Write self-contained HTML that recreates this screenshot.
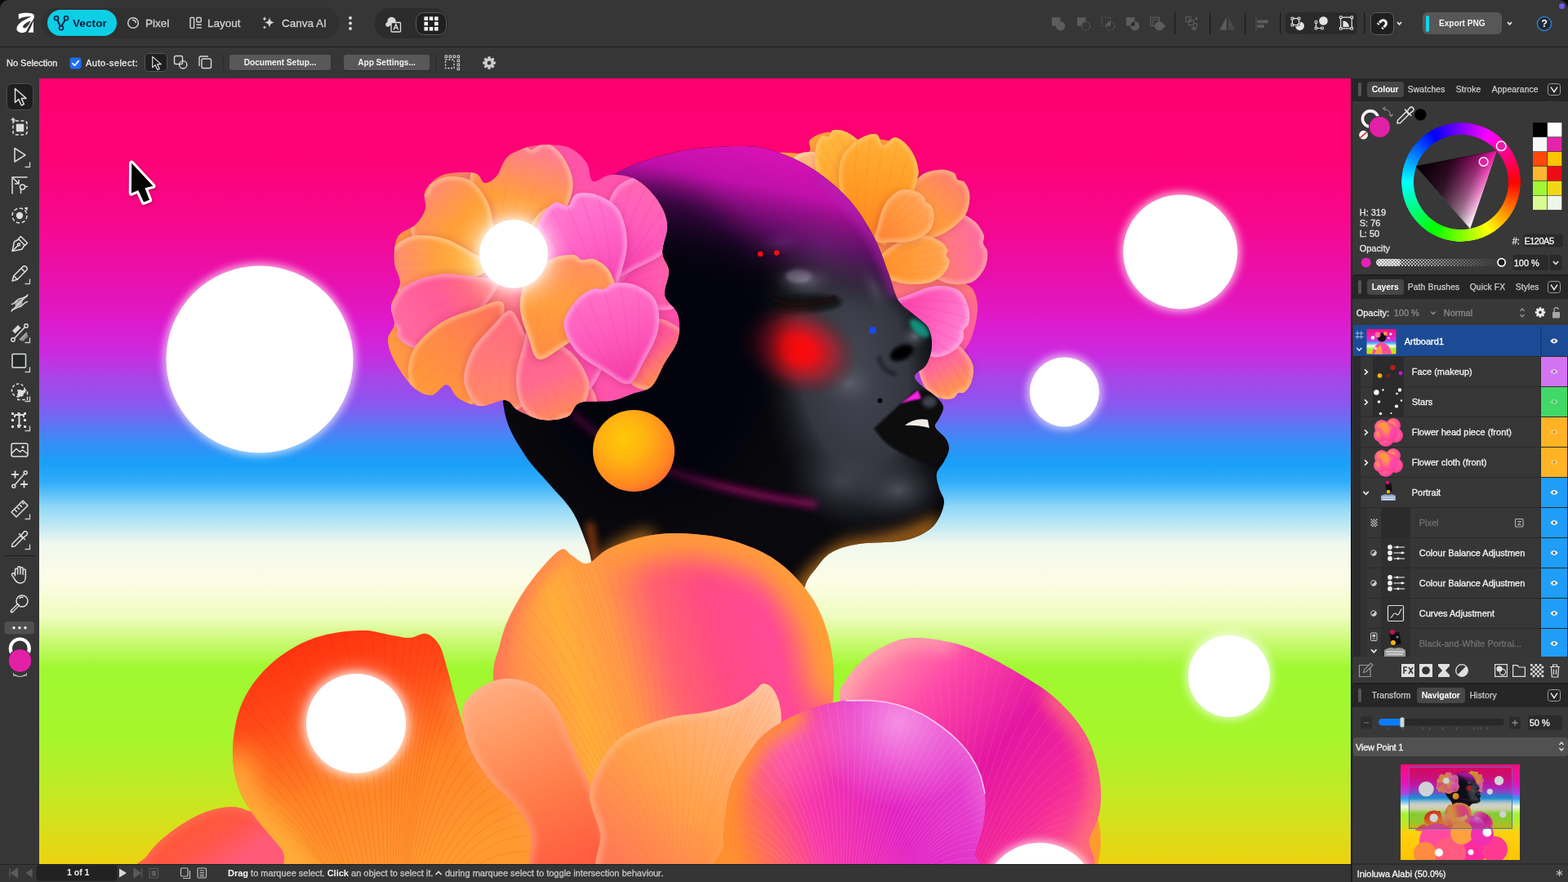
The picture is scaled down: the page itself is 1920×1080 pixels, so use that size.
<!DOCTYPE html><html lang="en"><head><meta charset="utf-8"><title>Affinity</title><style>
*{box-sizing:border-box;margin:0;padding:0}
html,body{width:1920px;height:1080px;overflow:hidden;background:#353535}
body{font-family:"Liberation Sans",sans-serif;color:#e8e8e8;font-size:11px;position:relative;-webkit-font-smoothing:antialiased}
#app{position:absolute;left:0;top:0;width:1920px;height:1080px;will-change:transform;overflow:hidden}
.abs{position:absolute}
.t{position:absolute;white-space:nowrap;line-height:1}
svg{overflow:visible}
#topbar{position:absolute;left:0;top:0;width:1920px;height:57px;background:#363636}
#topline{position:absolute;left:0;top:57px;width:1920px;height:1px;background:#1c1c1c}
#ctx{position:absolute;left:0;top:58px;width:1920px;height:38px;background:#363636}
#left{position:absolute;left:0;top:96px;width:48px;height:962px;background:#363636}
#status{position:absolute;left:0;top:1058px;width:1656px;height:22px;background:#353535;border-top:1px solid #222}
#right{position:absolute;left:1654px;top:96px;width:266px;height:984px;background:#383838;border-left:2.3px solid #1c1c1c}
#rin{position:absolute;left:0.7px;top:0;width:263px;height:984px}
.tabbar{position:absolute;left:-1px;width:265px;height:28px;background:#262626}
.tab{position:absolute;top:4px;height:19px;line-height:19px;font-size:10.3px;letter-spacing:.15px;color:#cdcdcd;white-space:nowrap;-webkit-text-stroke:0.25px #cdcdcd}
.tab.on{background:#474747;border-radius:4px;color:#fff;font-weight:bold;padding:0 6px;font-size:10.4px;letter-spacing:-.1px;-webkit-text-stroke:0}
.grip{position:absolute;left:7px;top:5px;width:4px;height:17px;border-radius:2px;background:#555}
.dd{position:absolute;left:239px;top:6px;width:16px;height:15px;border:1px solid #9a9a9a;border-radius:3.5px}
.btn{position:absolute;height:19px;line-height:19px;background:#585858;border-radius:3px;color:#f2f2f2;font-size:10.1px;font-weight:bold;text-align:center;box-shadow:0 1px 0 #2a2a2a}
.row{position:absolute;left:0;width:263px;height:37px}
.row .nm{position:absolute;top:0;line-height:37px;font-size:11px;color:#f0f0f0;white-space:nowrap;-webkit-text-stroke:0.3px}
.row .tag{position:absolute;left:230.5px;top:0;width:31.5px;height:36px}
.row .bg{position:absolute;top:0;height:36px;background:#363636}
</style></head><body><div id="app">
<svg width="1606" height="962" viewBox="48 96 1606 962" style="position:absolute;left:48px;top:96px;display:block;overflow:hidden">
<defs>
<linearGradient id="bg" x1="0" y1="0" x2="0" y2="1"><stop offset="0.0" stop-color="#ff0070"/><stop offset="0.09251559251559252" stop-color="#fe0274"/><stop offset="0.18503118503118504" stop-color="#f6088e"/><stop offset="0.27754677754677753" stop-color="#e414b8"/><stop offset="0.316008316008316" stop-color="#dc1cd0"/><stop offset="0.3492723492723493" stop-color="#cc2ae0"/><stop offset="0.38357588357588357" stop-color="#a646e8"/><stop offset="0.4158004158004158" stop-color="#8a58f0"/><stop offset="0.46153846153846156" stop-color="#3a8cf6"/><stop offset="0.4896049896049896" stop-color="#18a0f8"/><stop offset="0.5135135135135135" stop-color="#30acf8"/><stop offset="0.5457380457380457" stop-color="#90d8f8"/><stop offset="0.5925155925155925" stop-color="#f0f8ee"/><stop offset="0.6382536382536382" stop-color="#fdfde6"/><stop offset="0.685031185031185" stop-color="#f0fcc0"/><stop offset="0.7182952182952183" stop-color="#c8fa70"/><stop offset="0.7505197505197505" stop-color="#a0f830"/><stop offset="0.8357588357588358" stop-color="#a6f62c"/><stop offset="0.8721413721413721" stop-color="#b2f02a"/><stop offset="0.9085239085239085" stop-color="#c2ea24"/><stop offset="0.9501039501039501" stop-color="#d6e01c"/><stop offset="1.0" stop-color="#ecd210"/></linearGradient>
<radialGradient id="glow" cx="0.5" cy="0.5" r="0.5"><stop offset="0" stop-color="#fff"/><stop offset="0.86" stop-color="#fff"/><stop offset="0.9" stop-color="#fff" stop-opacity="0.8"/><stop offset="0.95" stop-color="#fff" stop-opacity="0.3"/><stop offset="1" stop-color="#fff" stop-opacity="0"/></radialGradient>
<radialGradient id="ear" cx="0.38" cy="0.35" r="0.75"><stop offset="0" stop-color="#ffc808"/><stop offset="0.35" stop-color="#ffb410"/><stop offset="0.75" stop-color="#ff8a20"/><stop offset="1" stop-color="#ff6030"/></radialGradient>
<radialGradient id="pk" cx="0.45" cy="0.35" r="0.7"><stop offset="0" stop-color="#ff86dc"/><stop offset="0.55" stop-color="#ff5cbc"/><stop offset="1" stop-color="#ff4c9a"/></radialGradient>
<radialGradient id="pk2" cx="0.4" cy="0.35" r="0.75"><stop offset="0" stop-color="#ff78cc"/><stop offset="0.6" stop-color="#ff4fa4"/><stop offset="1" stop-color="#ff6a78"/></radialGradient>
<radialGradient id="pko" cx="0.35" cy="0.3" r="0.85"><stop offset="0" stop-color="#ff66b8"/><stop offset="0.55" stop-color="#ff5a98"/><stop offset="1" stop-color="#ff9a38"/></radialGradient>
<radialGradient id="og" cx="0.45" cy="0.4" r="0.7"><stop offset="0" stop-color="#ffc048"/><stop offset="0.5" stop-color="#ffa236"/><stop offset="1" stop-color="#ff7a5c"/></radialGradient>
<radialGradient id="og2" cx="0.5" cy="0.45" r="0.7"><stop offset="0" stop-color="#ffb040"/><stop offset="0.6" stop-color="#ff9838"/><stop offset="1" stop-color="#ff6e78"/></radialGradient>
<radialGradient id="pch" cx="0.4" cy="0.4" r="0.75"><stop offset="0" stop-color="#ffb268"/><stop offset="0.5" stop-color="#ff8a6a"/><stop offset="1" stop-color="#ff5c96"/></radialGradient>
<linearGradient id="opk" x1="0" y1="0" x2="1" y2="0.3"><stop offset="0" stop-color="#ffa838"/><stop offset="0.5" stop-color="#ff8a60"/><stop offset="1" stop-color="#ff66a8"/></linearGradient>
<linearGradient id="pko2" x1="0" y1="0" x2="0.4" y2="1"><stop offset="0" stop-color="#ff5aa6"/><stop offset="0.55" stop-color="#ff6a8a"/><stop offset="1" stop-color="#ff9a34"/></linearGradient>
<linearGradient id="lfbase" x1="480" y1="0" x2="830" y2="0" gradientUnits="userSpaceOnUse"><stop offset="0" stop-color="#ff9a40"/><stop offset="0.35" stop-color="#ff7a70"/><stop offset="0.6" stop-color="#ff55a8"/><stop offset="1" stop-color="#ff52b0"/></linearGradient>
<linearGradient id="rfbase" x1="0" y1="170" x2="0" y2="440" gradientUnits="userSpaceOnUse"><stop offset="0" stop-color="#ffa43a"/><stop offset="0.5" stop-color="#ff9444"/><stop offset="0.75" stop-color="#ff6a90"/><stop offset="1" stop-color="#ff5aa8"/></linearGradient>
<linearGradient id="pA" x1="604" y1="900" x2="1022" y2="790" gradientUnits="userSpaceOnUse"><stop offset="0" stop-color="#ff7458"/><stop offset="0.08" stop-color="#ff8a50"/><stop offset="0.26" stop-color="#ffae3a"/><stop offset="0.4" stop-color="#ff9a48"/><stop offset="0.54" stop-color="#ff6270"/><stop offset="0.68" stop-color="#ff4a86"/><stop offset="0.84" stop-color="#ff4a98"/><stop offset="0.95" stop-color="#ff6a70"/><stop offset="1" stop-color="#ff8a40"/></linearGradient>
<linearGradient id="pB" x1="420" y1="772" x2="520" y2="1060" gradientUnits="userSpaceOnUse"><stop offset="0" stop-color="#ff3410"/><stop offset="0.25" stop-color="#ff4a18"/><stop offset="0.6" stop-color="#ff8426"/><stop offset="1" stop-color="#ff9a30"/></linearGradient>
<linearGradient id="pC" x1="230" y1="985" x2="280" y2="1060" gradientUnits="userSpaceOnUse"><stop offset="0" stop-color="#ff5a30"/><stop offset="0.6" stop-color="#ff5648"/><stop offset="1" stop-color="#ff5a78"/></linearGradient>
<linearGradient id="pD" x1="600" y1="830" x2="700" y2="1060" gradientUnits="userSpaceOnUse"><stop offset="0" stop-color="#ffae84"/><stop offset="0.3" stop-color="#ff9862"/><stop offset="0.65" stop-color="#ff7a48"/><stop offset="1" stop-color="#ff5c40"/></linearGradient>
<linearGradient id="pE" x1="930" y1="840" x2="740" y2="1040" gradientUnits="userSpaceOnUse"><stop offset="0" stop-color="#ffc09a"/><stop offset="0.3" stop-color="#ffb070"/><stop offset="0.6" stop-color="#ffa24a"/><stop offset="1" stop-color="#ff7a54"/></linearGradient>
<linearGradient id="pF" x1="888" y1="1000" x2="1206" y2="900" gradientUnits="userSpaceOnUse"><stop offset="0" stop-color="#ff8a30"/><stop offset="0.12" stop-color="#ff6a60"/><stop offset="0.3" stop-color="#f838a8"/><stop offset="0.6" stop-color="#e222c2"/><stop offset="0.85" stop-color="#e43ccc"/><stop offset="1" stop-color="#f070dc"/></linearGradient>
<radialGradient id="pFhi" cx="1100" cy="885" r="105" gradientUnits="userSpaceOnUse"><stop offset="0" stop-color="#f9a0e8" stop-opacity="0.85"/><stop offset="1" stop-color="#f9a0e8" stop-opacity="0"/></radialGradient>
<radialGradient id="pFpk" cx="960" cy="900" r="90" gradientUnits="userSpaceOnUse"><stop offset="0" stop-color="#ff6aa8" stop-opacity="0.9"/><stop offset="1" stop-color="#ff6aa8" stop-opacity="0"/></radialGradient>
<linearGradient id="pG" x1="1060" y1="800" x2="1330" y2="1040" gradientUnits="userSpaceOnUse"><stop offset="0" stop-color="#ff96a4"/><stop offset="0.25" stop-color="#ff4aa8"/><stop offset="0.55" stop-color="#e416a2"/><stop offset="0.8" stop-color="#f42a98"/><stop offset="1" stop-color="#ff5a8a"/></linearGradient>
<linearGradient id="headtop" x1="940" y1="176" x2="905" y2="350" gradientUnits="userSpaceOnUse"><stop offset="0" stop-color="#dc12b6"/><stop offset="0.3" stop-color="#c010aa"/><stop offset="0.62" stop-color="#640c6c" stop-opacity="0.8"/><stop offset="1" stop-color="#0a0a10" stop-opacity="0"/></linearGradient>
<radialGradient id="blush" cx="0.5" cy="0.5" r="0.5"><stop offset="0" stop-color="#ff0a0a"/><stop offset="0.28" stop-color="#f80c12" stop-opacity="0.95"/><stop offset="0.6" stop-color="#d81424" stop-opacity="0.55"/><stop offset="1" stop-color="#601018" stop-opacity="0"/></radialGradient>
<radialGradient id="hl" cx="0.5" cy="0.5" r="0.5"><stop offset="0" stop-color="#585b66" stop-opacity="0.9"/><stop offset="1" stop-color="#30323c" stop-opacity="0"/></radialGradient>
<radialGradient id="facel" cx="0.5" cy="0.5" r="0.5"><stop offset="0" stop-color="#454853" stop-opacity="1"/><stop offset="0.55" stop-color="#3a3d47" stop-opacity="0.88"/><stop offset="1" stop-color="#14151a" stop-opacity="0"/></radialGradient>
<radialGradient id="hl2" cx="0.5" cy="0.5" r="0.5"><stop offset="0" stop-color="#8a8c98" stop-opacity="0.9"/><stop offset="1" stop-color="#40424c" stop-opacity="0"/></radialGradient>
<radialGradient id="neckglow" cx="0.5" cy="0.5" r="0.5"><stop offset="0" stop-color="#ff9a20" stop-opacity="0.95"/><stop offset="0.5" stop-color="#c05a10" stop-opacity="0.6"/><stop offset="1" stop-color="#301000" stop-opacity="0"/></radialGradient>
<filter id="b2" filterUnits="userSpaceOnUse" x="0" y="40" width="1720" height="1100"><feGaussianBlur stdDeviation="2"/></filter>
<filter id="b5" filterUnits="userSpaceOnUse" x="0" y="40" width="1720" height="1100"><feGaussianBlur stdDeviation="5"/></filter>
<filter id="b10" filterUnits="userSpaceOnUse" x="0" y="40" width="1720" height="1100"><feGaussianBlur stdDeviation="10"/></filter>
<filter id="b16" filterUnits="userSpaceOnUse" x="0" y="40" width="1720" height="1100"><feGaussianBlur stdDeviation="16"/></filter>
<filter id="b1" filterUnits="userSpaceOnUse" x="0" y="40" width="1720" height="1100"><feGaussianBlur stdDeviation="0.8"/></filter>
<clipPath id="headclip"><path d="M910.0 179.0C928.5 179.3 936.5 181.2 951.0 186.0C965.5 190.8 982.2 198.2 997.0 208.0C1011.8 217.8 1027.8 231.3 1040.0 245.0C1052.2 258.7 1062.0 275.0 1070.0 290.0C1078.0 305.0 1083.0 322.0 1088.0 335.0C1093.0 348.0 1094.7 359.5 1100.0 368.0C1105.3 376.5 1113.8 380.3 1120.0 386.0C1126.2 391.7 1133.5 395.5 1137.0 402.0C1140.5 408.5 1141.5 417.5 1141.0 425.0C1140.5 432.5 1137.5 441.2 1134.0 447.0C1130.5 452.8 1121.0 455.8 1120.0 460.0C1119.0 464.2 1123.8 467.8 1128.0 472.0C1132.2 476.2 1140.5 480.7 1145.0 485.0C1149.5 489.3 1154.2 493.5 1155.0 498.0C1155.8 502.5 1151.7 507.8 1150.0 512.0C1148.3 516.2 1143.7 518.8 1145.0 523.0C1146.3 527.2 1155.2 532.5 1158.0 537.0C1160.8 541.5 1162.3 545.3 1162.0 550.0C1161.7 554.7 1158.5 560.0 1156.0 565.0C1153.5 570.0 1148.0 574.5 1147.0 580.0C1146.0 585.5 1148.5 592.3 1150.0 598.0C1151.5 603.7 1156.0 608.0 1156.0 614.0C1156.0 620.0 1153.3 628.0 1150.0 634.0C1146.7 640.0 1143.3 645.3 1136.0 650.0C1128.7 654.7 1120.0 659.3 1106.0 662.0C1092.0 664.7 1066.5 663.7 1052.0 666.0C1037.5 668.3 1027.7 671.2 1019.0 676.0C1010.3 680.8 1005.7 687.7 1000.0 695.0C994.3 702.3 988.3 707.5 985.0 720.0C981.7 732.5 1022.5 761.7 980.0 770.0C937.5 778.3 772.5 782.8 730.0 770.0C687.5 757.2 727.3 711.3 725.0 693.0C722.7 674.7 720.2 671.3 716.0 660.0C711.8 648.7 707.3 636.3 700.0 625.0C692.7 613.7 681.7 603.5 672.0 592.0C662.3 580.5 651.0 570.5 642.0 556.0C633.0 541.5 622.0 526.0 618.0 505.0C614.0 484.0 611.8 459.2 618.0 430.0C624.2 400.8 641.3 358.0 655.0 330.0C668.7 302.0 685.8 279.8 700.0 262.0C714.2 244.2 727.0 233.2 740.0 223.0C753.0 212.8 761.3 207.5 778.0 201.0C794.7 194.5 818.0 187.7 840.0 184.0C862.0 180.3 891.5 178.7 910.0 179.0Z"/></clipPath>
</defs>
<g id="artg">
<rect x="48" y="96" width="1606" height="962" fill="url(#bg)"/>
<circle cx="318" cy="440" r="118.5" fill="#fff" opacity=".6" filter="url(#b5)"/><circle cx="318" cy="440" r="114.5" fill="#fff"/>
<circle cx="1445.3" cy="308.4" r="74" fill="#fff" opacity=".6" filter="url(#b5)"/><circle cx="1445.3" cy="308.4" r="70" fill="#fff"/>
<circle cx="1303.4" cy="480" r="46.5" fill="#fff" opacity=".6" filter="url(#b5)"/><circle cx="1303.4" cy="480" r="42.5" fill="#fff"/>
<circle cx="1505" cy="828" r="54" fill="#fff" opacity=".6" filter="url(#b5)"/><circle cx="1505" cy="828" r="50" fill="#fff"/>
<path d="M945.0 192.0C943.2 181.5 981.2 190.5 989.0 187.0C996.8 183.5 987.8 175.2 992.0 171.0C996.2 166.8 1006.0 162.2 1014.0 162.0C1022.0 161.8 1034.2 166.3 1040.0 170.0C1045.8 173.7 1043.8 183.8 1049.0 184.0C1054.2 184.2 1062.0 171.8 1071.0 171.0C1080.0 170.2 1094.0 172.7 1103.0 179.0C1112.0 185.3 1122.7 200.3 1125.0 209.0C1127.3 217.7 1114.5 226.3 1117.0 231.0C1119.5 235.7 1131.3 235.3 1140.0 237.0C1148.7 238.7 1163.3 237.7 1169.0 241.0C1174.7 244.3 1169.8 251.3 1174.0 257.0C1178.2 262.7 1189.7 267.2 1194.0 275.0C1198.3 282.8 1201.0 295.0 1200.0 304.0C1199.0 313.0 1192.3 322.7 1188.0 329.0C1183.7 335.3 1173.5 337.8 1174.0 342.0C1174.5 346.2 1187.2 347.8 1191.0 354.0C1194.8 360.2 1197.5 368.5 1197.0 379.0C1196.5 389.5 1192.7 407.0 1188.0 417.0C1183.3 427.0 1176.5 434.8 1169.0 439.0C1161.5 443.2 1154.5 445.2 1143.0 442.0C1131.5 438.8 1115.5 438.7 1100.0 420.0C1084.5 401.3 1066.7 358.3 1050.0 330.0C1033.3 301.7 1017.5 273.0 1000.0 250.0C982.5 227.0 946.8 202.5 945.0 192.0Z" fill="url(#rfbase)"/>
<linearGradient id="gf1" gradientUnits="userSpaceOnUse" x1="1075" y1="262" x2="971" y2="202"><stop offset="0" stop-color="#ff9050"/><stop offset=".55" stop-color="#ffa858"/><stop offset="1" stop-color="#ffc088"/></linearGradient><clipPath id="kf1"><path d="M1075.0 262.0C1072.8 265.8 1059.8 263.1 1049.7 262.6C1039.6 262.1 1025.8 262.0 1014.4 258.9C1003.1 255.8 989.5 250.1 981.5 244.0C973.4 238.0 968.9 228.9 966.1 222.7C963.2 216.4 963.5 209.9 964.4 206.4C965.2 203.0 969.8 204.3 971.1 202.0C972.4 199.7 969.5 195.5 972.2 192.9C974.8 190.3 980.3 186.8 987.1 186.3C993.8 185.8 1003.5 185.8 1012.7 190.0C1021.8 194.1 1033.7 202.8 1042.0 211.1C1050.4 219.4 1057.4 231.3 1062.9 239.8C1068.4 248.3 1077.2 258.2 1075.0 262.0Z"/></clipPath><path d="M1075.0 262.0C1072.8 265.8 1059.8 263.1 1049.7 262.6C1039.6 262.1 1025.8 262.0 1014.4 258.9C1003.1 255.8 989.5 250.1 981.5 244.0C973.4 238.0 968.9 228.9 966.1 222.7C963.2 216.4 963.5 209.9 964.4 206.4C965.2 203.0 969.8 204.3 971.1 202.0C972.4 199.7 969.5 195.5 972.2 192.9C974.8 190.3 980.3 186.8 987.1 186.3C993.8 185.8 1003.5 185.8 1012.7 190.0C1021.8 194.1 1033.7 202.8 1042.0 211.1C1050.4 219.4 1057.4 231.3 1062.9 239.8C1068.4 248.3 1077.2 258.2 1075.0 262.0Z" fill="#a01850" opacity=".28" filter="url(#b5)" transform="translate(2.6 1.5)"/><path d="M1075.0 262.0C1072.8 265.8 1059.8 263.1 1049.7 262.6C1039.6 262.1 1025.8 262.0 1014.4 258.9C1003.1 255.8 989.5 250.1 981.5 244.0C973.4 238.0 968.9 228.9 966.1 222.7C963.2 216.4 963.5 209.9 964.4 206.4C965.2 203.0 969.8 204.3 971.1 202.0C972.4 199.7 969.5 195.5 972.2 192.9C974.8 190.3 980.3 186.8 987.1 186.3C993.8 185.8 1003.5 185.8 1012.7 190.0C1021.8 194.1 1033.7 202.8 1042.0 211.1C1050.4 219.4 1057.4 231.3 1062.9 239.8C1068.4 248.3 1077.2 258.2 1075.0 262.0Z" fill="url(#gf1)"/><g clip-path="url(#kf1)"><path d="M1075.0 262.0C1072.8 265.8 1059.8 263.1 1049.7 262.6C1039.6 262.1 1025.8 262.0 1014.4 258.9C1003.1 255.8 989.5 250.1 981.5 244.0C973.4 238.0 968.9 228.9 966.1 222.7C963.2 216.4 963.5 209.9 964.4 206.4C965.2 203.0 969.8 204.3 971.1 202.0C972.4 199.7 969.5 195.5 972.2 192.9C974.8 190.3 980.3 186.8 987.1 186.3C993.8 185.8 1003.5 185.8 1012.7 190.0C1021.8 194.1 1033.7 202.8 1042.0 211.1C1050.4 219.4 1057.4 231.3 1062.9 239.8C1068.4 248.3 1077.2 258.2 1075.0 262.0Z" fill="none" stroke="#ffd8b0" stroke-width="9" opacity="0.55" filter="url(#b2)"/><path d="M1062 261Q1003 243 962 222M1063 258Q1008 235 968 213M1065 256Q1013 226 973 203M1066 254Q1018 217 979 194M1067 251Q1023 209 984 184" fill="none" stroke="#ff9050" stroke-width="1.5" opacity=".22"/></g>
<linearGradient id="gf2" gradientUnits="userSpaceOnUse" x1="1085" y1="300" x2="1015" y2="168"><stop offset="0" stop-color="#ff8a28"/><stop offset=".55" stop-color="#ffa42c"/><stop offset="1" stop-color="#ffb63c"/></linearGradient><clipPath id="kf2"><path d="M1085.0 300.0C1080.7 302.3 1069.3 290.5 1059.5 283.0C1049.8 275.4 1036.1 265.7 1026.5 254.7C1016.9 243.6 1006.6 228.4 1001.9 216.8C997.2 205.1 997.7 193.0 998.3 184.7C998.9 176.5 1002.8 170.2 1005.5 167.3C1008.2 164.4 1012.1 168.9 1014.6 167.6C1017.1 166.2 1016.5 160.0 1020.6 159.2C1024.7 158.5 1032.1 158.8 1039.1 163.0C1046.1 167.2 1055.6 174.0 1062.5 184.6C1069.3 195.1 1076.3 212.0 1080.1 226.1C1083.9 240.3 1084.3 257.0 1085.1 269.3C1086.0 281.7 1089.3 297.7 1085.0 300.0Z"/></clipPath><path d="M1085.0 300.0C1080.7 302.3 1069.3 290.5 1059.5 283.0C1049.8 275.4 1036.1 265.7 1026.5 254.7C1016.9 243.6 1006.6 228.4 1001.9 216.8C997.2 205.1 997.7 193.0 998.3 184.7C998.9 176.5 1002.8 170.2 1005.5 167.3C1008.2 164.4 1012.1 168.9 1014.6 167.6C1017.1 166.2 1016.5 160.0 1020.6 159.2C1024.7 158.5 1032.1 158.8 1039.1 163.0C1046.1 167.2 1055.6 174.0 1062.5 184.6C1069.3 195.1 1076.3 212.0 1080.1 226.1C1083.9 240.3 1084.3 257.0 1085.1 269.3C1086.0 281.7 1089.3 297.7 1085.0 300.0Z" fill="#a01850" opacity=".28" filter="url(#b5)" transform="translate(1.4 2.6)"/><path d="M1085.0 300.0C1080.7 302.3 1069.3 290.5 1059.5 283.0C1049.8 275.4 1036.1 265.7 1026.5 254.7C1016.9 243.6 1006.6 228.4 1001.9 216.8C997.2 205.1 997.7 193.0 998.3 184.7C998.9 176.5 1002.8 170.2 1005.5 167.3C1008.2 164.4 1012.1 168.9 1014.6 167.6C1017.1 166.2 1016.5 160.0 1020.6 159.2C1024.7 158.5 1032.1 158.8 1039.1 163.0C1046.1 167.2 1055.6 174.0 1062.5 184.6C1069.3 195.1 1076.3 212.0 1080.1 226.1C1083.9 240.3 1084.3 257.0 1085.1 269.3C1086.0 281.7 1089.3 297.7 1085.0 300.0Z" fill="url(#gf2)"/><g clip-path="url(#kf2)"><path d="M1085.0 300.0C1080.7 302.3 1069.3 290.5 1059.5 283.0C1049.8 275.4 1036.1 265.7 1026.5 254.7C1016.9 243.6 1006.6 228.4 1001.9 216.8C997.2 205.1 997.7 193.0 998.3 184.7C998.9 176.5 1002.8 170.2 1005.5 167.3C1008.2 164.4 1012.1 168.9 1014.6 167.6C1017.1 166.2 1016.5 160.0 1020.6 159.2C1024.7 158.5 1032.1 158.8 1039.1 163.0C1046.1 167.2 1055.6 174.0 1062.5 184.6C1069.3 195.1 1076.3 212.0 1080.1 226.1C1083.9 240.3 1084.3 257.0 1085.1 269.3C1086.0 281.7 1089.3 297.7 1085.0 300.0Z" fill="none" stroke="#ffcc70" stroke-width="9" opacity="0.55" filter="url(#b2)"/><path d="M1073 290Q1024 231 995 181M1075 288Q1033 226 1005 176M1078 287Q1043 221 1016 170M1081 285Q1052 215 1026 165M1083 284Q1062 210 1037 159" fill="none" stroke="#ff8a28" stroke-width="1.5" opacity=".22"/></g>
<linearGradient id="gf3" gradientUnits="userSpaceOnUse" x1="1130" y1="400" x2="1173" y2="481"><stop offset="0" stop-color="#ff4a9a"/><stop offset=".55" stop-color="#ff6a98"/><stop offset="1" stop-color="#ff9a44"/></linearGradient><clipPath id="kf3"><path d="M1130.0 400.0C1134.0 397.9 1142.4 404.4 1149.8 408.2C1157.3 412.1 1167.8 416.9 1174.6 423.2C1181.5 429.4 1188.4 438.4 1190.9 445.8C1193.4 453.1 1191.3 461.5 1189.6 467.3C1188.0 473.0 1183.8 477.8 1181.1 480.2C1178.3 482.5 1175.6 480.0 1173.2 481.2C1170.8 482.5 1170.5 486.7 1166.8 487.7C1163.2 488.8 1156.8 489.6 1151.3 487.6C1145.8 485.7 1138.4 482.3 1133.9 476.1C1129.4 469.8 1125.6 459.1 1124.3 449.9C1122.9 440.8 1124.8 429.3 1125.7 421.0C1126.7 412.7 1126.0 402.1 1130.0 400.0Z"/></clipPath><path d="M1130.0 400.0C1134.0 397.9 1142.4 404.4 1149.8 408.2C1157.3 412.1 1167.8 416.9 1174.6 423.2C1181.5 429.4 1188.4 438.4 1190.9 445.8C1193.4 453.1 1191.3 461.5 1189.6 467.3C1188.0 473.0 1183.8 477.8 1181.1 480.2C1178.3 482.5 1175.6 480.0 1173.2 481.2C1170.8 482.5 1170.5 486.7 1166.8 487.7C1163.2 488.8 1156.8 489.6 1151.3 487.6C1145.8 485.7 1138.4 482.3 1133.9 476.1C1129.4 469.8 1125.6 459.1 1124.3 449.9C1122.9 440.8 1124.8 429.3 1125.7 421.0C1126.7 412.7 1126.0 402.1 1130.0 400.0Z" fill="#a01850" opacity=".28" filter="url(#b5)" transform="translate(-1.4 -2.6)"/><path d="M1130.0 400.0C1134.0 397.9 1142.4 404.4 1149.8 408.2C1157.3 412.1 1167.8 416.9 1174.6 423.2C1181.5 429.4 1188.4 438.4 1190.9 445.8C1193.4 453.1 1191.3 461.5 1189.6 467.3C1188.0 473.0 1183.8 477.8 1181.1 480.2C1178.3 482.5 1175.6 480.0 1173.2 481.2C1170.8 482.5 1170.5 486.7 1166.8 487.7C1163.2 488.8 1156.8 489.6 1151.3 487.6C1145.8 485.7 1138.4 482.3 1133.9 476.1C1129.4 469.8 1125.6 459.1 1124.3 449.9C1122.9 440.8 1124.8 429.3 1125.7 421.0C1126.7 412.7 1126.0 402.1 1130.0 400.0Z" fill="url(#gf3)"/><g clip-path="url(#kf3)"><path d="M1130.0 400.0C1134.0 397.9 1142.4 404.4 1149.8 408.2C1157.3 412.1 1167.8 416.9 1174.6 423.2C1181.5 429.4 1188.4 438.4 1190.9 445.8C1193.4 453.1 1191.3 461.5 1189.6 467.3C1188.0 473.0 1183.8 477.8 1181.1 480.2C1178.3 482.5 1175.6 480.0 1173.2 481.2C1170.8 482.5 1170.5 486.7 1166.8 487.7C1163.2 488.8 1156.8 489.6 1151.3 487.6C1145.8 485.7 1138.4 482.3 1133.9 476.1C1129.4 469.8 1125.6 459.1 1124.3 449.9C1122.9 440.8 1124.8 429.3 1125.7 421.0C1126.7 412.7 1126.0 402.1 1130.0 400.0Z" fill="none" stroke="#ffc0a0" stroke-width="9" opacity="0.55" filter="url(#b2)"/><path d="M1139 406Q1174 439 1192 469M1137 407Q1165 444 1182 474M1134 408Q1156 449 1172 480M1132 409Q1147 454 1162 485M1129 411Q1138 458 1153 490" fill="none" stroke="#ff4a9a" stroke-width="1.5" opacity=".22"/></g>
<linearGradient id="gf4" gradientUnits="userSpaceOnUse" x1="1092" y1="372" x2="1180" y2="404"><stop offset="0" stop-color="#f83aa8"/><stop offset=".55" stop-color="#ff5cbc"/><stop offset="1" stop-color="#ff80d0"/></linearGradient><clipPath id="kf4"><path d="M1092.0 372.0C1094.1 366.2 1105.4 364.1 1114.2 360.4C1123.0 356.8 1135.1 351.1 1145.0 350.2C1154.8 349.3 1166.4 350.8 1173.2 355.1C1180.0 359.3 1183.5 368.9 1185.7 375.7C1187.9 382.5 1187.3 390.9 1186.4 395.6C1185.5 400.4 1181.6 400.7 1180.3 404.1C1179.1 407.6 1181.4 411.7 1179.0 416.2C1176.5 420.6 1171.5 427.5 1165.6 431.0C1159.6 434.5 1151.1 438.5 1143.3 437.2C1135.5 435.8 1125.5 429.8 1118.5 422.8C1111.6 415.8 1106.0 403.6 1101.6 395.2C1097.2 386.7 1089.9 377.8 1092.0 372.0Z"/></clipPath><path d="M1092.0 372.0C1094.1 366.2 1105.4 364.1 1114.2 360.4C1123.0 356.8 1135.1 351.1 1145.0 350.2C1154.8 349.3 1166.4 350.8 1173.2 355.1C1180.0 359.3 1183.5 368.9 1185.7 375.7C1187.9 382.5 1187.3 390.9 1186.4 395.6C1185.5 400.4 1181.6 400.7 1180.3 404.1C1179.1 407.6 1181.4 411.7 1179.0 416.2C1176.5 420.6 1171.5 427.5 1165.6 431.0C1159.6 434.5 1151.1 438.5 1143.3 437.2C1135.5 435.8 1125.5 429.8 1118.5 422.8C1111.6 415.8 1106.0 403.6 1101.6 395.2C1097.2 386.7 1089.9 377.8 1092.0 372.0Z" fill="#a01850" opacity=".28" filter="url(#b5)" transform="translate(-2.8 -1.0)"/><path d="M1092.0 372.0C1094.1 366.2 1105.4 364.1 1114.2 360.4C1123.0 356.8 1135.1 351.1 1145.0 350.2C1154.8 349.3 1166.4 350.8 1173.2 355.1C1180.0 359.3 1183.5 368.9 1185.7 375.7C1187.9 382.5 1187.3 390.9 1186.4 395.6C1185.5 400.4 1181.6 400.7 1180.3 404.1C1179.1 407.6 1181.4 411.7 1179.0 416.2C1176.5 420.6 1171.5 427.5 1165.6 431.0C1159.6 434.5 1151.1 438.5 1143.3 437.2C1135.5 435.8 1125.5 429.8 1118.5 422.8C1111.6 415.8 1106.0 403.6 1101.6 395.2C1097.2 386.7 1089.9 377.8 1092.0 372.0Z" fill="url(#gf4)"/><g clip-path="url(#kf4)"><path d="M1092.0 372.0C1094.1 366.2 1105.4 364.1 1114.2 360.4C1123.0 356.8 1135.1 351.1 1145.0 350.2C1154.8 349.3 1166.4 350.8 1173.2 355.1C1180.0 359.3 1183.5 368.9 1185.7 375.7C1187.9 382.5 1187.3 390.9 1186.4 395.6C1185.5 400.4 1181.6 400.7 1180.3 404.1C1179.1 407.6 1181.4 411.7 1179.0 416.2C1176.5 420.6 1171.5 427.5 1165.6 431.0C1159.6 434.5 1151.1 438.5 1143.3 437.2C1135.5 435.8 1125.5 429.8 1118.5 422.8C1111.6 415.8 1106.0 403.6 1101.6 395.2C1097.2 386.7 1089.9 377.8 1092.0 372.0Z" fill="none" stroke="#ffc0ec" stroke-width="9" opacity="0.55" filter="url(#b2)"/><path d="M1103 368Q1154 365 1189 375M1102 372Q1150 378 1184 389M1101 375Q1145 391 1179 404M1100 379Q1140 404 1173 418M1098 382Q1136 417 1168 432" fill="none" stroke="#f83aa8" stroke-width="1.5" opacity=".22"/></g>
<linearGradient id="gf5" gradientUnits="userSpaceOnUse" x1="1110" y1="318" x2="1204" y2="298"><stop offset="0" stop-color="#ff7a50"/><stop offset=".55" stop-color="#ff7a80"/><stop offset="1" stop-color="#ff6aa4"/></linearGradient><clipPath id="kf5"><path d="M1110.0 318.0C1108.7 312.0 1117.4 304.1 1123.1 296.3C1128.8 288.5 1136.2 277.2 1144.2 271.2C1152.3 265.2 1163.2 260.3 1171.3 260.3C1179.5 260.3 1187.7 266.6 1193.3 271.1C1198.8 275.6 1202.9 283.1 1204.6 287.6C1206.4 292.1 1203.1 294.5 1203.9 298.0C1204.7 301.6 1208.9 303.8 1209.2 308.9C1209.4 314.0 1208.8 322.5 1205.5 328.6C1202.2 334.8 1197.0 342.7 1189.5 345.8C1182.0 348.8 1170.1 349.0 1160.3 346.8C1150.5 344.6 1139.1 337.3 1130.7 332.5C1122.4 327.7 1111.3 324.0 1110.0 318.0Z"/></clipPath><path d="M1110.0 318.0C1108.7 312.0 1117.4 304.1 1123.1 296.3C1128.8 288.5 1136.2 277.2 1144.2 271.2C1152.3 265.2 1163.2 260.3 1171.3 260.3C1179.5 260.3 1187.7 266.6 1193.3 271.1C1198.8 275.6 1202.9 283.1 1204.6 287.6C1206.4 292.1 1203.1 294.5 1203.9 298.0C1204.7 301.6 1208.9 303.8 1209.2 308.9C1209.4 314.0 1208.8 322.5 1205.5 328.6C1202.2 334.8 1197.0 342.7 1189.5 345.8C1182.0 348.8 1170.1 349.0 1160.3 346.8C1150.5 344.6 1139.1 337.3 1130.7 332.5C1122.4 327.7 1111.3 324.0 1110.0 318.0Z" fill="#a01850" opacity=".28" filter="url(#b5)" transform="translate(-2.9 0.6)"/><path d="M1110.0 318.0C1108.7 312.0 1117.4 304.1 1123.1 296.3C1128.8 288.5 1136.2 277.2 1144.2 271.2C1152.3 265.2 1163.2 260.3 1171.3 260.3C1179.5 260.3 1187.7 266.6 1193.3 271.1C1198.8 275.6 1202.9 283.1 1204.6 287.6C1206.4 292.1 1203.1 294.5 1203.9 298.0C1204.7 301.6 1208.9 303.8 1209.2 308.9C1209.4 314.0 1208.8 322.5 1205.5 328.6C1202.2 334.8 1197.0 342.7 1189.5 345.8C1182.0 348.8 1170.1 349.0 1160.3 346.8C1150.5 344.6 1139.1 337.3 1130.7 332.5C1122.4 327.7 1111.3 324.0 1110.0 318.0Z" fill="url(#gf5)"/><g clip-path="url(#kf5)"><path d="M1110.0 318.0C1108.7 312.0 1117.4 304.1 1123.1 296.3C1128.8 288.5 1136.2 277.2 1144.2 271.2C1152.3 265.2 1163.2 260.3 1171.3 260.3C1179.5 260.3 1187.7 266.6 1193.3 271.1C1198.8 275.6 1202.9 283.1 1204.6 287.6C1206.4 292.1 1203.1 294.5 1203.9 298.0C1204.7 301.6 1208.9 303.8 1209.2 308.9C1209.4 314.0 1208.8 322.5 1205.5 328.6C1202.2 334.8 1197.0 342.7 1189.5 345.8C1182.0 348.8 1170.1 349.0 1160.3 346.8C1150.5 344.6 1139.1 337.3 1130.7 332.5C1122.4 327.7 1111.3 324.0 1110.0 318.0Z" fill="none" stroke="#ffc0b0" stroke-width="9" opacity="0.55" filter="url(#b2)"/><path d="M1118 309Q1161 279 1196 269M1119 312Q1163 292 1199 284M1119 316Q1166 306 1202 298M1120 320Q1169 320 1205 313M1121 323Q1172 333 1208 328" fill="none" stroke="#ff7a50" stroke-width="1.5" opacity=".22"/></g>
<linearGradient id="gf6" gradientUnits="userSpaceOnUse" x1="1100" y1="300" x2="1172" y2="220"><stop offset="0" stop-color="#ff8830"/><stop offset=".55" stop-color="#ff9a40"/><stop offset="1" stop-color="#ff8070"/></linearGradient><clipPath id="kf6"><path d="M1100.0 300.0C1096.2 296.6 1100.1 284.9 1101.6 275.2C1103.0 265.6 1104.3 252.3 1108.6 242.3C1112.9 232.4 1120.1 221.2 1127.1 215.4C1134.2 209.7 1144.1 208.5 1151.0 207.8C1157.8 207.2 1164.6 209.7 1168.2 211.7C1171.7 213.7 1170.0 217.7 1172.3 219.7C1174.5 221.8 1179.2 220.4 1181.7 223.9C1184.2 227.4 1187.5 233.9 1187.4 240.6C1187.3 247.3 1186.4 256.7 1181.3 264.2C1176.1 271.6 1165.9 280.1 1156.4 285.4C1147.0 290.7 1133.9 293.4 1124.5 295.9C1115.0 298.3 1103.8 303.4 1100.0 300.0Z"/></clipPath><path d="M1100.0 300.0C1096.2 296.6 1100.1 284.9 1101.6 275.2C1103.0 265.6 1104.3 252.3 1108.6 242.3C1112.9 232.4 1120.1 221.2 1127.1 215.4C1134.2 209.7 1144.1 208.5 1151.0 207.8C1157.8 207.2 1164.6 209.7 1168.2 211.7C1171.7 213.7 1170.0 217.7 1172.3 219.7C1174.5 221.8 1179.2 220.4 1181.7 223.9C1184.2 227.4 1187.5 233.9 1187.4 240.6C1187.3 247.3 1186.4 256.7 1181.3 264.2C1176.1 271.6 1165.9 280.1 1156.4 285.4C1147.0 290.7 1133.9 293.4 1124.5 295.9C1115.0 298.3 1103.8 303.4 1100.0 300.0Z" fill="#a01850" opacity=".28" filter="url(#b5)" transform="translate(-2.0 2.2)"/><path d="M1100.0 300.0C1096.2 296.6 1100.1 284.9 1101.6 275.2C1103.0 265.6 1104.3 252.3 1108.6 242.3C1112.9 232.4 1120.1 221.2 1127.1 215.4C1134.2 209.7 1144.1 208.5 1151.0 207.8C1157.8 207.2 1164.6 209.7 1168.2 211.7C1171.7 213.7 1170.0 217.7 1172.3 219.7C1174.5 221.8 1179.2 220.4 1181.7 223.9C1184.2 227.4 1187.5 233.9 1187.4 240.6C1187.3 247.3 1186.4 256.7 1181.3 264.2C1176.1 271.6 1165.9 280.1 1156.4 285.4C1147.0 290.7 1133.9 293.4 1124.5 295.9C1115.0 298.3 1103.8 303.4 1100.0 300.0Z" fill="url(#gf6)"/><g clip-path="url(#kf6)"><path d="M1100.0 300.0C1096.2 296.6 1100.1 284.9 1101.6 275.2C1103.0 265.6 1104.3 252.3 1108.6 242.3C1112.9 232.4 1120.1 221.2 1127.1 215.4C1134.2 209.7 1144.1 208.5 1151.0 207.8C1157.8 207.2 1164.6 209.7 1168.2 211.7C1171.7 213.7 1170.0 217.7 1172.3 219.7C1174.5 221.8 1179.2 220.4 1181.7 223.9C1184.2 227.4 1187.5 233.9 1187.4 240.6C1187.3 247.3 1186.4 256.7 1181.3 264.2C1176.1 271.6 1165.9 280.1 1156.4 285.4C1147.0 290.7 1133.9 293.4 1124.5 295.9C1115.0 298.3 1103.8 303.4 1100.0 300.0Z" fill="none" stroke="#ffc890" stroke-width="9" opacity="0.55" filter="url(#b2)"/><path d="M1103 288Q1126 236 1152 204M1105 290Q1135 244 1161 213M1107 292Q1143 252 1171 221M1110 294Q1152 260 1180 230M1112 296Q1161 267 1190 238" fill="none" stroke="#ff8830" stroke-width="1.5" opacity=".22"/></g>
<linearGradient id="gf7" gradientUnits="userSpaceOnUse" x1="1060" y1="300" x2="1083" y2="170"><stop offset="0" stop-color="#ff8020"/><stop offset=".55" stop-color="#ff9c26"/><stop offset="1" stop-color="#ffb038"/></linearGradient><clipPath id="kf7"><path d="M1060.0 300.0C1053.4 298.8 1049.4 284.1 1044.2 273.1C1039.0 262.1 1031.0 247.3 1028.6 234.2C1026.3 221.0 1026.4 204.7 1030.1 194.2C1033.8 183.7 1043.9 176.1 1051.0 171.1C1058.1 166.1 1067.6 163.1 1072.7 164.2C1077.8 165.3 1077.6 177.1 1081.5 177.8C1085.5 178.5 1090.8 167.6 1096.3 168.3C1101.8 169.1 1109.7 175.2 1114.4 182.3C1119.1 189.3 1124.7 199.7 1124.3 210.8C1123.9 221.9 1118.7 237.3 1112.0 248.9C1105.3 260.4 1092.7 271.6 1084.1 280.1C1075.4 288.6 1066.6 301.2 1060.0 300.0Z"/></clipPath><path d="M1060.0 300.0C1053.4 298.8 1049.4 284.1 1044.2 273.1C1039.0 262.1 1031.0 247.3 1028.6 234.2C1026.3 221.0 1026.4 204.7 1030.1 194.2C1033.8 183.7 1043.9 176.1 1051.0 171.1C1058.1 166.1 1067.6 163.1 1072.7 164.2C1077.8 165.3 1077.6 177.1 1081.5 177.8C1085.5 178.5 1090.8 167.6 1096.3 168.3C1101.8 169.1 1109.7 175.2 1114.4 182.3C1119.1 189.3 1124.7 199.7 1124.3 210.8C1123.9 221.9 1118.7 237.3 1112.0 248.9C1105.3 260.4 1092.7 271.6 1084.1 280.1C1075.4 288.6 1066.6 301.2 1060.0 300.0Z" fill="#a01850" opacity=".28" filter="url(#b5)" transform="translate(-0.5 3.0)"/><path d="M1060.0 300.0C1053.4 298.8 1049.4 284.1 1044.2 273.1C1039.0 262.1 1031.0 247.3 1028.6 234.2C1026.3 221.0 1026.4 204.7 1030.1 194.2C1033.8 183.7 1043.9 176.1 1051.0 171.1C1058.1 166.1 1067.6 163.1 1072.7 164.2C1077.8 165.3 1077.6 177.1 1081.5 177.8C1085.5 178.5 1090.8 167.6 1096.3 168.3C1101.8 169.1 1109.7 175.2 1114.4 182.3C1119.1 189.3 1124.7 199.7 1124.3 210.8C1123.9 221.9 1118.7 237.3 1112.0 248.9C1105.3 260.4 1092.7 271.6 1084.1 280.1C1075.4 288.6 1066.6 301.2 1060.0 300.0Z" fill="url(#gf7)"/><g clip-path="url(#kf7)"><path d="M1060.0 300.0C1053.4 298.8 1049.4 284.1 1044.2 273.1C1039.0 262.1 1031.0 247.3 1028.6 234.2C1026.3 221.0 1026.4 204.7 1030.1 194.2C1033.8 183.7 1043.9 176.1 1051.0 171.1C1058.1 166.1 1067.6 163.1 1072.7 164.2C1077.8 165.3 1077.6 177.1 1081.5 177.8C1085.5 178.5 1090.8 167.6 1096.3 168.3C1101.8 169.1 1109.7 175.2 1114.4 182.3C1119.1 189.3 1124.7 199.7 1124.3 210.8C1123.9 221.9 1118.7 237.3 1112.0 248.9C1105.3 260.4 1092.7 271.6 1084.1 280.1C1075.4 288.6 1066.6 301.2 1060.0 300.0Z" fill="none" stroke="#ffcc70" stroke-width="9" opacity="0.55" filter="url(#b2)"/><path d="M1054 286Q1044 217 1050 167M1058 286Q1059 219 1066 170M1062 287Q1074 222 1082 173M1066 288Q1089 225 1099 175M1070 288Q1104 227 1115 178" fill="none" stroke="#ff8020" stroke-width="1.5" opacity=".22"/></g>
<linearGradient id="gf8" gradientUnits="userSpaceOnUse" x1="1060" y1="330" x2="1158" y2="313"><stop offset="0" stop-color="#ff8a28"/><stop offset=".55" stop-color="#ff9a38"/><stop offset="1" stop-color="#ffa450"/></linearGradient><clipPath id="kf8"><path d="M1060.0 330.0C1059.3 326.0 1068.9 320.3 1075.6 314.7C1082.2 309.2 1091.0 301.2 1099.8 296.8C1108.7 292.4 1120.4 288.6 1128.8 288.3C1137.2 288.0 1145.0 291.9 1150.3 294.8C1155.5 297.6 1158.9 302.5 1160.3 305.5C1161.6 308.5 1158.1 310.2 1158.5 312.6C1158.9 315.0 1163.0 316.4 1162.8 319.8C1162.6 323.3 1161.0 329.1 1157.1 333.4C1153.1 337.7 1147.0 343.3 1138.9 345.7C1130.9 348.0 1118.6 348.7 1108.8 347.6C1098.9 346.4 1088.0 341.9 1079.9 339.0C1071.7 336.1 1060.7 334.0 1060.0 330.0Z"/></clipPath><path d="M1060.0 330.0C1059.3 326.0 1068.9 320.3 1075.6 314.7C1082.2 309.2 1091.0 301.2 1099.8 296.8C1108.7 292.4 1120.4 288.6 1128.8 288.3C1137.2 288.0 1145.0 291.9 1150.3 294.8C1155.5 297.6 1158.9 302.5 1160.3 305.5C1161.6 308.5 1158.1 310.2 1158.5 312.6C1158.9 315.0 1163.0 316.4 1162.8 319.8C1162.6 323.3 1161.0 329.1 1157.1 333.4C1153.1 337.7 1147.0 343.3 1138.9 345.7C1130.9 348.0 1118.6 348.7 1108.8 347.6C1098.9 346.4 1088.0 341.9 1079.9 339.0C1071.7 336.1 1060.7 334.0 1060.0 330.0Z" fill="#a01850" opacity=".28" filter="url(#b5)" transform="translate(-3.0 0.5)"/><path d="M1060.0 330.0C1059.3 326.0 1068.9 320.3 1075.6 314.7C1082.2 309.2 1091.0 301.2 1099.8 296.8C1108.7 292.4 1120.4 288.6 1128.8 288.3C1137.2 288.0 1145.0 291.9 1150.3 294.8C1155.5 297.6 1158.9 302.5 1160.3 305.5C1161.6 308.5 1158.1 310.2 1158.5 312.6C1158.9 315.0 1163.0 316.4 1162.8 319.8C1162.6 323.3 1161.0 329.1 1157.1 333.4C1153.1 337.7 1147.0 343.3 1138.9 345.7C1130.9 348.0 1118.6 348.7 1108.8 347.6C1098.9 346.4 1088.0 341.9 1079.9 339.0C1071.7 336.1 1060.7 334.0 1060.0 330.0Z" fill="url(#gf8)"/><g clip-path="url(#kf8)"><path d="M1060.0 330.0C1059.3 326.0 1068.9 320.3 1075.6 314.7C1082.2 309.2 1091.0 301.2 1099.8 296.8C1108.7 292.4 1120.4 288.6 1128.8 288.3C1137.2 288.0 1145.0 291.9 1150.3 294.8C1155.5 297.6 1158.9 302.5 1160.3 305.5C1161.6 308.5 1158.1 310.2 1158.5 312.6C1158.9 315.0 1163.0 316.4 1162.8 319.8C1162.6 323.3 1161.0 329.1 1157.1 333.4C1153.1 337.7 1147.0 343.3 1138.9 345.7C1130.9 348.0 1118.6 348.7 1108.8 347.6C1098.9 346.4 1088.0 341.9 1079.9 339.0C1071.7 336.1 1060.7 334.0 1060.0 330.0Z" fill="none" stroke="#ffc890" stroke-width="9" opacity="0.55" filter="url(#b2)"/><path d="M1069 323Q1116 301 1153 293M1069 326Q1117 310 1155 303M1070 328Q1119 320 1157 313M1070 331Q1121 329 1158 323M1071 333Q1122 338 1160 333" fill="none" stroke="#ff8a28" stroke-width="1.5" opacity=".22"/></g>
<linearGradient id="gf9" gradientUnits="userSpaceOnUse" x1="1072" y1="295" x2="1133" y2="247"><stop offset="0" stop-color="#ff8030"/><stop offset=".55" stop-color="#ff9840"/><stop offset="1" stop-color="#ffa458"/></linearGradient><clipPath id="kf9"><path d="M1072.0 295.0C1069.3 291.5 1073.2 283.2 1074.9 276.0C1076.7 268.7 1078.7 258.6 1082.7 251.6C1086.7 244.7 1093.0 237.5 1098.9 234.4C1104.8 231.3 1112.5 232.4 1117.8 233.3C1123.2 234.2 1128.3 237.6 1130.9 239.9C1133.5 242.1 1131.9 244.9 1133.5 247.0C1135.1 249.0 1138.8 248.9 1140.5 252.2C1142.2 255.4 1144.2 261.2 1143.7 266.4C1143.2 271.6 1141.8 278.8 1137.3 283.6C1132.8 288.4 1124.3 292.9 1116.7 295.1C1109.0 297.3 1098.6 296.8 1091.2 296.8C1083.7 296.7 1074.7 298.5 1072.0 295.0Z"/></clipPath><path d="M1072.0 295.0C1069.3 291.5 1073.2 283.2 1074.9 276.0C1076.7 268.7 1078.7 258.6 1082.7 251.6C1086.7 244.7 1093.0 237.5 1098.9 234.4C1104.8 231.3 1112.5 232.4 1117.8 233.3C1123.2 234.2 1128.3 237.6 1130.9 239.9C1133.5 242.1 1131.9 244.9 1133.5 247.0C1135.1 249.0 1138.8 248.9 1140.5 252.2C1142.2 255.4 1144.2 261.2 1143.7 266.4C1143.2 271.6 1141.8 278.8 1137.3 283.6C1132.8 288.4 1124.3 292.9 1116.7 295.1C1109.0 297.3 1098.6 296.8 1091.2 296.8C1083.7 296.7 1074.7 298.5 1072.0 295.0Z" fill="#a01850" opacity=".28" filter="url(#b5)" transform="translate(-2.4 1.8)"/><path d="M1072.0 295.0C1069.3 291.5 1073.2 283.2 1074.9 276.0C1076.7 268.7 1078.7 258.6 1082.7 251.6C1086.7 244.7 1093.0 237.5 1098.9 234.4C1104.8 231.3 1112.5 232.4 1117.8 233.3C1123.2 234.2 1128.3 237.6 1130.9 239.9C1133.5 242.1 1131.9 244.9 1133.5 247.0C1135.1 249.0 1138.8 248.9 1140.5 252.2C1142.2 255.4 1144.2 261.2 1143.7 266.4C1143.2 271.6 1141.8 278.8 1137.3 283.6C1132.8 288.4 1124.3 292.9 1116.7 295.1C1109.0 297.3 1098.6 296.8 1091.2 296.8C1083.7 296.7 1074.7 298.5 1072.0 295.0Z" fill="url(#gf9)"/><g clip-path="url(#kf9)"><path d="M1072.0 295.0C1069.3 291.5 1073.2 283.2 1074.9 276.0C1076.7 268.7 1078.7 258.6 1082.7 251.6C1086.7 244.7 1093.0 237.5 1098.9 234.4C1104.8 231.3 1112.5 232.4 1117.8 233.3C1123.2 234.2 1128.3 237.6 1130.9 239.9C1133.5 242.1 1131.9 244.9 1133.5 247.0C1135.1 249.0 1138.8 248.9 1140.5 252.2C1142.2 255.4 1144.2 261.2 1143.7 266.4C1143.2 271.6 1141.8 278.8 1137.3 283.6C1132.8 288.4 1124.3 292.9 1116.7 295.1C1109.0 297.3 1098.6 296.8 1091.2 296.8C1083.7 296.7 1074.7 298.5 1072.0 295.0Z" fill="none" stroke="#ffc890" stroke-width="9" opacity="0.55" filter="url(#b2)"/><path d="M1075 286Q1097 251 1119 231M1076 288Q1103 258 1126 239M1078 290Q1109 266 1132 248M1080 292Q1115 274 1139 256M1081 294Q1121 282 1146 265" fill="none" stroke="#ff8030" stroke-width="1.5" opacity=".22"/></g>
<path d="M910.0 179.0C928.5 179.3 936.5 181.2 951.0 186.0C965.5 190.8 982.2 198.2 997.0 208.0C1011.8 217.8 1027.8 231.3 1040.0 245.0C1052.2 258.7 1062.0 275.0 1070.0 290.0C1078.0 305.0 1083.0 322.0 1088.0 335.0C1093.0 348.0 1094.7 359.5 1100.0 368.0C1105.3 376.5 1113.8 380.3 1120.0 386.0C1126.2 391.7 1133.5 395.5 1137.0 402.0C1140.5 408.5 1141.5 417.5 1141.0 425.0C1140.5 432.5 1137.5 441.2 1134.0 447.0C1130.5 452.8 1121.0 455.8 1120.0 460.0C1119.0 464.2 1123.8 467.8 1128.0 472.0C1132.2 476.2 1140.5 480.7 1145.0 485.0C1149.5 489.3 1154.2 493.5 1155.0 498.0C1155.8 502.5 1151.7 507.8 1150.0 512.0C1148.3 516.2 1143.7 518.8 1145.0 523.0C1146.3 527.2 1155.2 532.5 1158.0 537.0C1160.8 541.5 1162.3 545.3 1162.0 550.0C1161.7 554.7 1158.5 560.0 1156.0 565.0C1153.5 570.0 1148.0 574.5 1147.0 580.0C1146.0 585.5 1148.5 592.3 1150.0 598.0C1151.5 603.7 1156.0 608.0 1156.0 614.0C1156.0 620.0 1153.3 628.0 1150.0 634.0C1146.7 640.0 1143.3 645.3 1136.0 650.0C1128.7 654.7 1120.0 659.3 1106.0 662.0C1092.0 664.7 1066.5 663.7 1052.0 666.0C1037.5 668.3 1027.7 671.2 1019.0 676.0C1010.3 680.8 1005.7 687.7 1000.0 695.0C994.3 702.3 988.3 707.5 985.0 720.0C981.7 732.5 1022.5 761.7 980.0 770.0C937.5 778.3 772.5 782.8 730.0 770.0C687.5 757.2 727.3 711.3 725.0 693.0C722.7 674.7 720.2 671.3 716.0 660.0C711.8 648.7 707.3 636.3 700.0 625.0C692.7 613.7 681.7 603.5 672.0 592.0C662.3 580.5 651.0 570.5 642.0 556.0C633.0 541.5 622.0 526.0 618.0 505.0C614.0 484.0 611.8 459.2 618.0 430.0C624.2 400.8 641.3 358.0 655.0 330.0C668.7 302.0 685.8 279.8 700.0 262.0C714.2 244.2 727.0 233.2 740.0 223.0C753.0 212.8 761.3 207.5 778.0 201.0C794.7 194.5 818.0 187.7 840.0 184.0C862.0 180.3 891.5 178.7 910.0 179.0Z" fill="#08080d"/>
<g clip-path="url(#headclip)">
<ellipse cx="1045" cy="450" rx="120" ry="230" fill="url(#facel)" transform="rotate(-8 1045 450)"/>
<ellipse cx="1010" cy="300" rx="80" ry="50" fill="url(#hl)" transform="rotate(25 1010 300)"/>
<ellipse cx="958" cy="296" rx="34" ry="16" fill="url(#hl2)" opacity=".55" transform="rotate(-10 958 296)"/>
<ellipse cx="986" cy="342" rx="40" ry="20" fill="url(#hl2)" opacity="1"/><ellipse cx="978" cy="338" rx="16" ry="8" fill="#b8bac6" opacity=".5" filter="url(#b2)"/>
<ellipse cx="1070" cy="352" rx="16" ry="40" fill="url(#hl2)" opacity=".5" transform="rotate(-25 1070 352)"/>
<ellipse cx="1120" cy="412" rx="18" ry="16" fill="url(#hl2)" opacity=".7"/>
<ellipse cx="1040" cy="470" rx="40" ry="30" fill="url(#hl2)" opacity=".4"/>
<ellipse cx="1100" cy="600" rx="60" ry="40" fill="url(#hl)" opacity=".9"/>
<ellipse cx="1030" cy="590" rx="70" ry="50" fill="url(#hl)" opacity=".6"/>
<rect x="600" y="170" width="600" height="280" fill="url(#headtop)"/>
<path d="M1000 215Q1050 255 1075 300Q1090 335 1097 362" fill="none" stroke="#b020b0" stroke-width="16" opacity=".55" filter="url(#b5)"/>
<ellipse cx="985" cy="372" rx="46" ry="11" fill="#08080c" opacity=".8" filter="url(#b2)" transform="rotate(-3 985 372)"/>
<path d="M944 366 Q985 380 1024 363" stroke="#1a0c10" stroke-width="4" fill="none" filter="url(#b1)"/>
<ellipse cx="978" cy="428" rx="76" ry="56" fill="url(#blush)" transform="rotate(18 978 428)"/>
<ellipse cx="1104" cy="432" rx="15" ry="9" fill="#020204" transform="rotate(-25 1104 432)" filter="url(#b2)"/>
<path d="M1076 436Q1080 456 1098 458" fill="none" stroke="#050508" stroke-width="5" opacity=".45" filter="url(#b2)"/>
<path d="M1070 525Q1096 500 1120 479Q1136 476 1150 482Q1160 498 1150 522Q1160 538 1161 550Q1156 566 1139 569Q1108 560 1088 545Q1078 536 1070 525Z" fill="#0b0b0f" filter="url(#b1)"/>
<path d="M1108 521Q1120 511 1136 514L1138 524Q1122 520 1108 521Z" fill="#efece8"/>
<path d="M1103 494 L1124 478 L1128 488 Q1116 490 1103 494Z" fill="#ff20e8" filter="url(#b1)"/>
<ellipse cx="1138" cy="492" rx="9" ry="7" fill="#55586a" opacity=".7" filter="url(#b2)"/>
<ellipse cx="1126" cy="402" rx="7" ry="15" fill="#10a890" opacity=".8" filter="url(#b2)" transform="rotate(-48 1126 402)"/>
<path d="M700 505 Q740 545 800 570 Q900 605 1000 618" stroke="#c80a80" stroke-width="8" fill="none" opacity=".7" filter="url(#b5)"/>
<ellipse cx="800" cy="420" rx="150" ry="190" fill="#050508" opacity=".55" filter="url(#b16)"/>
<path d="M735 700Q760 670 800 660" stroke="#ff9a20" stroke-width="26" fill="none" opacity=".7" filter="url(#b10)"/>
<path d="M722 640Q728 680 728 700" stroke="#b85010" stroke-width="10" fill="none" opacity=".7" filter="url(#b5)"/>
<path d="M975 735Q1000 690 1040 672Q1100 668 1150 640" stroke="#ff9a20" stroke-width="16" fill="none" opacity=".85" filter="url(#b10)"/>
</g>
<circle cx="931" cy="311" r="3.2" fill="#f01010"/><circle cx="951" cy="309.5" r="3.2" fill="#f01010"/>
<circle cx="1068.5" cy="404.5" r="4.5" fill="#1848f0"/>
<circle cx="1077.5" cy="490.5" r="3" fill="#000"/>
<path d="M631.0 186.0C637.3 183.2 646.3 179.0 657.0 178.0C667.7 177.0 684.8 176.5 695.0 180.0C705.2 183.5 712.8 192.0 718.0 199.0C723.2 206.0 721.0 219.5 726.0 222.0C731.0 224.5 739.2 214.3 748.0 214.0C756.8 213.7 769.5 214.8 779.0 220.0C788.5 225.2 798.7 235.8 805.0 245.0C811.3 254.2 816.0 264.3 817.0 275.0C818.0 285.7 810.7 299.5 811.0 309.0C811.3 318.5 818.5 323.2 819.0 332.0C819.5 340.8 812.2 353.2 814.0 362.0C815.8 370.8 827.3 376.0 830.0 385.0C832.7 394.0 832.8 405.8 830.0 416.0C827.2 426.2 818.3 436.5 813.0 446.0C807.7 455.5 804.3 467.0 798.0 473.0C791.7 479.0 783.3 479.0 775.0 482.0C766.7 485.0 758.8 489.2 748.0 491.0C737.2 492.8 718.8 489.8 710.0 493.0C701.2 496.2 702.5 506.5 695.0 510.0C687.5 513.5 675.0 515.2 665.0 514.0C655.0 512.8 642.7 507.0 635.0 503.0C627.3 499.0 626.7 491.0 619.0 490.0C611.3 489.0 598.5 497.3 589.0 497.0C579.5 496.7 569.0 492.3 562.0 488.0C555.0 483.7 552.7 471.7 547.0 471.0C541.3 470.3 535.0 483.7 528.0 484.0C521.0 484.3 512.5 480.0 505.0 473.0C497.5 466.0 488.0 451.5 483.0 442.0C478.0 432.5 475.0 423.5 475.0 416.0C475.0 408.5 482.3 404.0 483.0 397.0C483.7 390.0 477.8 382.3 479.0 374.0C480.2 365.7 489.3 355.8 490.0 347.0C490.7 338.2 483.5 330.5 483.0 321.0C482.5 311.5 482.7 297.7 487.0 290.0C491.3 282.3 503.3 280.7 509.0 275.0C514.7 269.3 519.0 263.0 521.0 256.0C523.0 249.0 517.3 240.0 521.0 233.0C524.7 226.0 533.0 217.5 543.0 214.0C553.0 210.5 572.7 210.3 581.0 212.0C589.3 213.7 588.5 223.3 593.0 224.0C597.5 224.7 603.7 220.8 608.0 216.0C612.3 211.2 615.2 200.0 619.0 195.0C622.8 190.0 624.7 188.8 631.0 186.0Z" fill="url(#lfbase)"/>
<clipPath id="lfclip"><path d="M631.0 186.0C637.3 183.2 646.3 179.0 657.0 178.0C667.7 177.0 684.8 176.5 695.0 180.0C705.2 183.5 712.8 192.0 718.0 199.0C723.2 206.0 721.0 219.5 726.0 222.0C731.0 224.5 739.2 214.3 748.0 214.0C756.8 213.7 769.5 214.8 779.0 220.0C788.5 225.2 798.7 235.8 805.0 245.0C811.3 254.2 816.0 264.3 817.0 275.0C818.0 285.7 810.7 299.5 811.0 309.0C811.3 318.5 818.5 323.2 819.0 332.0C819.5 340.8 812.2 353.2 814.0 362.0C815.8 370.8 827.3 376.0 830.0 385.0C832.7 394.0 832.8 405.8 830.0 416.0C827.2 426.2 818.3 436.5 813.0 446.0C807.7 455.5 804.3 467.0 798.0 473.0C791.7 479.0 783.3 479.0 775.0 482.0C766.7 485.0 758.8 489.2 748.0 491.0C737.2 492.8 718.8 489.8 710.0 493.0C701.2 496.2 702.5 506.5 695.0 510.0C687.5 513.5 675.0 515.2 665.0 514.0C655.0 512.8 642.7 507.0 635.0 503.0C627.3 499.0 626.7 491.0 619.0 490.0C611.3 489.0 598.5 497.3 589.0 497.0C579.5 496.7 569.0 492.3 562.0 488.0C555.0 483.7 552.7 471.7 547.0 471.0C541.3 470.3 535.0 483.7 528.0 484.0C521.0 484.3 512.5 480.0 505.0 473.0C497.5 466.0 488.0 451.5 483.0 442.0C478.0 432.5 475.0 423.5 475.0 416.0C475.0 408.5 482.3 404.0 483.0 397.0C483.7 390.0 477.8 382.3 479.0 374.0C480.2 365.7 489.3 355.8 490.0 347.0C490.7 338.2 483.5 330.5 483.0 321.0C482.5 311.5 482.7 297.7 487.0 290.0C491.3 282.3 503.3 280.7 509.0 275.0C514.7 269.3 519.0 263.0 521.0 256.0C523.0 249.0 517.3 240.0 521.0 233.0C524.7 226.0 533.0 217.5 543.0 214.0C553.0 210.5 572.7 210.3 581.0 212.0C589.3 213.7 588.5 223.3 593.0 224.0C597.5 224.7 603.7 220.8 608.0 216.0C612.3 211.2 615.2 200.0 619.0 195.0C622.8 190.0 624.7 188.8 631.0 186.0Z"/></clipPath>
<g clip-path="url(#lfclip)">
<linearGradient id="gf10" gradientUnits="userSpaceOnUse" x1="760" y1="385" x2="824" y2="462"><stop offset="0" stop-color="#ff3c9c"/><stop offset=".55" stop-color="#ff5a98"/><stop offset="1" stop-color="#ff9a3c"/></linearGradient><clipPath id="kf10"><path d="M760.0 385.0C764.8 380.9 776.2 385.1 786.1 386.6C795.9 388.1 809.8 389.5 819.2 394.0C828.6 398.6 838.4 406.2 842.5 413.7C846.5 421.2 844.9 431.7 843.5 439.0C842.1 446.2 837.3 453.5 834.1 457.3C830.9 461.0 827.1 459.2 824.3 461.6C821.4 464.0 821.5 469.0 817.0 471.6C812.5 474.3 804.5 477.7 797.3 477.7C790.2 477.6 780.4 476.7 774.0 471.2C767.5 465.7 761.4 454.9 758.6 444.9C755.8 434.9 756.8 420.9 757.1 411.0C757.3 401.0 755.2 389.1 760.0 385.0Z"/></clipPath><path d="M760.0 385.0C764.8 380.9 776.2 385.1 786.1 386.6C795.9 388.1 809.8 389.5 819.2 394.0C828.6 398.6 838.4 406.2 842.5 413.7C846.5 421.2 844.9 431.7 843.5 439.0C842.1 446.2 837.3 453.5 834.1 457.3C830.9 461.0 827.1 459.2 824.3 461.6C821.4 464.0 821.5 469.0 817.0 471.6C812.5 474.3 804.5 477.7 797.3 477.7C790.2 477.6 780.4 476.7 774.0 471.2C767.5 465.7 761.4 454.9 758.6 444.9C755.8 434.9 756.8 420.9 757.1 411.0C757.3 401.0 755.2 389.1 760.0 385.0Z" fill="#a01850" opacity=".28" filter="url(#b5)" transform="translate(-1.9 -2.3)"/><path d="M760.0 385.0C764.8 380.9 776.2 385.1 786.1 386.6C795.9 388.1 809.8 389.5 819.2 394.0C828.6 398.6 838.4 406.2 842.5 413.7C846.5 421.2 844.9 431.7 843.5 439.0C842.1 446.2 837.3 453.5 834.1 457.3C830.9 461.0 827.1 459.2 824.3 461.6C821.4 464.0 821.5 469.0 817.0 471.6C812.5 474.3 804.5 477.7 797.3 477.7C790.2 477.6 780.4 476.7 774.0 471.2C767.5 465.7 761.4 454.9 758.6 444.9C755.8 434.9 756.8 420.9 757.1 411.0C757.3 401.0 755.2 389.1 760.0 385.0Z" fill="url(#gf10)"/><g clip-path="url(#kf10)"><path d="M760.0 385.0C764.8 380.9 776.2 385.1 786.1 386.6C795.9 388.1 809.8 389.5 819.2 394.0C828.6 398.6 838.4 406.2 842.5 413.7C846.5 421.2 844.9 431.7 843.5 439.0C842.1 446.2 837.3 453.5 834.1 457.3C830.9 461.0 827.1 459.2 824.3 461.6C821.4 464.0 821.5 469.0 817.0 471.6C812.5 474.3 804.5 477.7 797.3 477.7C790.2 477.6 780.4 476.7 774.0 471.2C767.5 465.7 761.4 454.9 758.6 444.9C755.8 434.9 756.8 420.9 757.1 411.0C757.3 401.0 755.2 389.1 760.0 385.0Z" fill="none" stroke="#ffc0a0" stroke-width="9" opacity="0.55" filter="url(#b2)"/><path d="M772 388Q820 413 847 440M769 390Q809 422 835 450M766 393Q799 431 823 460M763 395Q788 440 811 470M760 398Q777 449 799 480" fill="none" stroke="#ff3c9c" stroke-width="1.5" opacity=".22"/></g>
<linearGradient id="gf11" gradientUnits="userSpaceOnUse" x1="755" y1="350" x2="837" y2="333"><stop offset="0" stop-color="#f840a8"/><stop offset=".55" stop-color="#ff58b0"/><stop offset="1" stop-color="#ff6aa0"/></linearGradient><clipPath id="kf11"><path d="M755.0 350.0C753.8 344.3 761.2 337.0 766.1 329.6C771.0 322.3 777.3 311.7 784.3 306.1C791.3 300.6 800.8 296.1 808.0 296.2C815.2 296.3 822.5 302.4 827.4 306.8C832.3 311.2 836.0 318.3 837.6 322.6C839.3 326.9 836.4 329.1 837.2 332.5C837.9 335.9 841.6 338.1 842.0 343.0C842.3 347.8 841.8 355.8 839.0 361.6C836.3 367.4 831.8 374.8 825.3 377.6C818.7 380.4 808.3 380.4 799.6 378.1C791.0 375.9 780.9 368.8 773.4 364.1C766.0 359.4 756.2 355.7 755.0 350.0Z"/></clipPath><path d="M755.0 350.0C753.8 344.3 761.2 337.0 766.1 329.6C771.0 322.3 777.3 311.7 784.3 306.1C791.3 300.6 800.8 296.1 808.0 296.2C815.2 296.3 822.5 302.4 827.4 306.8C832.3 311.2 836.0 318.3 837.6 322.6C839.3 326.9 836.4 329.1 837.2 332.5C837.9 335.9 841.6 338.1 842.0 343.0C842.3 347.8 841.8 355.8 839.0 361.6C836.3 367.4 831.8 374.8 825.3 377.6C818.7 380.4 808.3 380.4 799.6 378.1C791.0 375.9 780.9 368.8 773.4 364.1C766.0 359.4 756.2 355.7 755.0 350.0Z" fill="#a01850" opacity=".28" filter="url(#b5)" transform="translate(-2.9 0.6)"/><path d="M755.0 350.0C753.8 344.3 761.2 337.0 766.1 329.6C771.0 322.3 777.3 311.7 784.3 306.1C791.3 300.6 800.8 296.1 808.0 296.2C815.2 296.3 822.5 302.4 827.4 306.8C832.3 311.2 836.0 318.3 837.6 322.6C839.3 326.9 836.4 329.1 837.2 332.5C837.9 335.9 841.6 338.1 842.0 343.0C842.3 347.8 841.8 355.8 839.0 361.6C836.3 367.4 831.8 374.8 825.3 377.6C818.7 380.4 808.3 380.4 799.6 378.1C791.0 375.9 780.9 368.8 773.4 364.1C766.0 359.4 756.2 355.7 755.0 350.0Z" fill="url(#gf11)"/><g clip-path="url(#kf11)"><path d="M755.0 350.0C753.8 344.3 761.2 337.0 766.1 329.6C771.0 322.3 777.3 311.7 784.3 306.1C791.3 300.6 800.8 296.1 808.0 296.2C815.2 296.3 822.5 302.4 827.4 306.8C832.3 311.2 836.0 318.3 837.6 322.6C839.3 326.9 836.4 329.1 837.2 332.5C837.9 335.9 841.6 338.1 842.0 343.0C842.3 347.8 841.8 355.8 839.0 361.6C836.3 367.4 831.8 374.8 825.3 377.6C818.7 380.4 808.3 380.4 799.6 378.1C791.0 375.9 780.9 368.8 773.4 364.1C766.0 359.4 756.2 355.7 755.0 350.0Z" fill="none" stroke="#ffb8e0" stroke-width="9" opacity="0.55" filter="url(#b2)"/><path d="M762 341Q799 314 830 305M762 345Q802 327 833 319M763 348Q804 340 836 333M764 352Q807 352 839 347M765 355Q810 365 842 361" fill="none" stroke="#f840a8" stroke-width="1.5" opacity=".22"/></g>
<linearGradient id="gf12" gradientUnits="userSpaceOnUse" x1="750" y1="340" x2="811" y2="225"><stop offset="0" stop-color="#f23aa8"/><stop offset=".55" stop-color="#ff5cbc"/><stop offset="1" stop-color="#ff6cb0"/></linearGradient><clipPath id="kf12"><path d="M750.0 340.0C744.0 336.8 744.8 321.8 743.1 309.8C741.5 297.9 738.4 281.5 740.1 268.5C741.8 255.4 746.8 240.2 753.5 231.5C760.2 222.8 772.1 218.7 780.4 216.3C788.6 213.8 798.0 215.1 803.1 216.6C808.2 218.1 807.5 223.3 811.0 225.2C814.6 227.1 819.9 224.3 824.2 227.8C828.6 231.4 834.9 238.4 837.2 246.5C839.5 254.6 841.7 266.1 838.0 276.4C834.3 286.7 824.7 299.5 814.8 308.2C805.0 317.0 789.7 323.5 778.9 328.8C768.1 334.1 756.0 343.2 750.0 340.0Z"/></clipPath><path d="M750.0 340.0C744.0 336.8 744.8 321.8 743.1 309.8C741.5 297.9 738.4 281.5 740.1 268.5C741.8 255.4 746.8 240.2 753.5 231.5C760.2 222.8 772.1 218.7 780.4 216.3C788.6 213.8 798.0 215.1 803.1 216.6C808.2 218.1 807.5 223.3 811.0 225.2C814.6 227.1 819.9 224.3 824.2 227.8C828.6 231.4 834.9 238.4 837.2 246.5C839.5 254.6 841.7 266.1 838.0 276.4C834.3 286.7 824.7 299.5 814.8 308.2C805.0 317.0 789.7 323.5 778.9 328.8C768.1 334.1 756.0 343.2 750.0 340.0Z" fill="#a01850" opacity=".28" filter="url(#b5)" transform="translate(-1.4 2.6)"/><path d="M750.0 340.0C744.0 336.8 744.8 321.8 743.1 309.8C741.5 297.9 738.4 281.5 740.1 268.5C741.8 255.4 746.8 240.2 753.5 231.5C760.2 222.8 772.1 218.7 780.4 216.3C788.6 213.8 798.0 215.1 803.1 216.6C808.2 218.1 807.5 223.3 811.0 225.2C814.6 227.1 819.9 224.3 824.2 227.8C828.6 231.4 834.9 238.4 837.2 246.5C839.5 254.6 841.7 266.1 838.0 276.4C834.3 286.7 824.7 299.5 814.8 308.2C805.0 317.0 789.7 323.5 778.9 328.8C768.1 334.1 756.0 343.2 750.0 340.0Z" fill="url(#gf12)"/><g clip-path="url(#kf12)"><path d="M750.0 340.0C744.0 336.8 744.8 321.8 743.1 309.8C741.5 297.9 738.4 281.5 740.1 268.5C741.8 255.4 746.8 240.2 753.5 231.5C760.2 222.8 772.1 218.7 780.4 216.3C788.6 213.8 798.0 215.1 803.1 216.6C808.2 218.1 807.5 223.3 811.0 225.2C814.6 227.1 819.9 224.3 824.2 227.8C828.6 231.4 834.9 238.4 837.2 246.5C839.5 254.6 841.7 266.1 838.0 276.4C834.3 286.7 824.7 299.5 814.8 308.2C805.0 317.0 789.7 323.5 778.9 328.8C768.1 334.1 756.0 343.2 750.0 340.0Z" fill="none" stroke="#ffb0e4" stroke-width="9" opacity="0.55" filter="url(#b2)"/><path d="M749 325Q760 257 781 212M752 327Q773 264 795 220M756 329Q787 271 810 228M760 330Q800 278 824 235M763 332Q813 285 839 243" fill="none" stroke="#f23aa8" stroke-width="1.5" opacity=".22"/></g>
<linearGradient id="gf13" gradientUnits="userSpaceOnUse" x1="700" y1="440" x2="678" y2="521"><stop offset="0" stop-color="#ff4a90"/><stop offset=".55" stop-color="#ff6a88"/><stop offset="1" stop-color="#ff8a60"/></linearGradient><clipPath id="kf13"><path d="M700.0 440.0C706.4 441.7 710.2 451.9 715.2 459.7C720.2 467.6 727.9 478.4 730.2 487.2C732.5 496.1 732.5 506.7 728.9 513.0C725.3 519.3 715.7 522.8 708.9 525.0C702.1 527.2 693.1 527.0 688.0 526.4C682.9 525.7 682.0 522.1 678.3 521.1C674.5 520.1 670.5 522.4 665.4 520.3C660.4 518.2 652.5 514.0 648.1 508.7C643.6 503.4 638.1 495.9 638.5 488.7C638.9 481.6 643.8 472.3 650.2 465.8C656.6 459.3 668.7 453.8 677.0 449.5C685.3 445.2 693.6 438.3 700.0 440.0Z"/></clipPath><path d="M700.0 440.0C706.4 441.7 710.2 451.9 715.2 459.7C720.2 467.6 727.9 478.4 730.2 487.2C732.5 496.1 732.5 506.7 728.9 513.0C725.3 519.3 715.7 522.8 708.9 525.0C702.1 527.2 693.1 527.0 688.0 526.4C682.9 525.7 682.0 522.1 678.3 521.1C674.5 520.1 670.5 522.4 665.4 520.3C660.4 518.2 652.5 514.0 648.1 508.7C643.6 503.4 638.1 495.9 638.5 488.7C638.9 481.6 643.8 472.3 650.2 465.8C656.6 459.3 668.7 453.8 677.0 449.5C685.3 445.2 693.6 438.3 700.0 440.0Z" fill="#a01850" opacity=".28" filter="url(#b5)" transform="translate(0.8 -2.9)"/><path d="M700.0 440.0C706.4 441.7 710.2 451.9 715.2 459.7C720.2 467.6 727.9 478.4 730.2 487.2C732.5 496.1 732.5 506.7 728.9 513.0C725.3 519.3 715.7 522.8 708.9 525.0C702.1 527.2 693.1 527.0 688.0 526.4C682.9 525.7 682.0 522.1 678.3 521.1C674.5 520.1 670.5 522.4 665.4 520.3C660.4 518.2 652.5 514.0 648.1 508.7C643.6 503.4 638.1 495.9 638.5 488.7C638.9 481.6 643.8 472.3 650.2 465.8C656.6 459.3 668.7 453.8 677.0 449.5C685.3 445.2 693.6 438.3 700.0 440.0Z" fill="url(#gf13)"/><g clip-path="url(#kf13)"><path d="M700.0 440.0C706.4 441.7 710.2 451.9 715.2 459.7C720.2 467.6 727.9 478.4 730.2 487.2C732.5 496.1 732.5 506.7 728.9 513.0C725.3 519.3 715.7 522.8 708.9 525.0C702.1 527.2 693.1 527.0 688.0 526.4C682.9 525.7 682.0 522.1 678.3 521.1C674.5 520.1 670.5 522.4 665.4 520.3C660.4 518.2 652.5 514.0 648.1 508.7C643.6 503.4 638.1 495.9 638.5 488.7C638.9 481.6 643.8 472.3 650.2 465.8C656.6 459.3 668.7 453.8 677.0 449.5C685.3 445.2 693.6 438.3 700.0 440.0Z" fill="none" stroke="#ffc0b0" stroke-width="9" opacity="0.55" filter="url(#b2)"/><path d="M706 450Q716 496 710 528M702 449Q701 493 694 524M698 448Q687 489 679 520M694 447Q673 485 663 515M690 446Q658 481 647 511" fill="none" stroke="#ff4a90" stroke-width="1.5" opacity=".22"/></g>
<linearGradient id="gf14" gradientUnits="userSpaceOnUse" x1="745" y1="380" x2="653" y2="472"><stop offset="0" stop-color="#f03aa4"/><stop offset=".55" stop-color="#ff54b0"/><stop offset="1" stop-color="#ff70b8"/></linearGradient><clipPath id="kf14"><path d="M745.0 380.0C750.2 385.2 745.5 399.8 744.0 412.1C742.5 424.4 741.4 441.6 736.2 453.9C731.0 466.2 721.9 479.5 712.8 485.7C703.8 492.0 690.7 491.8 681.7 491.4C672.7 490.9 663.6 486.4 658.8 483.2C654.0 479.9 656.1 475.0 653.1 471.9C650.0 468.9 643.9 469.8 640.4 464.8C636.9 459.8 632.4 450.6 632.2 441.9C632.0 433.1 632.8 421.0 639.3 412.2C645.8 403.3 658.8 394.0 671.1 388.8C683.4 383.6 700.6 382.5 712.9 381.0C725.2 379.5 739.8 374.8 745.0 380.0Z"/></clipPath><path d="M745.0 380.0C750.2 385.2 745.5 399.8 744.0 412.1C742.5 424.4 741.4 441.6 736.2 453.9C731.0 466.2 721.9 479.5 712.8 485.7C703.8 492.0 690.7 491.8 681.7 491.4C672.7 490.9 663.6 486.4 658.8 483.2C654.0 479.9 656.1 475.0 653.1 471.9C650.0 468.9 643.9 469.8 640.4 464.8C636.9 459.8 632.4 450.6 632.2 441.9C632.0 433.1 632.8 421.0 639.3 412.2C645.8 403.3 658.8 394.0 671.1 388.8C683.4 383.6 700.6 382.5 712.9 381.0C725.2 379.5 739.8 374.8 745.0 380.0Z" fill="#a01850" opacity=".28" filter="url(#b5)" transform="translate(2.1 -2.1)"/><path d="M745.0 380.0C750.2 385.2 745.5 399.8 744.0 412.1C742.5 424.4 741.4 441.6 736.2 453.9C731.0 466.2 721.9 479.5 712.8 485.7C703.8 492.0 690.7 491.8 681.7 491.4C672.7 490.9 663.6 486.4 658.8 483.2C654.0 479.9 656.1 475.0 653.1 471.9C650.0 468.9 643.9 469.8 640.4 464.8C636.9 459.8 632.4 450.6 632.2 441.9C632.0 433.1 632.8 421.0 639.3 412.2C645.8 403.3 658.8 394.0 671.1 388.8C683.4 383.6 700.6 382.5 712.9 381.0C725.2 379.5 739.8 374.8 745.0 380.0Z" fill="url(#gf14)"/><g clip-path="url(#kf14)"><path d="M745.0 380.0C750.2 385.2 745.5 399.8 744.0 412.1C742.5 424.4 741.4 441.6 736.2 453.9C731.0 466.2 721.9 479.5 712.8 485.7C703.8 492.0 690.7 491.8 681.7 491.4C672.7 490.9 663.6 486.4 658.8 483.2C654.0 479.9 656.1 475.0 653.1 471.9C650.0 468.9 643.9 469.8 640.4 464.8C636.9 459.8 632.4 450.6 632.2 441.9C632.0 433.1 632.8 421.0 639.3 412.2C645.8 403.3 658.8 394.0 671.1 388.8C683.4 383.6 700.6 382.5 712.9 381.0C725.2 379.5 739.8 374.8 745.0 380.0Z" fill="none" stroke="#ffb0e0" stroke-width="9" opacity="0.55" filter="url(#b2)"/><path d="M742 396Q713 458 680 496M739 392Q702 447 668 483M736 389Q690 435 655 470M733 386Q678 423 642 457M729 383Q667 412 629 445" fill="none" stroke="#f03aa4" stroke-width="1.5" opacity=".22"/></g>
<linearGradient id="gf15" gradientUnits="userSpaceOnUse" x1="610" y1="330" x2="651" y2="175"><stop offset="0" stop-color="#ff8a30"/><stop offset=".55" stop-color="#ffa03c"/><stop offset="1" stop-color="#ff7a98"/></linearGradient><clipPath id="kf15"><path d="M610.0 330.0C601.5 327.7 597.7 309.3 592.0 295.3C586.2 281.4 577.2 262.4 575.3 246.2C573.5 229.9 575.0 210.2 580.8 197.9C586.6 185.7 600.3 177.8 609.9 172.6C619.6 167.5 632.2 165.3 638.7 167.1C645.3 168.8 644.3 181.8 649.3 183.2C654.4 184.5 661.9 173.3 668.9 175.2C675.8 177.0 685.7 185.2 691.1 194.4C696.5 203.5 702.9 216.8 701.3 230.2C699.8 243.6 691.7 261.6 682.0 274.7C672.2 287.9 654.9 299.8 643.0 309.0C631.0 318.2 618.5 332.3 610.0 330.0Z"/></clipPath><path d="M610.0 330.0C601.5 327.7 597.7 309.3 592.0 295.3C586.2 281.4 577.2 262.4 575.3 246.2C573.5 229.9 575.0 210.2 580.8 197.9C586.6 185.7 600.3 177.8 609.9 172.6C619.6 167.5 632.2 165.3 638.7 167.1C645.3 168.8 644.3 181.8 649.3 183.2C654.4 184.5 661.9 173.3 668.9 175.2C675.8 177.0 685.7 185.2 691.1 194.4C696.5 203.5 702.9 216.8 701.3 230.2C699.8 243.6 691.7 261.6 682.0 274.7C672.2 287.9 654.9 299.8 643.0 309.0C631.0 318.2 618.5 332.3 610.0 330.0Z" fill="#a01850" opacity=".28" filter="url(#b5)" transform="translate(-0.8 2.9)"/><path d="M610.0 330.0C601.5 327.7 597.7 309.3 592.0 295.3C586.2 281.4 577.2 262.4 575.3 246.2C573.5 229.9 575.0 210.2 580.8 197.9C586.6 185.7 600.3 177.8 609.9 172.6C619.6 167.5 632.2 165.3 638.7 167.1C645.3 168.8 644.3 181.8 649.3 183.2C654.4 184.5 661.9 173.3 668.9 175.2C675.8 177.0 685.7 185.2 691.1 194.4C696.5 203.5 702.9 216.8 701.3 230.2C699.8 243.6 691.7 261.6 682.0 274.7C672.2 287.9 654.9 299.8 643.0 309.0C631.0 318.2 618.5 332.3 610.0 330.0Z" fill="url(#gf15)"/><g clip-path="url(#kf15)"><path d="M610.0 330.0C601.5 327.7 597.7 309.3 592.0 295.3C586.2 281.4 577.2 262.4 575.3 246.2C573.5 229.9 575.0 210.2 580.8 197.9C586.6 185.7 600.3 177.8 609.9 172.6C619.6 167.5 632.2 165.3 638.7 167.1C645.3 168.8 644.3 181.8 649.3 183.2C654.4 184.5 661.9 173.3 668.9 175.2C675.8 177.0 685.7 185.2 691.1 194.4C696.5 203.5 702.9 216.8 701.3 230.2C699.8 243.6 691.7 261.6 682.0 274.7C672.2 287.9 654.9 299.8 643.0 309.0C631.0 318.2 618.5 332.3 610.0 330.0Z" fill="none" stroke="#ffd0b0" stroke-width="9" opacity="0.55" filter="url(#b2)"/><path d="M604 312Q597 227 609 167M609 313Q616 232 630 173M614 315Q635 237 651 179M619 316Q654 242 671 184M625 317Q673 248 692 190" fill="none" stroke="#ff8a30" stroke-width="1.5" opacity=".22"/></g>
<linearGradient id="gf16" gradientUnits="userSpaceOnUse" x1="605" y1="320" x2="522" y2="237"><stop offset="0" stop-color="#ffae38"/><stop offset=".55" stop-color="#ffa038"/><stop offset="1" stop-color="#ff8a70"/></linearGradient><clipPath id="kf16"><path d="M605.0 320.0C600.0 325.0 586.5 321.0 575.0 319.9C563.6 318.9 547.5 318.2 536.2 313.7C524.9 309.1 512.7 301.0 507.1 292.7C501.5 284.4 502.0 272.2 502.7 263.8C503.3 255.4 507.8 246.7 510.9 242.2C514.1 237.7 518.6 239.5 521.6 236.6C524.5 233.6 523.8 227.9 528.6 224.6C533.3 221.2 542.0 216.7 550.2 216.3C558.4 215.9 569.6 216.3 577.7 222.1C585.8 227.9 594.1 239.9 598.7 251.2C603.2 262.5 603.9 278.6 604.9 290.0C606.0 301.5 610.0 315.0 605.0 320.0Z"/></clipPath><path d="M605.0 320.0C600.0 325.0 586.5 321.0 575.0 319.9C563.6 318.9 547.5 318.2 536.2 313.7C524.9 309.1 512.7 301.0 507.1 292.7C501.5 284.4 502.0 272.2 502.7 263.8C503.3 255.4 507.8 246.7 510.9 242.2C514.1 237.7 518.6 239.5 521.6 236.6C524.5 233.6 523.8 227.9 528.6 224.6C533.3 221.2 542.0 216.7 550.2 216.3C558.4 215.9 569.6 216.3 577.7 222.1C585.8 227.9 594.1 239.9 598.7 251.2C603.2 262.5 603.9 278.6 604.9 290.0C606.0 301.5 610.0 315.0 605.0 320.0Z" fill="#a01850" opacity=".28" filter="url(#b5)" transform="translate(2.1 2.1)"/><path d="M605.0 320.0C600.0 325.0 586.5 321.0 575.0 319.9C563.6 318.9 547.5 318.2 536.2 313.7C524.9 309.1 512.7 301.0 507.1 292.7C501.5 284.4 502.0 272.2 502.7 263.8C503.3 255.4 507.8 246.7 510.9 242.2C514.1 237.7 518.6 239.5 521.6 236.6C524.5 233.6 523.8 227.9 528.6 224.6C533.3 221.2 542.0 216.7 550.2 216.3C558.4 215.9 569.6 216.3 577.7 222.1C585.8 227.9 594.1 239.9 598.7 251.2C603.2 262.5 603.9 278.6 604.9 290.0C606.0 301.5 610.0 315.0 605.0 320.0Z" fill="url(#gf16)"/><g clip-path="url(#kf16)"><path d="M605.0 320.0C600.0 325.0 586.5 321.0 575.0 319.9C563.6 318.9 547.5 318.2 536.2 313.7C524.9 309.1 512.7 301.0 507.1 292.7C501.5 284.4 502.0 272.2 502.7 263.8C503.3 255.4 507.8 246.7 510.9 242.2C514.1 237.7 518.6 239.5 521.6 236.6C524.5 233.6 523.8 227.9 528.6 224.6C533.3 221.2 542.0 216.7 550.2 216.3C558.4 215.9 569.6 216.3 577.7 222.1C585.8 227.9 594.1 239.9 598.7 251.2C603.2 262.5 603.9 278.6 604.9 290.0C606.0 301.5 610.0 315.0 605.0 320.0Z" fill="none" stroke="#ffd0a0" stroke-width="9" opacity="0.55" filter="url(#b2)"/><path d="M591 318Q533 292 499 263M594 315Q544 281 511 250M597 312Q555 270 523 238M600 309Q566 259 535 226M603 306Q577 248 548 214" fill="none" stroke="#ffae38" stroke-width="1.5" opacity=".22"/></g>
<linearGradient id="gf17" gradientUnits="userSpaceOnUse" x1="600" y1="325" x2="478" y2="329"><stop offset="0" stop-color="#ffc040"/><stop offset=".55" stop-color="#ffa040"/><stop offset="1" stop-color="#ff8878"/></linearGradient><clipPath id="kf17"><path d="M600.0 325.0C600.2 330.6 587.6 336.3 578.6 342.5C569.7 348.6 557.8 357.7 546.4 361.9C534.9 366.1 520.1 368.9 509.9 367.7C499.7 366.5 490.9 359.7 485.1 354.9C479.2 350.0 475.9 342.8 474.7 338.5C473.6 334.2 478.2 332.5 478.1 329.3C478.0 326.0 473.2 323.3 474.0 318.8C474.9 314.2 477.7 306.7 483.2 301.7C488.7 296.7 497.1 290.3 507.2 288.7C517.3 287.1 532.2 288.6 543.9 292.0C555.6 295.4 568.1 303.6 577.5 309.1C586.8 314.6 599.8 319.4 600.0 325.0Z"/></clipPath><path d="M600.0 325.0C600.2 330.6 587.6 336.3 578.6 342.5C569.7 348.6 557.8 357.7 546.4 361.9C534.9 366.1 520.1 368.9 509.9 367.7C499.7 366.5 490.9 359.7 485.1 354.9C479.2 350.0 475.9 342.8 474.7 338.5C473.6 334.2 478.2 332.5 478.1 329.3C478.0 326.0 473.2 323.3 474.0 318.8C474.9 314.2 477.7 306.7 483.2 301.7C488.7 296.7 497.1 290.3 507.2 288.7C517.3 287.1 532.2 288.6 543.9 292.0C555.6 295.4 568.1 303.6 577.5 309.1C586.8 314.6 599.8 319.4 600.0 325.0Z" fill="#a01850" opacity=".28" filter="url(#b5)" transform="translate(3.0 -0.1)"/><path d="M600.0 325.0C600.2 330.6 587.6 336.3 578.6 342.5C569.7 348.6 557.8 357.7 546.4 361.9C534.9 366.1 520.1 368.9 509.9 367.7C499.7 366.5 490.9 359.7 485.1 354.9C479.2 350.0 475.9 342.8 474.7 338.5C473.6 334.2 478.2 332.5 478.1 329.3C478.0 326.0 473.2 323.3 474.0 318.8C474.9 314.2 477.7 306.7 483.2 301.7C488.7 296.7 497.1 290.3 507.2 288.7C517.3 287.1 532.2 288.6 543.9 292.0C555.6 295.4 568.1 303.6 577.5 309.1C586.8 314.6 599.8 319.4 600.0 325.0Z" fill="url(#gf17)"/><g clip-path="url(#kf17)"><path d="M600.0 325.0C600.2 330.6 587.6 336.3 578.6 342.5C569.7 348.6 557.8 357.7 546.4 361.9C534.9 366.1 520.1 368.9 509.9 367.7C499.7 366.5 490.9 359.7 485.1 354.9C479.2 350.0 475.9 342.8 474.7 338.5C473.6 334.2 478.2 332.5 478.1 329.3C478.0 326.0 473.2 323.3 474.0 318.8C474.9 314.2 477.7 306.7 483.2 301.7C488.7 296.7 497.1 290.3 507.2 288.7C517.3 287.1 532.2 288.6 543.9 292.0C555.6 295.4 568.1 303.6 577.5 309.1C586.8 314.6 599.8 319.4 600.0 325.0Z" fill="none" stroke="#ffd8a8" stroke-width="9" opacity="0.55" filter="url(#b2)"/><path d="M588 332Q528 353 481 357M588 329Q527 340 481 343M588 325Q527 328 481 329M588 322Q526 315 480 316M588 319Q526 302 480 302" fill="none" stroke="#ffc040" stroke-width="1.5" opacity=".22"/></g>
<linearGradient id="gf18" gradientUnits="userSpaceOnUse" x1="610" y1="345" x2="487" y2="402"><stop offset="0" stop-color="#ff7a70"/><stop offset=".55" stop-color="#ff5a98"/><stop offset="1" stop-color="#ff6aa0"/></linearGradient><clipPath id="kf18"><path d="M610.0 345.0C612.6 350.6 602.1 361.9 595.6 372.1C589.1 382.2 580.8 396.6 570.9 405.9C560.9 415.2 547.0 424.4 536.0 427.7C525.0 431.0 513.1 427.9 505.0 425.5C496.9 423.1 490.3 417.2 487.3 413.3C484.3 409.5 488.3 405.8 486.7 402.5C485.2 399.2 479.2 398.6 478.1 393.5C477.0 388.5 476.6 379.7 480.1 372.2C483.6 364.7 489.4 354.6 499.1 348.5C508.8 342.5 524.7 337.5 538.2 335.8C551.7 334.2 568.0 337.1 580.0 338.6C592.0 340.1 607.4 339.4 610.0 345.0Z"/></clipPath><path d="M610.0 345.0C612.6 350.6 602.1 361.9 595.6 372.1C589.1 382.2 580.8 396.6 570.9 405.9C560.9 415.2 547.0 424.4 536.0 427.7C525.0 431.0 513.1 427.9 505.0 425.5C496.9 423.1 490.3 417.2 487.3 413.3C484.3 409.5 488.3 405.8 486.7 402.5C485.2 399.2 479.2 398.6 478.1 393.5C477.0 388.5 476.6 379.7 480.1 372.2C483.6 364.7 489.4 354.6 499.1 348.5C508.8 342.5 524.7 337.5 538.2 335.8C551.7 334.2 568.0 337.1 580.0 338.6C592.0 340.1 607.4 339.4 610.0 345.0Z" fill="#a01850" opacity=".28" filter="url(#b5)" transform="translate(2.7 -1.3)"/><path d="M610.0 345.0C612.6 350.6 602.1 361.9 595.6 372.1C589.1 382.2 580.8 396.6 570.9 405.9C560.9 415.2 547.0 424.4 536.0 427.7C525.0 431.0 513.1 427.9 505.0 425.5C496.9 423.1 490.3 417.2 487.3 413.3C484.3 409.5 488.3 405.8 486.7 402.5C485.2 399.2 479.2 398.6 478.1 393.5C477.0 388.5 476.6 379.7 480.1 372.2C483.6 364.7 489.4 354.6 499.1 348.5C508.8 342.5 524.7 337.5 538.2 335.8C551.7 334.2 568.0 337.1 580.0 338.6C592.0 340.1 607.4 339.4 610.0 345.0Z" fill="url(#gf18)"/><g clip-path="url(#kf18)"><path d="M610.0 345.0C612.6 350.6 602.1 361.9 595.6 372.1C589.1 382.2 580.8 396.6 570.9 405.9C560.9 415.2 547.0 424.4 536.0 427.7C525.0 431.0 513.1 427.9 505.0 425.5C496.9 423.1 490.3 417.2 487.3 413.3C484.3 409.5 488.3 405.8 486.7 402.5C485.2 399.2 479.2 398.6 478.1 393.5C477.0 388.5 476.6 379.7 480.1 372.2C483.6 364.7 489.4 354.6 499.1 348.5C508.8 342.5 524.7 337.5 538.2 335.8C551.7 334.2 568.0 337.1 580.0 338.6C592.0 340.1 607.4 339.4 610.0 345.0Z" fill="none" stroke="#ffb0c8" stroke-width="9" opacity="0.55" filter="url(#b2)"/><path d="M601 358Q548 405 502 429M599 354Q542 392 496 415M598 351Q536 379 489 401M596 347Q530 367 483 388M594 344Q524 354 476 374" fill="none" stroke="#ff7a70" stroke-width="1.5" opacity=".22"/></g>
<linearGradient id="gf19" gradientUnits="userSpaceOnUse" x1="615" y1="370" x2="523" y2="488"><stop offset="0" stop-color="#ff7060"/><stop offset=".55" stop-color="#ff8a48"/><stop offset="1" stop-color="#ff9a38"/></linearGradient><clipPath id="kf19"><path d="M615.0 370.0C620.5 374.3 616.1 390.9 615.0 404.3C613.9 417.7 613.2 436.2 608.2 450.4C603.3 464.6 594.3 480.7 585.1 489.4C575.9 498.1 562.3 500.8 553.0 502.4C543.6 504.0 534.0 501.2 529.0 498.8C523.9 496.5 525.9 490.8 522.7 488.2C519.4 485.6 513.1 488.0 509.3 483.5C505.5 478.9 500.5 470.3 500.0 461.0C499.6 451.8 500.0 438.8 506.4 427.9C512.8 417.1 526.1 404.3 538.6 396.0C551.2 387.7 569.0 382.6 581.7 378.3C594.5 373.9 609.5 365.7 615.0 370.0Z"/></clipPath><path d="M615.0 370.0C620.5 374.3 616.1 390.9 615.0 404.3C613.9 417.7 613.2 436.2 608.2 450.4C603.3 464.6 594.3 480.7 585.1 489.4C575.9 498.1 562.3 500.8 553.0 502.4C543.6 504.0 534.0 501.2 529.0 498.8C523.9 496.5 525.9 490.8 522.7 488.2C519.4 485.6 513.1 488.0 509.3 483.5C505.5 478.9 500.5 470.3 500.0 461.0C499.6 451.8 500.0 438.8 506.4 427.9C512.8 417.1 526.1 404.3 538.6 396.0C551.2 387.7 569.0 382.6 581.7 378.3C594.5 373.9 609.5 365.7 615.0 370.0Z" fill="#a01850" opacity=".28" filter="url(#b5)" transform="translate(1.8 -2.4)"/><path d="M615.0 370.0C620.5 374.3 616.1 390.9 615.0 404.3C613.9 417.7 613.2 436.2 608.2 450.4C603.3 464.6 594.3 480.7 585.1 489.4C575.9 498.1 562.3 500.8 553.0 502.4C543.6 504.0 534.0 501.2 529.0 498.8C523.9 496.5 525.9 490.8 522.7 488.2C519.4 485.6 513.1 488.0 509.3 483.5C505.5 478.9 500.5 470.3 500.0 461.0C499.6 451.8 500.0 438.8 506.4 427.9C512.8 417.1 526.1 404.3 538.6 396.0C551.2 387.7 569.0 382.6 581.7 378.3C594.5 373.9 609.5 365.7 615.0 370.0Z" fill="url(#gf19)"/><g clip-path="url(#kf19)"><path d="M615.0 370.0C620.5 374.3 616.1 390.9 615.0 404.3C613.9 417.7 613.2 436.2 608.2 450.4C603.3 464.6 594.3 480.7 585.1 489.4C575.9 498.1 562.3 500.8 553.0 502.4C543.6 504.0 534.0 501.2 529.0 498.8C523.9 496.5 525.9 490.8 522.7 488.2C519.4 485.6 513.1 488.0 509.3 483.5C505.5 478.9 500.5 470.3 500.0 461.0C499.6 451.8 500.0 438.8 506.4 427.9C512.8 417.1 526.1 404.3 538.6 396.0C551.2 387.7 569.0 382.6 581.7 378.3C594.5 373.9 609.5 365.7 615.0 370.0Z" fill="none" stroke="#ffc890" stroke-width="9" opacity="0.55" filter="url(#b2)"/><path d="M613 387Q585 460 552 507M609 384Q572 451 538 496M606 382Q560 441 524 486M602 379Q547 431 511 475M599 377Q535 421 497 465" fill="none" stroke="#ff7060" stroke-width="1.5" opacity=".22"/></g>
<linearGradient id="gf20" gradientUnits="userSpaceOnUse" x1="625" y1="380" x2="608" y2="501"><stop offset="0" stop-color="#ff6a80"/><stop offset=".55" stop-color="#ff7a78"/><stop offset="1" stop-color="#ff8a60"/></linearGradient><clipPath id="kf20"><path d="M625.0 380.0C631.2 380.9 635.4 394.4 640.7 404.4C645.9 414.4 653.9 427.8 656.5 439.9C659.2 451.9 659.7 467.0 656.6 476.8C653.4 486.7 644.3 494.0 637.8 498.8C631.4 503.7 622.7 505.5 617.7 505.9C612.8 506.2 611.7 501.3 608.0 500.8C604.3 500.3 600.6 504.5 595.6 502.8C590.6 501.0 582.8 496.9 578.2 490.5C573.6 484.1 568.0 474.7 568.0 464.4C568.0 454.1 572.3 439.7 578.2 428.9C584.1 418.0 595.4 407.3 603.2 399.1C611.0 391.0 618.8 379.1 625.0 380.0Z"/></clipPath><path d="M625.0 380.0C631.2 380.9 635.4 394.4 640.7 404.4C645.9 414.4 653.9 427.8 656.5 439.9C659.2 451.9 659.7 467.0 656.6 476.8C653.4 486.7 644.3 494.0 637.8 498.8C631.4 503.7 622.7 505.5 617.7 505.9C612.8 506.2 611.7 501.3 608.0 500.8C604.3 500.3 600.6 504.5 595.6 502.8C590.6 501.0 582.8 496.9 578.2 490.5C573.6 484.1 568.0 474.7 568.0 464.4C568.0 454.1 572.3 439.7 578.2 428.9C584.1 418.0 595.4 407.3 603.2 399.1C611.0 391.0 618.8 379.1 625.0 380.0Z" fill="#a01850" opacity=".28" filter="url(#b5)" transform="translate(0.4 -3.0)"/><path d="M625.0 380.0C631.2 380.9 635.4 394.4 640.7 404.4C645.9 414.4 653.9 427.8 656.5 439.9C659.2 451.9 659.7 467.0 656.6 476.8C653.4 486.7 644.3 494.0 637.8 498.8C631.4 503.7 622.7 505.5 617.7 505.9C612.8 506.2 611.7 501.3 608.0 500.8C604.3 500.3 600.6 504.5 595.6 502.8C590.6 501.0 582.8 496.9 578.2 490.5C573.6 484.1 568.0 474.7 568.0 464.4C568.0 454.1 572.3 439.7 578.2 428.9C584.1 418.0 595.4 407.3 603.2 399.1C611.0 391.0 618.8 379.1 625.0 380.0Z" fill="url(#gf20)"/><g clip-path="url(#kf20)"><path d="M625.0 380.0C631.2 380.9 635.4 394.4 640.7 404.4C645.9 414.4 653.9 427.8 656.5 439.9C659.2 451.9 659.7 467.0 656.6 476.8C653.4 486.7 644.3 494.0 637.8 498.8C631.4 503.7 622.7 505.5 617.7 505.9C612.8 506.2 611.7 501.3 608.0 500.8C604.3 500.3 600.6 504.5 595.6 502.8C590.6 501.0 582.8 496.9 578.2 490.5C573.6 484.1 568.0 474.7 568.0 464.4C568.0 454.1 572.3 439.7 578.2 428.9C584.1 418.0 595.4 407.3 603.2 399.1C611.0 391.0 618.8 379.1 625.0 380.0Z" fill="none" stroke="#ffc0b0" stroke-width="9" opacity="0.55" filter="url(#b2)"/><path d="M631 393Q643 456 639 503M627 393Q629 454 624 501M623 392Q615 452 608 498M619 392Q601 451 593 496M616 391Q587 449 578 494" fill="none" stroke="#ff6a80" stroke-width="1.5" opacity=".22"/></g>
<linearGradient id="gf21" gradientUnits="userSpaceOnUse" x1="650" y1="400" x2="690" y2="511"><stop offset="0" stop-color="#ff5a90"/><stop offset=".55" stop-color="#ff6a90"/><stop offset="1" stop-color="#ff8a58"/></linearGradient><clipPath id="kf21"><path d="M650.0 400.0C655.8 397.9 665.6 407.5 674.6 413.6C683.7 419.8 696.7 427.6 704.5 436.7C712.3 445.8 719.5 458.4 721.3 468.2C723.1 478.0 718.6 488.5 715.2 495.6C711.8 502.7 705.2 508.2 701.0 510.8C696.9 513.3 693.8 509.6 690.4 510.9C686.9 512.1 685.6 517.4 680.5 518.2C675.4 519.0 666.8 519.0 659.9 515.7C653.0 512.3 643.9 506.9 639.2 498.1C634.5 489.3 631.7 475.1 631.9 463.1C632.0 451.1 636.9 436.8 639.9 426.3C642.9 415.8 644.2 402.1 650.0 400.0Z"/></clipPath><path d="M650.0 400.0C655.8 397.9 665.6 407.5 674.6 413.6C683.7 419.8 696.7 427.6 704.5 436.7C712.3 445.8 719.5 458.4 721.3 468.2C723.1 478.0 718.6 488.5 715.2 495.6C711.8 502.7 705.2 508.2 701.0 510.8C696.9 513.3 693.8 509.6 690.4 510.9C686.9 512.1 685.6 517.4 680.5 518.2C675.4 519.0 666.8 519.0 659.9 515.7C653.0 512.3 643.9 506.9 639.2 498.1C634.5 489.3 631.7 475.1 631.9 463.1C632.0 451.1 636.9 436.8 639.9 426.3C642.9 415.8 644.2 402.1 650.0 400.0Z" fill="#a01850" opacity=".28" filter="url(#b5)" transform="translate(-1.0 -2.8)"/><path d="M650.0 400.0C655.8 397.9 665.6 407.5 674.6 413.6C683.7 419.8 696.7 427.6 704.5 436.7C712.3 445.8 719.5 458.4 721.3 468.2C723.1 478.0 718.6 488.5 715.2 495.6C711.8 502.7 705.2 508.2 701.0 510.8C696.9 513.3 693.8 509.6 690.4 510.9C686.9 512.1 685.6 517.4 680.5 518.2C675.4 519.0 666.8 519.0 659.9 515.7C653.0 512.3 643.9 506.9 639.2 498.1C634.5 489.3 631.7 475.1 631.9 463.1C632.0 451.1 636.9 436.8 639.9 426.3C642.9 415.8 644.2 402.1 650.0 400.0Z" fill="url(#gf21)"/><g clip-path="url(#kf21)"><path d="M650.0 400.0C655.8 397.9 665.6 407.5 674.6 413.6C683.7 419.8 696.7 427.6 704.5 436.7C712.3 445.8 719.5 458.4 721.3 468.2C723.1 478.0 718.6 488.5 715.2 495.6C711.8 502.7 705.2 508.2 701.0 510.8C696.9 513.3 693.8 509.6 690.4 510.9C686.9 512.1 685.6 517.4 680.5 518.2C675.4 519.0 666.8 519.0 659.9 515.7C653.0 512.3 643.9 506.9 639.2 498.1C634.5 489.3 631.7 475.1 631.9 463.1C632.0 451.1 636.9 436.8 639.9 426.3C642.9 415.8 644.2 402.1 650.0 400.0Z" fill="none" stroke="#ffc0b0" stroke-width="9" opacity="0.55" filter="url(#b2)"/><path d="M661 409Q700 457 718 498M658 410Q687 462 704 503M654 411Q674 467 690 509M650 412Q661 471 675 514M647 414Q648 476 661 519" fill="none" stroke="#ff5a90" stroke-width="1.5" opacity=".22"/></g>
<linearGradient id="gf22" gradientUnits="userSpaceOnUse" x1="640" y1="330" x2="710" y2="271"><stop offset="0" stop-color="#ff9a38"/><stop offset=".55" stop-color="#ffa444"/><stop offset="1" stop-color="#ff9a70"/></linearGradient><clipPath id="kf22"><path d="M640.0 330.0C636.4 325.7 640.4 315.4 641.9 306.5C643.5 297.6 645.0 285.1 649.2 276.6C653.5 268.1 660.6 259.1 667.5 255.4C674.3 251.6 683.8 252.9 690.3 254.0C696.9 255.1 703.4 259.3 706.7 262.1C710.1 264.9 708.4 268.3 710.5 270.9C712.6 273.4 717.1 273.3 719.4 277.2C721.8 281.2 724.7 288.3 724.5 294.8C724.3 301.2 723.3 310.0 718.3 315.9C713.2 321.8 703.3 327.5 694.2 330.2C685.0 332.9 672.5 332.2 663.4 332.2C654.4 332.1 643.6 334.3 640.0 330.0Z"/></clipPath><path d="M640.0 330.0C636.4 325.7 640.4 315.4 641.9 306.5C643.5 297.6 645.0 285.1 649.2 276.6C653.5 268.1 660.6 259.1 667.5 255.4C674.3 251.6 683.8 252.9 690.3 254.0C696.9 255.1 703.4 259.3 706.7 262.1C710.1 264.9 708.4 268.3 710.5 270.9C712.6 273.4 717.1 273.3 719.4 277.2C721.8 281.2 724.7 288.3 724.5 294.8C724.3 301.2 723.3 310.0 718.3 315.9C713.2 321.8 703.3 327.5 694.2 330.2C685.0 332.9 672.5 332.2 663.4 332.2C654.4 332.1 643.6 334.3 640.0 330.0Z" fill="#a01850" opacity=".28" filter="url(#b5)" transform="translate(-2.3 1.9)"/><path d="M640.0 330.0C636.4 325.7 640.4 315.4 641.9 306.5C643.5 297.6 645.0 285.1 649.2 276.6C653.5 268.1 660.6 259.1 667.5 255.4C674.3 251.6 683.8 252.9 690.3 254.0C696.9 255.1 703.4 259.3 706.7 262.1C710.1 264.9 708.4 268.3 710.5 270.9C712.6 273.4 717.1 273.3 719.4 277.2C721.8 281.2 724.7 288.3 724.5 294.8C724.3 301.2 723.3 310.0 718.3 315.9C713.2 321.8 703.3 327.5 694.2 330.2C685.0 332.9 672.5 332.2 663.4 332.2C654.4 332.1 643.6 334.3 640.0 330.0Z" fill="url(#gf22)"/><g clip-path="url(#kf22)"><path d="M640.0 330.0C636.4 325.7 640.4 315.4 641.9 306.5C643.5 297.6 645.0 285.1 649.2 276.6C653.5 268.1 660.6 259.1 667.5 255.4C674.3 251.6 683.8 252.9 690.3 254.0C696.9 255.1 703.4 259.3 706.7 262.1C710.1 264.9 708.4 268.3 710.5 270.9C712.6 273.4 717.1 273.3 719.4 277.2C721.8 281.2 724.7 288.3 724.5 294.8C724.3 301.2 723.3 310.0 718.3 315.9C713.2 321.8 703.3 327.5 694.2 330.2C685.0 332.9 672.5 332.2 663.4 332.2C654.4 332.1 643.6 334.3 640.0 330.0Z" fill="none" stroke="#ffd8b0" stroke-width="9" opacity="0.55" filter="url(#b2)"/><path d="M643 319Q666 275 691 251M645 321Q674 285 700 262M647 324Q682 295 709 272M649 327Q690 304 718 283M651 329Q698 314 727 293" fill="none" stroke="#ff9a38" stroke-width="1.5" opacity=".22"/></g>
<linearGradient id="gf23" gradientUnits="userSpaceOnUse" x1="745" y1="375" x2="693" y2="247"><stop offset="0" stop-color="#f43cac"/><stop offset=".55" stop-color="#ff60c4"/><stop offset="1" stop-color="#ff78d0"/></linearGradient><clipPath id="kf23"><path d="M745.0 375.0C737.7 378.0 725.2 367.4 713.7 360.9C702.1 354.4 685.6 346.2 675.7 336.0C665.8 325.9 656.5 311.5 654.2 300.1C651.9 288.6 657.6 275.9 661.8 267.2C666.1 258.5 674.1 250.6 679.7 248.1C685.3 245.6 691.0 253.9 695.4 252.2C699.7 250.4 699.7 239.8 705.8 237.5C711.9 235.3 723.2 235.5 731.9 238.9C740.7 242.3 752.3 248.0 758.3 258.0C764.3 268.0 767.9 284.6 767.8 298.8C767.7 313.0 761.5 330.4 757.7 343.1C753.9 355.8 752.3 372.0 745.0 375.0Z"/></clipPath><path d="M745.0 375.0C737.7 378.0 725.2 367.4 713.7 360.9C702.1 354.4 685.6 346.2 675.7 336.0C665.8 325.9 656.5 311.5 654.2 300.1C651.9 288.6 657.6 275.9 661.8 267.2C666.1 258.5 674.1 250.6 679.7 248.1C685.3 245.6 691.0 253.9 695.4 252.2C699.7 250.4 699.7 239.8 705.8 237.5C711.9 235.3 723.2 235.5 731.9 238.9C740.7 242.3 752.3 248.0 758.3 258.0C764.3 268.0 767.9 284.6 767.8 298.8C767.7 313.0 761.5 330.4 757.7 343.1C753.9 355.8 752.3 372.0 745.0 375.0Z" fill="#a01850" opacity=".28" filter="url(#b5)" transform="translate(1.1 2.8)"/><path d="M745.0 375.0C737.7 378.0 725.2 367.4 713.7 360.9C702.1 354.4 685.6 346.2 675.7 336.0C665.8 325.9 656.5 311.5 654.2 300.1C651.9 288.6 657.6 275.9 661.8 267.2C666.1 258.5 674.1 250.6 679.7 248.1C685.3 245.6 691.0 253.9 695.4 252.2C699.7 250.4 699.7 239.8 705.8 237.5C711.9 235.3 723.2 235.5 731.9 238.9C740.7 242.3 752.3 248.0 758.3 258.0C764.3 268.0 767.9 284.6 767.8 298.8C767.7 313.0 761.5 330.4 757.7 343.1C753.9 355.8 752.3 372.0 745.0 375.0Z" fill="url(#gf23)"/><g clip-path="url(#kf23)"><path d="M745.0 375.0C737.7 378.0 725.2 367.4 713.7 360.9C702.1 354.4 685.6 346.2 675.7 336.0C665.8 325.9 656.5 311.5 654.2 300.1C651.9 288.6 657.6 275.9 661.8 267.2C666.1 258.5 674.1 250.6 679.7 248.1C685.3 245.6 691.0 253.9 695.4 252.2C699.7 250.4 699.7 239.8 705.8 237.5C711.9 235.3 723.2 235.5 731.9 238.9C740.7 242.3 752.3 248.0 758.3 258.0C764.3 268.0 767.9 284.6 767.8 298.8C767.7 313.0 761.5 330.4 757.7 343.1C753.9 355.8 752.3 372.0 745.0 375.0Z" fill="none" stroke="#ffc0ee" stroke-width="9" opacity="0.55" filter="url(#b2)"/><path d="M731 366Q681 312 658 264M735 364Q697 305 676 257M740 362Q714 298 694 250M744 360Q731 292 712 242M749 359Q747 285 730 235" fill="none" stroke="#f43cac" stroke-width="1.5" opacity=".22"/></g>
<linearGradient id="gf24" gradientUnits="userSpaceOnUse" x1="660" y1="440" x2="687" y2="313"><stop offset="0" stop-color="#ff8a40"/><stop offset=".55" stop-color="#ffa040"/><stop offset="1" stop-color="#ff9060"/></linearGradient><clipPath id="kf24"><path d="M660.0 440.0C652.5 438.4 650.9 424.1 647.1 413.3C643.2 402.5 636.9 387.9 636.8 375.3C636.7 362.6 640.0 347.2 646.4 337.4C652.9 327.7 666.0 321.2 675.3 317.0C684.5 312.7 695.6 311.8 701.8 312.0C708.0 312.2 708.1 317.3 712.5 318.2C716.9 319.2 722.6 315.3 728.3 317.6C733.9 319.9 742.5 325.1 746.5 332.1C750.5 339.2 754.9 349.4 752.2 359.9C749.6 370.4 740.5 384.7 730.4 395.2C720.3 405.6 703.6 415.4 691.8 422.8C680.1 430.3 667.5 441.6 660.0 440.0Z"/></clipPath><path d="M660.0 440.0C652.5 438.4 650.9 424.1 647.1 413.3C643.2 402.5 636.9 387.9 636.8 375.3C636.7 362.6 640.0 347.2 646.4 337.4C652.9 327.7 666.0 321.2 675.3 317.0C684.5 312.7 695.6 311.8 701.8 312.0C708.0 312.2 708.1 317.3 712.5 318.2C716.9 319.2 722.6 315.3 728.3 317.6C733.9 319.9 742.5 325.1 746.5 332.1C750.5 339.2 754.9 349.4 752.2 359.9C749.6 370.4 740.5 384.7 730.4 395.2C720.3 405.6 703.6 415.4 691.8 422.8C680.1 430.3 667.5 441.6 660.0 440.0Z" fill="#a01850" opacity=".28" filter="url(#b5)" transform="translate(-0.6 2.9)"/><path d="M660.0 440.0C652.5 438.4 650.9 424.1 647.1 413.3C643.2 402.5 636.9 387.9 636.8 375.3C636.7 362.6 640.0 347.2 646.4 337.4C652.9 327.7 666.0 321.2 675.3 317.0C684.5 312.7 695.6 311.8 701.8 312.0C708.0 312.2 708.1 317.3 712.5 318.2C716.9 319.2 722.6 315.3 728.3 317.6C733.9 319.9 742.5 325.1 746.5 332.1C750.5 339.2 754.9 349.4 752.2 359.9C749.6 370.4 740.5 384.7 730.4 395.2C720.3 405.6 703.6 415.4 691.8 422.8C680.1 430.3 667.5 441.6 660.0 440.0Z" fill="url(#gf24)"/><g clip-path="url(#kf24)"><path d="M660.0 440.0C652.5 438.4 650.9 424.1 647.1 413.3C643.2 402.5 636.9 387.9 636.8 375.3C636.7 362.6 640.0 347.2 646.4 337.4C652.9 327.7 666.0 321.2 675.3 317.0C684.5 312.7 695.6 311.8 701.8 312.0C708.0 312.2 708.1 317.3 712.5 318.2C716.9 319.2 722.6 315.3 728.3 317.6C733.9 319.9 742.5 325.1 746.5 332.1C750.5 339.2 754.9 349.4 752.2 359.9C749.6 370.4 740.5 384.7 730.4 395.2C720.3 405.6 703.6 415.4 691.8 422.8C680.1 430.3 667.5 441.6 660.0 440.0Z" fill="none" stroke="#ffd8b0" stroke-width="9" opacity="0.55" filter="url(#b2)"/><path d="M656 426Q658 360 675 313M661 427Q675 363 693 317M665 428Q691 367 711 321M670 429Q708 371 730 325M674 430Q725 374 748 328" fill="none" stroke="#ff8a40" stroke-width="1.5" opacity=".22"/></g>
<linearGradient id="gf25" gradientUnits="userSpaceOnUse" x1="770" y1="470" x2="739" y2="354"><stop offset="0" stop-color="#f43aa6"/><stop offset=".55" stop-color="#ff5cbc"/><stop offset="1" stop-color="#ff70c8"/></linearGradient><clipPath id="kf25"><path d="M770.0 470.0C762.1 472.1 751.2 462.0 740.6 455.5C730.0 449.0 714.6 440.7 706.3 431.2C697.9 421.6 690.9 408.4 690.5 398.1C690.0 387.9 697.9 377.1 703.7 369.7C709.5 362.4 719.2 356.7 725.0 354.1C730.9 351.5 734.3 355.3 738.9 354.1C743.6 352.8 746.4 347.3 753.2 346.6C759.9 345.8 771.1 345.9 779.4 349.4C787.7 353.0 798.6 358.8 803.0 368.0C807.4 377.2 808.2 392.0 805.8 404.5C803.3 417.0 794.2 431.8 788.2 442.8C782.2 453.7 777.9 467.9 770.0 470.0Z"/></clipPath><path d="M770.0 470.0C762.1 472.1 751.2 462.0 740.6 455.5C730.0 449.0 714.6 440.7 706.3 431.2C697.9 421.6 690.9 408.4 690.5 398.1C690.0 387.9 697.9 377.1 703.7 369.7C709.5 362.4 719.2 356.7 725.0 354.1C730.9 351.5 734.3 355.3 738.9 354.1C743.6 352.8 746.4 347.3 753.2 346.6C759.9 345.8 771.1 345.9 779.4 349.4C787.7 353.0 798.6 358.8 803.0 368.0C807.4 377.2 808.2 392.0 805.8 404.5C803.3 417.0 794.2 431.8 788.2 442.8C782.2 453.7 777.9 467.9 770.0 470.0Z" fill="#a01850" opacity=".28" filter="url(#b5)" transform="translate(0.8 2.9)"/><path d="M770.0 470.0C762.1 472.1 751.2 462.0 740.6 455.5C730.0 449.0 714.6 440.7 706.3 431.2C697.9 421.6 690.9 408.4 690.5 398.1C690.0 387.9 697.9 377.1 703.7 369.7C709.5 362.4 719.2 356.7 725.0 354.1C730.9 351.5 734.3 355.3 738.9 354.1C743.6 352.8 746.4 347.3 753.2 346.6C759.9 345.8 771.1 345.9 779.4 349.4C787.7 353.0 798.6 358.8 803.0 368.0C807.4 377.2 808.2 392.0 805.8 404.5C803.3 417.0 794.2 431.8 788.2 442.8C782.2 453.7 777.9 467.9 770.0 470.0Z" fill="url(#gf25)"/><g clip-path="url(#kf25)"><path d="M770.0 470.0C762.1 472.1 751.2 462.0 740.6 455.5C730.0 449.0 714.6 440.7 706.3 431.2C697.9 421.6 690.9 408.4 690.5 398.1C690.0 387.9 697.9 377.1 703.7 369.7C709.5 362.4 719.2 356.7 725.0 354.1C730.9 351.5 734.3 355.3 738.9 354.1C743.6 352.8 746.4 347.3 753.2 346.6C759.9 345.8 771.1 345.9 779.4 349.4C787.7 353.0 798.6 358.8 803.0 368.0C807.4 377.2 808.2 392.0 805.8 404.5C803.3 417.0 794.2 431.8 788.2 442.8C782.2 453.7 777.9 467.9 770.0 470.0Z" fill="none" stroke="#ffb8ea" stroke-width="9" opacity="0.55" filter="url(#b2)"/><path d="M757 461Q716 410 701 367M762 460Q734 405 720 362M767 458Q751 400 740 356M772 457Q769 396 759 351M777 456Q787 391 779 346" fill="none" stroke="#f43aa6" stroke-width="1.5" opacity=".22"/></g>
</g>
<circle cx="629" cy="311" r="58" fill="#fff" opacity=".35" filter="url(#b10)"/>
<circle cx="629" cy="311" r="46" fill="#fff" opacity=".6" filter="url(#b5)"/><circle cx="629" cy="311" r="42" fill="#fff"/>
<circle cx="776" cy="552" r="50" fill="url(#ear)"/>
<path d="M1322 1040 Q1340 1020 1344 1000 Q1354 1040 1338 1075 L1318 1075Z" fill="#ff9a30"/>
<clipPath id="cp1"><path d="M1028.0 870.0C1028.8 830.0 1030.2 845.3 1035.0 835.0C1039.8 824.7 1048.7 815.5 1057.0 808.0C1065.3 800.5 1075.0 794.5 1085.0 790.0C1095.0 785.5 1104.2 781.7 1117.0 781.0C1129.8 780.3 1148.2 783.0 1162.0 786.0C1175.8 789.0 1185.3 792.3 1200.0 799.0C1214.7 805.7 1234.7 816.7 1250.0 826.0C1265.3 835.3 1279.0 843.2 1292.0 855.0C1305.0 866.8 1319.2 882.2 1328.0 897.0C1336.8 911.8 1341.8 928.5 1345.0 944.0C1348.2 959.5 1348.8 976.3 1347.0 990.0C1345.2 1003.7 1339.8 1011.8 1334.0 1026.0C1328.2 1040.2 1362.7 1066.8 1312.0 1075.0C1261.3 1083.2 1077.3 1109.2 1030.0 1075.0C982.7 1040.8 1027.2 910.0 1028.0 870.0Z"/></clipPath><path d="M1028.0 870.0C1028.8 830.0 1030.2 845.3 1035.0 835.0C1039.8 824.7 1048.7 815.5 1057.0 808.0C1065.3 800.5 1075.0 794.5 1085.0 790.0C1095.0 785.5 1104.2 781.7 1117.0 781.0C1129.8 780.3 1148.2 783.0 1162.0 786.0C1175.8 789.0 1185.3 792.3 1200.0 799.0C1214.7 805.7 1234.7 816.7 1250.0 826.0C1265.3 835.3 1279.0 843.2 1292.0 855.0C1305.0 866.8 1319.2 882.2 1328.0 897.0C1336.8 911.8 1341.8 928.5 1345.0 944.0C1348.2 959.5 1348.8 976.3 1347.0 990.0C1345.2 1003.7 1339.8 1011.8 1334.0 1026.0C1328.2 1040.2 1362.7 1066.8 1312.0 1075.0C1261.3 1083.2 1077.3 1109.2 1030.0 1075.0C982.7 1040.8 1027.2 910.0 1028.0 870.0Z" fill="url(#pG)"/><g clip-path="url(#cp1)"><path d="M1150 1200Q1142 963 1028 870M1150 1200Q1142 960 1030 859M1150 1200Q1143 957 1033 847M1150 1200Q1144 954 1035 836M1150 1200Q1145 952 1042 827M1150 1200Q1147 950 1049 818M1150 1200Q1149 948 1056 809M1150 1200Q1151 946 1065 803M1150 1200Q1153 944 1074 797M1150 1200Q1156 943 1083 791M1150 1200Q1158 942 1093 788M1150 1200Q1161 941 1104 785M1150 1200Q1163 941 1114 782M1150 1200Q1167 941 1128 782M1150 1200Q1171 941 1142 784M1150 1200Q1174 942 1157 785M1150 1200Q1177 942 1170 789M1150 1200Q1181 943 1183 793M1150 1200Q1184 945 1195 797M1150 1200Q1187 946 1210 804M1150 1200Q1191 949 1226 813M1150 1200Q1195 951 1242 822M1150 1200Q1199 953 1257 831M1150 1200Q1203 955 1271 840M1150 1200Q1206 958 1285 850M1150 1200Q1209 961 1297 861M1150 1200Q1212 964 1309 875M1150 1200Q1215 967 1321 889M1150 1200Q1217 971 1330 903M1150 1200Q1219 975 1336 918M1150 1200Q1220 979 1341 934M1150 1200Q1221 982 1345 949M1150 1200Q1221 986 1346 964M1150 1200Q1222 990 1347 979M1150 1200Q1221 994 1346 993M1150 1200Q1220 996 1342 1005M1150 1200Q1219 999 1337 1017M1150 1200Q1218 1003 1333 1029M1150 1200Q1216 1007 1325 1045M1150 1200Q1214 1011 1318 1061M1150 1200Q1210 1014 1300 1075M1150 1200Q1187 1014 1208 1075M1150 1200Q1164 1014 1116 1075M1150 1200Q1142 1013 1030 1071M1150 1200Q1142 996 1029 1004M1150 1200Q1142 979 1029 937" fill="none" stroke="#ff80c8" stroke-width="1.2" opacity="0.16"/><path d="M1030.0 870.0C1030.8 864.2 1030.5 845.3 1035.0 835.0C1039.5 824.7 1048.7 815.5 1057.0 808.0C1065.3 800.5 1075.0 794.5 1085.0 790.0C1095.0 785.5 1104.2 781.5 1117.0 781.0C1129.8 780.5 1154.5 786.0 1162.0 787.0" fill="none" stroke="#ffb0b0" stroke-width="22" opacity="0.7" filter="url(#b10)" stroke-linecap="round"/><path d="M1290.0 852.0C1296.3 859.5 1318.7 881.7 1328.0 897.0C1337.3 912.3 1342.8 928.5 1346.0 944.0C1349.2 959.5 1349.0 976.3 1347.0 990.0C1345.0 1003.7 1339.8 1011.8 1334.0 1026.0C1328.2 1040.2 1315.7 1066.8 1312.0 1075.0" fill="none" stroke="#ff7078" stroke-width="30" opacity="0.8" filter="url(#b10)" stroke-linecap="round"/></g>
<clipPath id="cp2"><path d="M604.0 835.0C603.5 808.3 608.7 803.3 612.0 790.0C615.3 776.7 617.7 768.0 624.0 755.0C630.3 742.0 639.8 725.5 650.0 712.0C660.2 698.5 676.7 679.3 685.0 674.0C693.3 668.7 694.3 677.3 700.0 680.0C705.7 682.7 711.5 691.3 719.0 690.0C726.5 688.7 734.0 677.3 745.0 672.0C756.0 666.7 771.3 661.2 785.0 658.0C798.7 654.8 811.2 653.0 827.0 653.0C842.8 653.0 863.0 654.5 880.0 658.0C897.0 661.5 914.8 667.3 929.0 674.0C943.2 680.7 953.8 687.8 965.0 698.0C976.2 708.2 987.8 721.7 996.0 735.0C1004.2 748.3 1009.8 762.7 1014.0 778.0C1018.2 793.3 1020.3 810.0 1021.0 827.0C1021.7 844.0 1020.7 851.2 1018.0 880.0C1015.3 908.8 1008.0 966.7 1005.0 1000.0C1002.0 1033.3 1060.8 1066.7 1000.0 1080.0C939.2 1093.3 704.2 1101.7 640.0 1080.0C575.8 1058.3 621.0 990.8 615.0 950.0C609.0 909.2 604.5 861.7 604.0 835.0Z"/></clipPath><path d="M604.0 835.0C603.5 808.3 608.7 803.3 612.0 790.0C615.3 776.7 617.7 768.0 624.0 755.0C630.3 742.0 639.8 725.5 650.0 712.0C660.2 698.5 676.7 679.3 685.0 674.0C693.3 668.7 694.3 677.3 700.0 680.0C705.7 682.7 711.5 691.3 719.0 690.0C726.5 688.7 734.0 677.3 745.0 672.0C756.0 666.7 771.3 661.2 785.0 658.0C798.7 654.8 811.2 653.0 827.0 653.0C842.8 653.0 863.0 654.5 880.0 658.0C897.0 661.5 914.8 667.3 929.0 674.0C943.2 680.7 953.8 687.8 965.0 698.0C976.2 708.2 987.8 721.7 996.0 735.0C1004.2 748.3 1009.8 762.7 1014.0 778.0C1018.2 793.3 1020.3 810.0 1021.0 827.0C1021.7 844.0 1020.7 851.2 1018.0 880.0C1015.3 908.8 1008.0 966.7 1005.0 1000.0C1002.0 1033.3 1060.8 1066.7 1000.0 1080.0C939.2 1093.3 704.2 1101.7 640.0 1080.0C575.8 1058.3 621.0 990.8 615.0 950.0C609.0 909.2 604.5 861.7 604.0 835.0Z" fill="url(#pA)"/><g clip-path="url(#cp2)"><path d="M830 1250Q764 914 604 835M830 1250Q765 909 607 816M830 1250Q766 904 611 797M830 1250Q767 900 615 781M830 1250Q768 896 620 766M830 1250Q770 893 627 751M830 1250Q772 888 638 733M830 1250Q775 884 648 715M830 1250Q779 879 663 698M830 1250Q782 875 677 682M830 1250Q785 874 688 675M830 1250Q787 874 694 678M830 1250Q788 875 701 680M830 1250Q790 876 709 685M830 1250Q792 877 717 689M830 1250Q795 876 727 685M830 1250Q798 874 738 677M830 1250Q801 872 751 670M830 1250Q805 871 767 664M830 1250Q809 869 784 658M830 1250Q814 869 802 656M830 1250Q818 868 819 654M830 1250Q823 868 840 654M830 1250Q829 869 862 656M830 1250Q834 870 884 659M830 1250Q839 871 904 666M830 1250Q844 873 925 673M830 1250Q848 875 941 682M830 1250Q852 878 956 692M830 1250Q856 881 971 705M830 1250Q859 885 984 720M830 1250Q862 889 996 736M830 1250Q864 893 1004 754M830 1250Q866 898 1011 772M830 1250Q867 903 1016 792M830 1250Q868 908 1019 812M830 1250Q868 913 1021 833M830 1250Q868 919 1019 856M830 1250Q868 924 1018 878M830 1250Q866 936 1013 926M830 1250Q865 949 1008 976M830 1250Q864 959 1004 1018M830 1250Q864 968 1002 1051M830 1250Q858 975 978 1080M830 1250Q820 975 827 1080M830 1250Q782 975 676 1080M830 1250Q771 964 632 1038M830 1250Q768 951 622 984M830 1250Q766 938 613 932M830 1250Q765 926 609 883" fill="none" stroke="#ff5030" stroke-width="1.2" opacity="0.12"/><path d="M760.0 666.0C764.2 664.7 773.8 660.2 785.0 658.0C796.2 655.8 811.2 653.0 827.0 653.0C842.8 653.0 863.0 654.5 880.0 658.0C897.0 661.5 914.8 667.3 929.0 674.0C943.2 680.7 953.8 687.8 965.0 698.0C976.2 708.2 987.8 721.7 996.0 735.0C1004.2 748.3 1009.8 762.7 1014.0 778.0C1018.2 793.3 1019.8 818.8 1021.0 827.0" fill="none" stroke="#ffa034" stroke-width="62" opacity="0.95" filter="url(#b16)" stroke-linecap="round"/><path d="M604.0 835.0C605.3 827.5 608.7 803.3 612.0 790.0C615.3 776.7 617.7 768.0 624.0 755.0C630.3 742.0 639.8 725.5 650.0 712.0C660.2 698.5 679.2 680.3 685.0 674.0" fill="none" stroke="#ff6a60" stroke-width="18" opacity="0.7" filter="url(#b10)" stroke-linecap="round"/></g>
<clipPath id="cp3"><path d="M160.0 1085.0C123.3 1078.8 172.5 1058.5 180.0 1048.0C187.5 1037.5 194.2 1030.5 205.0 1022.0C215.8 1013.5 232.3 1002.7 245.0 997.0C257.7 991.3 271.0 988.7 281.0 988.0C291.0 987.3 296.8 990.0 305.0 993.0C313.2 996.0 320.0 999.8 330.0 1006.0C340.0 1012.2 353.3 1016.8 365.0 1030.0C376.7 1043.2 434.2 1075.8 400.0 1085.0C365.8 1094.2 196.7 1091.2 160.0 1085.0Z"/></clipPath><path d="M160.0 1085.0C123.3 1078.8 172.5 1058.5 180.0 1048.0C187.5 1037.5 194.2 1030.5 205.0 1022.0C215.8 1013.5 232.3 1002.7 245.0 997.0C257.7 991.3 271.0 988.7 281.0 988.0C291.0 987.3 296.8 990.0 305.0 993.0C313.2 996.0 320.0 999.8 330.0 1006.0C340.0 1012.2 353.3 1016.8 365.0 1030.0C376.7 1043.2 434.2 1075.8 400.0 1085.0C365.8 1094.2 196.7 1091.2 160.0 1085.0Z" fill="url(#pC)"/><g clip-path="url(#cp3)"><path d="M160.0 1085.0C123.3 1078.8 172.5 1058.5 180.0 1048.0C187.5 1037.5 194.2 1030.5 205.0 1022.0C215.8 1013.5 232.3 1002.7 245.0 997.0C257.7 991.3 271.0 988.7 281.0 988.0C291.0 987.3 296.8 990.0 305.0 993.0C313.2 996.0 320.0 999.8 330.0 1006.0C340.0 1012.2 353.3 1016.8 365.0 1030.0C376.7 1043.2 434.2 1075.8 400.0 1085.0C365.8 1094.2 196.7 1091.2 160.0 1085.0Z" fill="none" stroke="#ff7a60" stroke-width="10" opacity="0.6" filter="url(#b5)" stroke-linecap="round"/></g>
<clipPath id="cp4"><path d="M285.0 925.0C284.7 910.8 286.5 893.7 290.0 880.0C293.5 866.3 298.5 854.7 306.0 843.0C313.5 831.3 323.8 819.5 335.0 810.0C346.2 800.5 360.5 791.8 373.0 786.0C385.5 780.2 397.5 777.3 410.0 775.0C422.5 772.7 436.3 771.5 448.0 772.0C459.7 772.5 471.0 776.5 480.0 778.0C489.0 779.5 495.0 781.3 502.0 781.0C509.0 780.7 516.0 774.5 522.0 776.0C528.0 777.5 533.7 782.7 538.0 790.0C542.3 797.3 545.0 810.0 548.0 820.0C551.0 830.0 552.7 838.3 556.0 850.0C559.3 861.7 563.5 877.5 568.0 890.0C572.5 902.5 577.7 915.0 583.0 925.0C588.3 935.0 593.2 942.2 600.0 950.0C606.8 957.8 617.0 963.7 624.0 972.0C631.0 980.3 637.3 990.3 642.0 1000.0C646.7 1009.7 649.8 1015.8 652.0 1030.0C654.2 1044.2 700.3 1075.8 655.0 1085.0C609.7 1094.2 431.7 1092.5 380.0 1085.0C328.3 1077.5 356.3 1054.2 345.0 1040.0C333.7 1025.8 320.8 1012.5 312.0 1000.0C303.2 987.5 296.5 977.5 292.0 965.0C287.5 952.5 285.3 939.2 285.0 925.0Z"/></clipPath><path d="M285.0 925.0C284.7 910.8 286.5 893.7 290.0 880.0C293.5 866.3 298.5 854.7 306.0 843.0C313.5 831.3 323.8 819.5 335.0 810.0C346.2 800.5 360.5 791.8 373.0 786.0C385.5 780.2 397.5 777.3 410.0 775.0C422.5 772.7 436.3 771.5 448.0 772.0C459.7 772.5 471.0 776.5 480.0 778.0C489.0 779.5 495.0 781.3 502.0 781.0C509.0 780.7 516.0 774.5 522.0 776.0C528.0 777.5 533.7 782.7 538.0 790.0C542.3 797.3 545.0 810.0 548.0 820.0C551.0 830.0 552.7 838.3 556.0 850.0C559.3 861.7 563.5 877.5 568.0 890.0C572.5 902.5 577.7 915.0 583.0 925.0C588.3 935.0 593.2 942.2 600.0 950.0C606.8 957.8 617.0 963.7 624.0 972.0C631.0 980.3 637.3 990.3 642.0 1000.0C646.7 1009.7 649.8 1015.8 652.0 1030.0C654.2 1044.2 700.3 1075.8 655.0 1085.0C609.7 1094.2 431.7 1092.5 380.0 1085.0C328.3 1077.5 356.3 1054.2 345.0 1040.0C333.7 1025.8 320.8 1012.5 312.0 1000.0C303.2 987.5 296.5 977.5 292.0 965.0C287.5 952.5 285.3 939.2 285.0 925.0Z" fill="url(#pB)"/><g clip-path="url(#cp4)"><path d="M480 1300Q426 1005 285 925M480 1300Q426 999 287 903M480 1300Q427 994 290 882M480 1300Q429 989 297 864M480 1300Q430 985 305 846M480 1300Q434 981 318 830M480 1300Q437 977 332 814M480 1300Q441 974 349 801M480 1300Q446 971 367 790M480 1300Q451 969 385 782M480 1300Q455 968 403 777M480 1300Q459 967 421 774M480 1300Q464 967 439 773M480 1300Q468 967 456 773M480 1300Q472 968 471 776M480 1300Q475 968 484 779M480 1300Q478 969 495 780M480 1300Q481 969 505 780M480 1300Q483 968 515 778M480 1300Q485 968 524 778M480 1300Q487 970 532 784M480 1300Q489 972 539 792M480 1300Q490 975 544 807M480 1300Q491 979 548 821M480 1300Q492 982 552 836M480 1300Q493 986 556 850M480 1300Q495 991 562 869M480 1300Q496 996 568 888M480 1300Q498 1000 575 905M480 1300Q500 1004 582 922M480 1300Q502 1007 590 935M480 1300Q504 1010 598 947M480 1300Q506 1013 609 958M480 1300Q509 1016 620 968M480 1300Q512 1019 630 981M480 1300Q514 1022 638 994M480 1300Q515 1026 645 1008M480 1300Q517 1029 650 1023M480 1300Q517 1034 653 1043M480 1300Q518 1041 654 1070M480 1300Q504 1045 600 1085M480 1300Q471 1045 468 1085M480 1300Q448 1043 374 1078M480 1300Q444 1038 358 1056M480 1300Q440 1032 341 1035M480 1300Q436 1028 325 1016M480 1300Q432 1023 310 997M480 1300Q429 1019 301 980M480 1300Q427 1014 292 963M480 1300Q426 1010 288 944" fill="none" stroke="#e02000" stroke-width="1.2" opacity="0.13"/><path d="M288.0 940.0C288.7 944.2 288.0 955.0 292.0 965.0C296.0 975.0 303.2 987.5 312.0 1000.0C320.8 1012.5 333.7 1025.8 345.0 1040.0C356.3 1054.2 374.2 1077.5 380.0 1085.0" fill="none" stroke="#ffb83c" stroke-width="44" opacity="0.85" filter="url(#b16)" stroke-linecap="round"/><path d="M556.0 850.0C558.0 856.7 563.5 877.5 568.0 890.0C572.5 902.5 577.7 915.0 583.0 925.0C588.3 935.0 593.2 942.2 600.0 950.0C606.8 957.8 617.0 963.7 624.0 972.0C631.0 980.3 637.3 990.3 642.0 1000.0C646.7 1009.7 650.3 1025.0 652.0 1030.0" fill="none" stroke="#ff9a50" stroke-width="16" opacity="0.6" filter="url(#b10)" stroke-linecap="round"/></g>
<clipPath id="cp5"><path d="M566.0 872.0C566.5 861.2 572.8 855.8 578.0 850.0C583.2 844.2 590.3 840.2 597.0 837.0C603.7 833.8 610.5 831.5 618.0 831.0C625.5 830.5 634.3 831.5 642.0 834.0C649.7 836.5 657.3 840.3 664.0 846.0C670.7 851.7 676.7 859.0 682.0 868.0C687.3 877.0 691.7 889.7 696.0 900.0C700.3 910.3 703.7 920.0 708.0 930.0C712.3 940.0 717.7 950.0 722.0 960.0C726.3 970.0 730.7 979.2 734.0 990.0C737.3 1000.8 740.0 1009.2 742.0 1025.0C744.0 1040.8 760.5 1075.0 746.0 1085.0C731.5 1095.0 671.0 1095.8 655.0 1085.0C639.0 1074.2 654.2 1036.7 650.0 1020.0C645.8 1003.3 638.3 995.8 630.0 985.0C621.7 974.2 609.2 966.7 600.0 955.0C590.8 943.3 580.7 928.8 575.0 915.0C569.3 901.2 565.5 882.8 566.0 872.0Z"/></clipPath><path d="M566.0 872.0C566.5 861.2 572.8 855.8 578.0 850.0C583.2 844.2 590.3 840.2 597.0 837.0C603.7 833.8 610.5 831.5 618.0 831.0C625.5 830.5 634.3 831.5 642.0 834.0C649.7 836.5 657.3 840.3 664.0 846.0C670.7 851.7 676.7 859.0 682.0 868.0C687.3 877.0 691.7 889.7 696.0 900.0C700.3 910.3 703.7 920.0 708.0 930.0C712.3 940.0 717.7 950.0 722.0 960.0C726.3 970.0 730.7 979.2 734.0 990.0C737.3 1000.8 740.0 1009.2 742.0 1025.0C744.0 1040.8 760.5 1075.0 746.0 1085.0C731.5 1095.0 671.0 1095.8 655.0 1085.0C639.0 1074.2 654.2 1036.7 650.0 1020.0C645.8 1003.3 638.3 995.8 630.0 985.0C621.7 974.2 609.2 966.7 600.0 955.0C590.8 943.3 580.7 928.8 575.0 915.0C569.3 901.2 565.5 882.8 566.0 872.0Z" fill="url(#pD)"/><g clip-path="url(#cp5)"><path d="M566.0 872.0C566.5 861.2 572.8 855.8 578.0 850.0C583.2 844.2 590.3 840.2 597.0 837.0C603.7 833.8 610.5 831.5 618.0 831.0C625.5 830.5 634.3 831.5 642.0 834.0C649.7 836.5 657.3 840.3 664.0 846.0C670.7 851.7 676.7 859.0 682.0 868.0C687.3 877.0 691.7 889.7 696.0 900.0C700.3 910.3 703.7 920.0 708.0 930.0C712.3 940.0 717.7 950.0 722.0 960.0C726.3 970.0 730.7 979.2 734.0 990.0C737.3 1000.8 740.0 1009.2 742.0 1025.0C744.0 1040.8 760.5 1075.0 746.0 1085.0C731.5 1095.0 671.0 1095.8 655.0 1085.0C639.0 1074.2 654.2 1036.7 650.0 1020.0C645.8 1003.3 638.3 995.8 630.0 985.0C621.7 974.2 609.2 966.7 600.0 955.0C590.8 943.3 580.7 928.8 575.0 915.0C569.3 901.2 565.5 882.8 566.0 872.0Z" fill="none" stroke="#ffc0a0" stroke-width="8" opacity="0.55" filter="url(#b5)" stroke-linecap="round"/></g>
<clipPath id="cp6"><path d="M722.0 975.0C722.0 960.8 728.8 946.8 735.0 935.0C741.2 923.2 749.8 911.8 759.0 904.0C768.2 896.2 778.7 892.5 790.0 888.0C801.3 883.5 814.5 879.7 827.0 877.0C839.5 874.3 852.8 874.5 865.0 872.0C877.2 869.5 890.5 866.0 900.0 862.0C909.5 858.0 916.2 852.2 922.0 848.0C927.8 843.8 930.7 837.3 935.0 837.0C939.3 836.7 944.5 840.5 948.0 846.0C951.5 851.5 955.0 861.0 956.0 870.0C957.0 879.0 956.7 888.3 954.0 900.0C951.3 911.7 944.0 923.3 940.0 940.0C936.0 956.7 931.7 975.8 930.0 1000.0C928.3 1024.2 960.8 1070.8 930.0 1085.0C899.2 1099.2 777.5 1095.8 745.0 1085.0C712.5 1074.2 738.8 1038.3 735.0 1020.0C731.2 1001.7 722.0 989.2 722.0 975.0Z"/></clipPath><path d="M722.0 975.0C722.0 960.8 728.8 946.8 735.0 935.0C741.2 923.2 749.8 911.8 759.0 904.0C768.2 896.2 778.7 892.5 790.0 888.0C801.3 883.5 814.5 879.7 827.0 877.0C839.5 874.3 852.8 874.5 865.0 872.0C877.2 869.5 890.5 866.0 900.0 862.0C909.5 858.0 916.2 852.2 922.0 848.0C927.8 843.8 930.7 837.3 935.0 837.0C939.3 836.7 944.5 840.5 948.0 846.0C951.5 851.5 955.0 861.0 956.0 870.0C957.0 879.0 956.7 888.3 954.0 900.0C951.3 911.7 944.0 923.3 940.0 940.0C936.0 956.7 931.7 975.8 930.0 1000.0C928.3 1024.2 960.8 1070.8 930.0 1085.0C899.2 1099.2 777.5 1095.8 745.0 1085.0C712.5 1074.2 738.8 1038.3 735.0 1020.0C731.2 1001.7 722.0 989.2 722.0 975.0Z" fill="url(#pE)"/><g clip-path="url(#cp6)"><path d="M820 1200Q815 1007 722 975M820 1200Q816 1003 728 958M820 1200Q817 998 733 941M820 1200Q820 995 742 926M820 1200Q822 991 752 913M820 1200Q825 989 763 902M820 1200Q828 987 776 895M820 1200Q832 985 789 888M820 1200Q835 984 805 884M820 1200Q839 983 821 879M820 1200Q843 982 836 876M820 1200Q847 981 853 874M820 1200Q851 981 868 871M820 1200Q855 980 883 867M820 1200Q859 979 898 862M820 1200Q861 977 908 857M820 1200Q864 976 918 851M820 1200Q865 974 925 846M820 1200Q867 973 930 841M820 1200Q868 972 936 838M820 1200Q870 973 942 842M820 1200Q871 974 947 845M820 1200Q872 977 951 854M820 1200Q873 979 954 865M820 1200Q873 982 956 876M820 1200Q873 985 955 889M820 1200Q873 989 953 902M820 1200Q871 993 947 919M820 1200Q870 997 941 936M820 1200Q868 1003 937 960M820 1200Q867 1009 932 985M820 1200Q867 1017 930 1015M820 1200Q867 1026 930 1051M820 1200Q866 1034 925 1085M820 1200Q846 1034 847 1085M820 1200Q826 1034 768 1085M820 1200Q820 1029 742 1066M820 1200Q819 1023 738 1038M820 1200Q817 1016 733 1013M820 1200Q816 1012 728 994" fill="none" stroke="#ff7020" stroke-width="1.2" opacity="0.14"/><path d="M722.0 975.0C722.0 960.8 728.8 946.8 735.0 935.0C741.2 923.2 749.8 911.8 759.0 904.0C768.2 896.2 778.7 892.5 790.0 888.0C801.3 883.5 814.5 879.7 827.0 877.0C839.5 874.3 852.8 874.5 865.0 872.0C877.2 869.5 890.5 866.0 900.0 862.0C909.5 858.0 916.2 852.2 922.0 848.0C927.8 843.8 930.7 837.3 935.0 837.0C939.3 836.7 944.5 840.5 948.0 846.0C951.5 851.5 955.0 861.0 956.0 870.0C957.0 879.0 956.7 888.3 954.0 900.0C951.3 911.7 944.0 923.3 940.0 940.0C936.0 956.7 931.7 975.8 930.0 1000.0C928.3 1024.2 960.8 1070.8 930.0 1085.0C899.2 1099.2 777.5 1095.8 745.0 1085.0C712.5 1074.2 738.8 1038.3 735.0 1020.0C731.2 1001.7 722.0 989.2 722.0 975.0Z" fill="none" stroke="#ffd0a8" stroke-width="8" opacity="0.6" filter="url(#b5)" stroke-linecap="round"/></g>
<clipPath id="cp7"><path d="M888.0 1000.0C889.8 987.0 891.0 971.7 897.0 957.0C903.0 942.3 916.0 922.8 924.0 912.0C932.0 901.2 936.8 898.0 945.0 892.0C953.2 886.0 963.0 880.7 973.0 876.0C983.0 871.3 994.5 867.0 1005.0 864.0C1015.5 861.0 1025.2 859.0 1036.0 858.0C1046.8 857.0 1059.5 857.2 1070.0 858.0C1080.5 858.8 1089.3 860.3 1099.0 863.0C1108.7 865.7 1119.0 869.5 1128.0 874.0C1137.0 878.5 1145.7 884.7 1153.0 890.0C1160.3 895.3 1166.2 900.2 1172.0 906.0C1177.8 911.8 1183.3 918.0 1188.0 925.0C1192.7 932.0 1197.0 940.2 1200.0 948.0C1203.0 955.8 1205.0 964.2 1206.0 972.0C1207.0 979.8 1206.7 987.3 1206.0 995.0C1205.3 1002.7 1204.0 1009.7 1202.0 1018.0C1200.0 1026.3 1196.7 1033.8 1194.0 1045.0C1191.3 1056.2 1236.2 1078.3 1186.0 1085.0C1135.8 1091.7 943.0 1093.3 893.0 1085.0C843.0 1076.7 886.8 1049.2 886.0 1035.0C885.2 1020.8 886.2 1013.0 888.0 1000.0Z"/></clipPath><path d="M888.0 1000.0C889.8 987.0 891.0 971.7 897.0 957.0C903.0 942.3 916.0 922.8 924.0 912.0C932.0 901.2 936.8 898.0 945.0 892.0C953.2 886.0 963.0 880.7 973.0 876.0C983.0 871.3 994.5 867.0 1005.0 864.0C1015.5 861.0 1025.2 859.0 1036.0 858.0C1046.8 857.0 1059.5 857.2 1070.0 858.0C1080.5 858.8 1089.3 860.3 1099.0 863.0C1108.7 865.7 1119.0 869.5 1128.0 874.0C1137.0 878.5 1145.7 884.7 1153.0 890.0C1160.3 895.3 1166.2 900.2 1172.0 906.0C1177.8 911.8 1183.3 918.0 1188.0 925.0C1192.7 932.0 1197.0 940.2 1200.0 948.0C1203.0 955.8 1205.0 964.2 1206.0 972.0C1207.0 979.8 1206.7 987.3 1206.0 995.0C1205.3 1002.7 1204.0 1009.7 1202.0 1018.0C1200.0 1026.3 1196.7 1033.8 1194.0 1045.0C1191.3 1056.2 1236.2 1078.3 1186.0 1085.0C1135.8 1091.7 943.0 1093.3 893.0 1085.0C843.0 1076.7 886.8 1049.2 886.0 1035.0C885.2 1020.8 886.2 1013.0 888.0 1000.0Z" fill="url(#pF)"/><g clip-path="url(#cp7)"><rect x="880" y="850" width="340" height="240" fill="url(#pFpk)"/><rect x="880" y="850" width="340" height="240" fill="url(#pFhi)"/><path d="M1020 1250Q1012 1035 888 1000M1020 1250Q1012 1032 891 985M1020 1250Q1013 1028 894 970M1020 1250Q1014 1024 898 955M1020 1250Q1016 1020 908 939M1020 1250Q1019 1016 917 923M1020 1250Q1021 1013 926 910M1020 1250Q1023 1011 933 903M1020 1250Q1025 1009 941 896M1020 1250Q1027 1008 949 890M1020 1250Q1029 1006 959 884M1020 1250Q1032 1005 969 878M1020 1250Q1034 1004 979 874M1020 1250Q1037 1003 991 869M1020 1250Q1040 1002 1002 865M1020 1250Q1043 1001 1013 862M1020 1250Q1045 1000 1024 860M1020 1250Q1048 1000 1034 858M1020 1250Q1051 1000 1046 858M1020 1250Q1054 1000 1058 858M1020 1250Q1057 1000 1070 858M1020 1250Q1060 1000 1080 860M1020 1250Q1062 1001 1090 862M1020 1250Q1065 1001 1100 864M1020 1250Q1067 1002 1111 867M1020 1250Q1070 1003 1121 871M1020 1250Q1072 1004 1130 876M1020 1250Q1074 1006 1139 881M1020 1250Q1077 1007 1148 887M1020 1250Q1079 1008 1156 892M1020 1250Q1080 1010 1162 898M1020 1250Q1082 1011 1169 904M1020 1250Q1083 1013 1175 910M1020 1250Q1085 1014 1181 916M1020 1250Q1086 1016 1186 923M1020 1250Q1087 1018 1191 931M1020 1250Q1088 1020 1195 939M1020 1250Q1089 1022 1199 947M1020 1250Q1090 1024 1202 955M1020 1250Q1091 1026 1204 964M1020 1250Q1091 1028 1206 972M1020 1250Q1091 1030 1206 980M1020 1250Q1091 1032 1206 988M1020 1250Q1091 1034 1206 996M1020 1250Q1091 1036 1204 1004M1020 1250Q1090 1038 1203 1012M1020 1250Q1090 1040 1201 1021M1020 1250Q1089 1043 1198 1030M1020 1250Q1088 1045 1196 1040M1020 1250Q1088 1048 1193 1051M1020 1250Q1087 1052 1190 1065M1020 1250Q1086 1055 1187 1079M1020 1250Q1071 1057 1127 1085M1020 1250Q1046 1057 1025 1085M1020 1250Q1020 1057 922 1085M1020 1250Q1012 1053 891 1072M1020 1250Q1012 1049 889 1055M1020 1250Q1011 1045 886 1038M1020 1250Q1011 1041 887 1024M1020 1250Q1011 1038 887 1012" fill="none" stroke="#ffb0f0" stroke-width="1.2" opacity="0.16"/><path d="M893.0 1085.0C891.8 1076.7 886.8 1049.2 886.0 1035.0C885.2 1020.8 886.2 1013.0 888.0 1000.0C889.8 987.0 891.0 971.7 897.0 957.0C903.0 942.3 916.0 922.8 924.0 912.0C932.0 901.2 936.8 898.0 945.0 892.0C953.2 886.0 968.3 878.7 973.0 876.0" fill="none" stroke="#ff9030" stroke-width="30" opacity="0.95" filter="url(#b10)" stroke-linecap="round"/></g>
<path d="M1036.0 858.0C1041.7 858.0 1059.5 857.2 1070.0 858.0C1080.5 858.8 1089.3 860.3 1099.0 863.0C1108.7 865.7 1119.0 869.5 1128.0 874.0C1137.0 878.5 1145.7 884.7 1153.0 890.0C1160.3 895.3 1166.2 900.2 1172.0 906.0C1177.8 911.8 1183.3 918.0 1188.0 925.0C1192.7 932.0 1197.0 940.2 1200.0 948.0C1203.0 955.8 1205.0 968.0 1206.0 972.0" fill="none" stroke="#ffd8f6" stroke-width="1.6" opacity=".85"/>
<circle cx="436" cy="886" r="70" fill="#fff" opacity=".28" filter="url(#b10)"/>
<circle cx="436" cy="886" r="65" fill="#fff" opacity=".6" filter="url(#b5)"/><circle cx="436" cy="886" r="61" fill="#fff"/>
<circle cx="1273" cy="1102" r="74" fill="#fff" opacity=".6" filter="url(#b5)"/><circle cx="1273" cy="1102" r="70" fill="#fff"/>
</g>
<path d="M161.2 199.8L160.9 236.6L169.3 233L176 247.6L183 244.8L177.4 230.2L187.4 227.8Z" fill="#000" opacity=".35" transform="translate(1 2)" filter="url(#b2)" stroke="#000" stroke-width="4"/>
<path d="M161.2 199.8L160.9 236.6L169.3 233L176 247.6L183 244.8L177.4 230.2L187.4 227.8Z" fill="#fff" stroke="#fff" stroke-width="6.2" stroke-linejoin="round"/><path d="M161.2 199.8L160.9 236.6L169.3 233L176 247.6L183 244.8L177.4 230.2L187.4 227.8Z" fill="#050505"/>
</svg>
<div id="topbar"><div class="abs" style="left:51px;top:9px;width:364px;height:38px;border-radius:19px;background:#303030"></div><svg class="abs" style="left:12px;top:8px" width="40" height="40" viewBox="0 0 40 40"><path fill-rule="evenodd" d="M10.6 9.3C15 7.8 22 7.3 27 8.6C30.6 9.8 30.8 13.6 28 17C24 22 23.5 24.5 20.5 30C18 32.8 13 32.6 10.4 30.8C7.4 28.6 8 24.6 11.4 21.2C14.5 18.2 20 15.2 26.4 12.6C22 11.6 16 12.6 10.9 15.4ZM25.6 17.6C22 18.6 17.5 21.5 16.2 24C15.5 26 17.6 27 19.6 26C22 24.6 24 21 25.6 17.6Z" fill="#fff"/><path d="M28.9 17.8L29 31.8L22.4 31.8C25 27.5 27 22.5 28.9 17.8Z" fill="#fff"/></svg><div class="abs" style="left:58px;top:12px;width:85px;height:32px;border-radius:16px;background:#0ccfe6"></div><svg class="abs" style="left:64px;top:17px" width="22" height="22" viewBox="-11 -11 22 22"><path d="M-5.5 -5L-0.5 5.5L5.5 -5" fill="none" stroke="#0b1e40" stroke-width="1.9"/><circle cx="-6" cy="-5.8" r="2.5" fill="#0ccfe6" stroke="#0b1e40" stroke-width="1.6"/><circle cx="6" cy="-5.8" r="2.5" fill="#0ccfe6" stroke="#0b1e40" stroke-width="1.6"/><circle cx="0" cy="6.2" r="2.5" fill="#0ccfe6" stroke="#0b1e40" stroke-width="1.6"/></svg><div class="t" style="left:89px;top:20.5px;font-size:13.5px;color:#0b1e40;font-weight:bold;height:16px;line-height:16px;letter-spacing:0.1px;">Vector</div><svg class="abs" style="left:152px;top:17px" width="22" height="22" viewBox="-11 -11 22 22"><circle cx="0" cy="0" r="6.3" fill="none" stroke="#cfcfcf" stroke-width="1.5"/><path d="M-0.5 -3.4A3.6 3.6 0 0 1 3.3 -0.4" fill="none" stroke="#cfcfcf" stroke-width="1.5" stroke-linecap="round"/></svg><div class="t" style="left:178px;top:20.5px;font-size:13.5px;color:#d0d0d0;font-weight:normal;height:16px;line-height:16px;-webkit-text-stroke:0.3px;">Pixel</div><svg class="abs" style="left:229px;top:17px" width="22" height="22" viewBox="-11 -11 22 22"><rect x="-7" y="-6.5" width="4.6" height="13" rx="1" fill="none" stroke="#cfcfcf" stroke-width="1.5"/><rect x="0.8" y="-6.5" width="5.4" height="5.4" rx="1" fill="none" stroke="#cfcfcf" stroke-width="1.5"/><path d="M0.5 2.3H6.8M0.5 6H6.8" stroke="#cfcfcf" stroke-width="1.5"/></svg><div class="t" style="left:254px;top:20.5px;font-size:13.5px;color:#d0d0d0;font-weight:normal;height:16px;line-height:16px;-webkit-text-stroke:0.3px;">Layout</div><svg class="abs" style="left:318px;top:17px" width="22" height="22" viewBox="-11 -11 22 22"><path d="M1 -7C1.8 -2.5 3 -1.3 7.5 -0.5C3 0.3 1.8 1.5 1 6C0.2 1.5 -1 0.3 -5.5 -0.5C-1 -1.3 0.2 -2.5 1 -7Z" fill="#d4d4d4"/><path d="M-5 -8C-4.6 -6 -4 -5.4 -2 -5C-4 -4.6 -4.6 -4 -5 -2C-5.4 -4 -6 -4.6 -8 -5C-6 -5.4 -5.4 -6 -5 -8Z" fill="#d4d4d4"/><path d="M-5 3C-4.7 4.6 -4.2 5.1 -2.6 5.4C-4.2 5.7 -4.7 6.2 -5 7.8C-5.3 6.2 -5.8 5.7 -7.4 5.4C-5.8 5.1 -5.3 4.6 -5 3Z" fill="#d4d4d4"/></svg><div class="t" style="left:345px;top:20.5px;font-size:13.5px;color:#d0d0d0;font-weight:normal;height:16px;line-height:16px;-webkit-text-stroke:0.3px;">Canva AI</div><svg class="abs" style="left:424px;top:17px" width="10" height="24"><circle cx="5" cy="5" r="1.9" fill="#e0e0e0"/><circle cx="5" cy="11.5" r="1.9" fill="#e0e0e0"/><circle cx="5" cy="18" r="1.9" fill="#e0e0e0"/></svg><div class="abs" style="left:459px;top:10px;width:90px;height:37px;border-radius:18px;background:#2c2c2c"></div><svg class="abs" style="left:470px;top:17px" width="24" height="24" viewBox="-12 -12 24 24"><circle cx="-2.5" cy="-3" r="5.2" fill="#d8d8d8"/><circle cx="-7" cy="1" r="2.8" fill="#d8d8d8"/><rect x="-3" y="-1.5" width="11.5" height="11.5" rx="1" fill="#2c2c2c" stroke="#e0e0e0" stroke-width="1.3"/><path d="M0 7.5L2.8 0.8L5.6 7.5M1 5.2H4.6" fill="none" stroke="#e0e0e0" stroke-width="1.3"/></svg><div class="abs" style="left:509px;top:15px;width:38px;height:28px;border-radius:10px;background:#1f1f1f;border:1px solid #5a5a5a"></div><svg class="abs" style="left:516px;top:17px" width="24" height="24" viewBox="-12 -12 24 24"><rect x="-8.6" y="-8.6" width="4.6" height="4.6" fill="#f0f0f0"/><rect x="-8.6" y="-2.3" width="4.6" height="4.6" fill="#f0f0f0"/><rect x="-8.6" y="4" width="4.6" height="4.6" fill="#f0f0f0"/><rect x="-2.3" y="-8.6" width="4.6" height="4.6" fill="#f0f0f0"/><rect x="-2.3" y="4" width="4.6" height="4.6" fill="#f0f0f0"/><rect x="4" y="-8.6" width="4.6" height="4.6" fill="#f0f0f0"/><rect x="4" y="-2.3" width="4.6" height="4.6" fill="#f0f0f0"/><rect x="4" y="4" width="4.6" height="4.6" fill="#f0f0f0"/></svg><svg class="abs" style="left:0;top:0" width="1920" height="57"><g transform="translate(1296 29.2)"><rect x="-8" y="-8" width="10.5" height="10.5" fill="#5c5c5c"/><circle cx="2.6" cy="2.6" r="5.6" fill="#5c5c5c"/></g><g transform="translate(1327 29.2)"><rect x="-8" y="-8" width="10.5" height="10.5" fill="#5c5c5c"/><circle cx="2.6" cy="2.6" r="5.2" fill="#363636" stroke="#5c5c5c" stroke-width="1.1" stroke-dasharray="2 1.4"/></g><g transform="translate(1357 29.2)"><rect x="-8" y="-8" width="10.5" height="10.5" fill="none" stroke="#5c5c5c" stroke-width="1.1" stroke-dasharray="2 1.4"/><circle cx="2.6" cy="2.6" r="5.2" fill="none" stroke="#5c5c5c" stroke-width="1.1" stroke-dasharray="2 1.4"/><path d="M-2.6 2.5V2.6A5.2 5.2 0 0 1 2.5 -2.6V2.5Z" fill="#5c5c5c"/></g><g transform="translate(1387 29.2)"><rect x="-8" y="-8" width="10.5" height="10.5" fill="#5c5c5c"/><circle cx="2.6" cy="2.6" r="5.6" fill="#5c5c5c"/><path d="M-2.6 2.5A5.2 5.2 0 0 1 2.5 -2.6V2.5Z" fill="#2a2a2a"/></g><g transform="translate(1417 29.2)"><rect x="-8" y="-8" width="10.5" height="10.5" fill="none" stroke="#5c5c5c" stroke-width="1.2"/><circle cx="2.6" cy="2.6" r="5.6" fill="#5c5c5c"/><rect x="-5.2" y="-5.2" width="7.7" height="7.7" fill="none" stroke="#5c5c5c" stroke-width="1"/><path d="M7.5 0L10.5 2.8L7.5 5.6Z" fill="#5c5c5c"/></g><g transform="translate(1460 29.2)"><rect x="-8" y="-8.5" width="6" height="6" fill="none" stroke="#5c5c5c" stroke-width="1.2"/><rect x="-4.5" y="-4.500" width="6" height="6" fill="none" stroke="#5c5c5c" stroke-width="1.2"/><path d="M2 -0.500H5.500V3.500M3 -8L6.500 -5M6.500 -8L3 -5" fill="none" stroke="#5c5c5c" stroke-width="1.2"/><path d="M-1 3.500H5.500V6L2.500 9L-1 6Z" fill="#5c5c5c" opacity=".8"/></g><g transform="translate(1503 29.2)"><path d="M-1.2 -8.500V7.500H-9.500Z" fill="#5c5c5c"/><path d="M1.200 -8.500V7.500H9.500Z" fill="#5c5c5c" opacity=".5"/></g><g transform="translate(1545 29.2)"><rect x="-7.500" y="-8" width="1.200" height="16" fill="#5c5c5c" opacity=".7"/><rect x="-5.500" y="-4.600" width="13.500" height="3.800" rx="1.200" fill="#5c5c5c"/><rect x="-5.500" y="1" width="8.500" height="3.800" rx="1.200" fill="#5c5c5c"/></g><rect x="1438" y="15" width="1.4" height="27" fill="#1e1e1e"/><rect x="1481" y="15" width="1.4" height="27" fill="#1e1e1e"/><rect x="1524" y="15" width="1.4" height="27" fill="#1e1e1e"/><rect x="1567" y="15" width="1.4" height="27" fill="#1e1e1e"/><rect x="1670" y="15" width="1.4" height="27" fill="#1e1e1e"/></svg><div class="abs" style="left:1574px;top:15px;width:88px;height:27px;border-radius:6px;background:#2a2a2a"></div><svg class="abs" style="left:0;top:0" width="1920" height="57"><g transform="translate(1588 28)"><circle cx="3.6" cy="3.8" r="5.4" fill="#e4e4e4"/><rect x="-7" y="-7" width="11.2" height="11.2" fill="#2a2a2a"/><rect x="-5.6" y="-5.4" width="8.2" height="8" fill="none" stroke="#e4e4e4" stroke-width="1.2"/><rect x="-6.9" y="-6.7" width="2.6" height="2.6" fill="#2a2a2a" stroke="#e4e4e4" stroke-width="1"/><rect x="1.3" y="-6.7" width="2.6" height="2.6" fill="#2a2a2a" stroke="#e4e4e4" stroke-width="1"/><rect x="-6.9" y="1.3" width="2.6" height="2.6" fill="#2a2a2a" stroke="#e4e4e4" stroke-width="1"/><rect x="1.3" y="1.3" width="2.6" height="2.6" fill="#2a2a2a" stroke="#e4e4e4" stroke-width="1"/></g><g transform="translate(1618 28)"><circle cx="2.5" cy="-2.5" r="5.3" fill="#e4e4e4"/><path d="M-6.5 -1V6.5H1" fill="none" stroke="#e4e4e4" stroke-width="1.2"/><rect x="-7.8" y="-2.3" width="2.6" height="2.6" fill="#2a2a2a" stroke="#e4e4e4" stroke-width="1"/><rect x="-7.8" y="5.2" width="2.6" height="2.6" fill="#2a2a2a" stroke="#e4e4e4" stroke-width="1"/><rect x="-0.3" y="5.2" width="2.6" height="2.6" fill="#2a2a2a" stroke="#e4e4e4" stroke-width="1"/></g><g transform="translate(1648.5 28)"><rect x="-6.8" y="-6.8" width="13.6" height="13.6" fill="none" stroke="#e4e4e4" stroke-width="1.2"/><rect x="-8.1" y="-8.1" width="2.6" height="2.6" fill="#2a2a2a" stroke="#e4e4e4" stroke-width="1"/><rect x="5.5" y="-8.1" width="2.6" height="2.6" fill="#2a2a2a" stroke="#e4e4e4" stroke-width="1"/><rect x="-8.1" y="5.5" width="2.6" height="2.6" fill="#2a2a2a" stroke="#e4e4e4" stroke-width="1"/><rect x="5.5" y="5.5" width="2.6" height="2.6" fill="#2a2a2a" stroke="#e4e4e4" stroke-width="1"/><path d="M-4 5V-2.5A7.5 7.5 0 0 1 3.5 5Z" fill="#e4e4e4"/></g></svg><div class="abs" style="left:1677.5px;top:15px;width:29px;height:27.5px;border-radius:7px;background:#1f1f1f;border:1.5px solid #5c5c5c"></div><svg class="abs" style="left:1680px;top:17px" width="24" height="24" viewBox="-12 -12 24 24"><g transform="translate(1.2 0) rotate(45)"><path d="M-3.8 5V-0.6A3.8 3.8 0 0 1 3.8 -0.6V5" fill="none" stroke="#f0f0f0" stroke-width="3.1"/><path d="M-5.6 2.7H-2M2 2.7H5.6" stroke="#1f1f1f" stroke-width="1.1"/></g></svg><svg class="abs" style="left:1709px;top:25px" width="9" height="8"><path d="M2 2.2L4.5 4.9L7 2.2" fill="none" stroke="#e0e0e0" stroke-width="1.7"/></svg><div class="abs" style="left:1742px;top:15px;width:97px;height:27px;border-radius:6px;background:#575757"></div><div class="abs" style="left:1745.8px;top:19.3px;width:4.6px;height:19.3px;border-radius:2px;background:#12d4e8"></div><div class="t" style="left:1762px;top:20.5px;font-size:10.1px;color:#f4f4f4;font-weight:bold;height:16px;line-height:16px;">Export PNG</div><svg class="abs" style="left:1843.5px;top:25px" width="9" height="8"><path d="M2 2.2L4.5 4.9L7 2.2" fill="none" stroke="#e0e0e0" stroke-width="1.7"/></svg><svg class="abs" style="left:1879px;top:17px" width="24" height="24" viewBox="-12 -12 24 24"><circle cx="0" cy="0" r="8.6" fill="#1f2832" stroke="#2c7acc" stroke-width="1.5"/><text x="0" y="4.4" text-anchor="middle" font-family="Liberation Sans, sans-serif" font-weight="bold" font-size="12.5" fill="#fff">?</text></svg><div class="abs" style="left:1909px;top:4.3px;width:7.2px;height:7.2px;border-radius:50%;background:#6a5af0"></div></div><div id="topline"></div>
<div id="ctx"></div><div class="t" style="left:8px;top:69px;font-size:11px;color:#eaeaea;font-weight:normal;height:16px;line-height:16px;-webkit-text-stroke:0.3px;">No Selection</div><svg class="abs" style="left:85px;top:70px" width="15" height="15"><rect x="0.5" y="0.5" width="14" height="14" rx="3.4" fill="#1e6ef2"/><path d="M3.8 7.6L6.4 10.2L11.2 4.6" fill="none" stroke="#fff" stroke-width="1.7" stroke-linecap="round" stroke-linejoin="round"/></svg><div class="t" style="left:105px;top:69px;font-size:11px;color:#eaeaea;font-weight:normal;height:16px;line-height:16px;-webkit-text-stroke:0.3px;letter-spacing:0.5px;">Auto-select:</div><div class="abs" style="left:177px;top:65px;width:28px;height:23px;border-radius:5px;background:#1f1f1f;border:1px solid #555"></div><svg class="abs" style="left:180px;top:65px" width="22" height="22" viewBox="-11 -11 22 22"><g transform="scale(.78) translate(0 1)"><path d="M-5.5 -9.5V7.5L-1.2 3.6L2.2 11L5.4 9.6L2.2 2.4H8Z" fill="none" stroke="#dedede" stroke-width="1.5" stroke-linecap="round" stroke-linejoin="round"/></g></svg><svg class="abs" style="left:210px;top:65px" width="22" height="22" viewBox="-11 -11 22 22"><rect x="-7.5" y="-7.5" width="10" height="10" rx="2" fill="none" stroke="#d8d8d8" stroke-width="1.4"/><circle cx="3.2" cy="3.2" r="4.6" fill="none" stroke="#d8d8d8" stroke-width="1.4"/></svg><svg class="abs" style="left:240px;top:65px" width="22" height="22" viewBox="-11 -11 22 22"><path d="M-7 5V-5A2 2 0 0 1 -5 -7H4" fill="none" stroke="#d8d8d8" stroke-width="1.4"/><rect x="-4" y="-4" width="11.5" height="11.5" rx="2" fill="none" stroke="#d8d8d8" stroke-width="1.4"/></svg><div class="abs" style="left:273px;top:67px;width:1px;height:20px;background:#2a2a2a"></div><div class="btn" style="left:281px;top:67px;width:124px">Document Setup...</div><div class="btn" style="left:421px;top:67px;width:105px">App Settings...</div><div class="abs" style="left:533px;top:67px;width:1px;height:20px;background:#2a2a2a"></div><svg class="abs" style="left:542px;top:65px" width="24" height="24" viewBox="-11 -11 24 24"><rect x="-8" y="-8" width="2.6" height="2.6" fill="none" stroke="#d0d0d0" stroke-width="1"/><rect x="-3" y="-8" width="2.6" height="2.6" fill="none" stroke="#d0d0d0" stroke-width="1"/><rect x="2" y="-8" width="2.6" height="2.6" fill="none" stroke="#d0d0d0" stroke-width="1"/><rect x="7" y="-8" width="2.6" height="2.6" fill="none" stroke="#d0d0d0" stroke-width="1"/><rect x="7" y="-3" width="2.6" height="2.6" fill="none" stroke="#d0d0d0" stroke-width="1"/><rect x="7" y="2" width="2.6" height="2.6" fill="none" stroke="#d0d0d0" stroke-width="1"/><rect x="7" y="7" width="2.6" height="2.6" fill="none" stroke="#d0d0d0" stroke-width="1"/><rect x="-7.5" y="-3" width="10.5" height="10.5" fill="none" stroke="#d0d0d0" stroke-width="1.3" stroke-dasharray="2.2 1.6"/></svg><svg class="abs" style="left:587px;top:65px" width="24" height="24" viewBox="-12 -12 24 24"><path d="M-1.39 -5.45L-1.29 -7.49L1.29 -7.49L1.39 -5.45L2.87 -4.84L4.39 -6.21L6.21 -4.39L4.84 -2.87L5.45 -1.39L7.49 -1.29L7.49 1.29L5.45 1.39L4.84 2.87L6.21 4.39L4.39 6.21L2.87 4.84L1.39 5.45L1.29 7.49L-1.29 7.49L-1.39 5.45L-2.87 4.84L-4.39 6.21L-6.21 4.39L-4.84 2.87L-5.45 1.39L-7.49 1.29L-7.49 -1.29L-5.45 -1.39L-4.84 -2.87L-6.21 -4.39L-4.39 -6.21L-2.87 -4.84ZM2.74 0A2.74 2.74 0 1 0 -2.74 0A2.74 2.74 0 1 0 2.74 0Z" fill="#d0d0d0" fill-rule="evenodd" stroke="#d0d0d0" stroke-width=".6" stroke-linejoin="round"/></svg>
<div id="left"></div><div class="abs" style="left:8px;top:102px;width:33px;height:33px;border-radius:7px;background:#1f1f1f;border:1px solid #4c4c4c"></div><svg class="abs" style="left:0;top:96px" width="48" height="962" viewBox="0 96 48 962"><g transform="translate(24 118)" ><path d="M-5.5 -9.5V7.5L-1.2 3.6L2.2 11L5.4 9.6L2.2 2.4H8Z" fill="none" stroke="#dedede" stroke-width="1.5" stroke-linecap="round" stroke-linejoin="round"/></g><g transform="translate(24 155)" ><rect x="-8" y="-7" width="17" height="17" rx="3" fill="none" stroke="#dedede" stroke-width="1.5" stroke-dasharray="4 2.4"/><rect x="-4.2" y="-3.2" width="9.4" height="9.4" rx="1" fill="#dedede"/><path d="M-10.5 -8.5H-5.5M-8 -11V-6" stroke="#dedede" stroke-width="1.5" fill="none"/></g><g transform="translate(24 192)" ><path d="M-6 -10.5V6L7 -2.2Z" fill="none" stroke="#dedede" stroke-width="1.5" stroke-linecap="round" stroke-linejoin="round"/><path d="M6.5 12.5H12.5V6.5" fill="none" stroke="#c8c8c8" stroke-width="1.4"/></g><g transform="translate(24 227)" ><path d="M-9 10V-10H9" fill="none" stroke="#dedede" stroke-width="1.5" stroke-linecap="round" stroke-linejoin="round"/><path d="M-8 -9L-1 -2M-1 -6.5V-2H-5.5" fill="none" stroke="#dedede" stroke-width="1.5" stroke-linecap="round" stroke-linejoin="round"/><circle cx="3.5" cy="2" r="3" fill="none" stroke="#dedede" stroke-width="1.5" stroke-linecap="round" stroke-linejoin="round"/><path d="M6.5 1.5H9.5M1.5 4.5V9.5" fill="none" stroke="#dedede" stroke-width="1.5" stroke-linecap="round" stroke-linejoin="round"/></g><g transform="translate(24 263)" ><circle cx="0" cy="1" r="9" fill="none" stroke="#dedede" stroke-width="1.5" stroke-dasharray="4.4 2.6"/><circle cx="0" cy="1" r="4.2" fill="#dedede"/><path d="M5.5 -8.5L10 -9.5L9.3 -4.8Z" fill="#dedede"/></g><g transform="translate(24 299)" ><path d="M1.5 -9.5L9.5 -1.5L6.5 1.5L-1.5 -6.5Z" fill="none" stroke="#dedede" stroke-width="1.5" stroke-linecap="round" stroke-linejoin="round"/><path d="M-1 -6L-6.5 -3L-9 8.5L2.8 6.3L6 1" fill="none" stroke="#dedede" stroke-width="1.5" stroke-linecap="round" stroke-linejoin="round"/><path d="M-8.5 8L-2 1.6" fill="none" stroke="#dedede" stroke-width="1.5" stroke-linecap="round" stroke-linejoin="round"/><circle cx="-1" cy="0.6" r="1.5" fill="none" stroke="#dedede" stroke-width="1.5" stroke-linecap="round" stroke-linejoin="round"/></g><g transform="translate(24 335)" ><path d="M-9 9L-7.2 2.8L4.2 -8.6A2.4 2.4 0 0 1 7.6 -8.6L8.6 -7.6A2.4 2.4 0 0 1 8.6 -4.2L-2.8 7.2Z" fill="none" stroke="#dedede" stroke-width="1.5" stroke-linecap="round" stroke-linejoin="round"/><path d="M-7 3L-3 7M2 -6.5L6.5 -2" fill="none" stroke="#dedede" stroke-width="1.5" stroke-linecap="round" stroke-linejoin="round"/><path d="M6.5 12.5H12.5V6.5" fill="none" stroke="#c8c8c8" stroke-width="1.4"/></g><g transform="translate(24 371)" ><path d="M-10 10L10 -10" fill="none" stroke="#dedede" stroke-width="1.5" stroke-linecap="round" stroke-linejoin="round"/><path d="M-9.5 1.5C-5 1.5-4.5 -5 1 -5.5C5 -6 6 -8 9 -8" fill="none" stroke="#dedede" stroke-width="1.5" stroke-linecap="round" stroke-linejoin="round"/><path d="M-9 8C-5 8-4 5 -1 5C4 5 4.5 -1.5 9.5 -1.5" fill="none" stroke="#dedede" stroke-width="1.5" stroke-linecap="round" stroke-linejoin="round"/><path d="M-6 -1.5C-2 -3 1 -3.5 4 -6L3 2C0 4 -3 4.5 -5 5Z" fill="#cfcfcf" opacity=".75"/></g><g transform="translate(24 407)" ><defs><linearGradient id="gtg" x1="0" y1="0" x2="1" y2="1"><stop offset="0" stop-color="#eee"/><stop offset="1" stop-color="#eee" stop-opacity=".15"/></linearGradient></defs><path d="M-9 -2L-2 -9L1.5 -5.5L-5.5 1.5Z" fill="#d8d8d8"/><path d="M-1 9L8.5 -0.5L10.5 5L4.5 11Z" fill="url(#gtg)"/><path d="M-7 8L7 -7" fill="none" stroke="#dedede" stroke-width="1.5" stroke-linecap="round" stroke-linejoin="round"/><circle cx="-8" cy="9" r="2.2" fill="#363636" stroke="#dedede" stroke-width="1.4"/><circle cx="8" cy="-8" r="2.2" fill="#363636" stroke="#dedede" stroke-width="1.4"/><path d="M6.5 12.5H12.5V6.5" fill="none" stroke="#c8c8c8" stroke-width="1.4"/></g><g transform="translate(24 443)" ><rect x="-9" y="-9.5" width="16.5" height="16.5" rx="1" fill="#242829" stroke="#dedede" stroke-width="1.5"/><path d="M6.5 12.5H12.5V6.5" fill="none" stroke="#c8c8c8" stroke-width="1.4"/></g><g transform="translate(24 479)" ><circle cx="-1.5" cy="-1" r="8" fill="none" stroke="#dedede" stroke-width="1.5" stroke-dasharray="3.4 2.4"/><rect x="-2" y="-1" width="11.5" height="11.5" fill="none" stroke="#dedede" stroke-width="1.5" stroke-dasharray="4 2.4"/><path d="M-2 -1H6.4A8 8 0 0 1 -2 7Z" fill="#dedede"/><path d="M6.5 12.5H12.5V6.5" fill="none" stroke="#c8c8c8" stroke-width="1.4"/></g><g transform="translate(24 515)" ><rect x="-10" y="-10" width="3" height="3" fill="#dedede"/><rect x="-2.5" y="-10" width="3" height="3" fill="#dedede"/><rect x="5" y="-10" width="3" height="3" fill="#dedede"/><rect x="-10" y="-2" width="3" height="3" fill="#dedede"/><rect x="5" y="-2" width="3" height="3" fill="#dedede"/><rect x="-10" y="6" width="3" height="3" fill="#dedede"/><rect x="-2.5" y="6" width="3" height="3" fill="#dedede"/><rect x="5" y="6" width="3" height="3" fill="#dedede"/><path d="M-6 -7H5V-4M-6 -7V-4M-0.5 -7V6M-3 6H2" fill="none" stroke="#dedede" stroke-width="2"/><path d="M6.5 12.5H12.5V6.5" fill="none" stroke="#c8c8c8" stroke-width="1.4"/></g><g transform="translate(24 551)" ><rect x="-10" y="-8" width="20" height="16" rx="2.2" fill="none" stroke="#dedede" stroke-width="1.5" stroke-linecap="round" stroke-linejoin="round"/><path d="M-9.5 4L-4 -1.5L0.5 2.5L3.5 0L9.5 4.5" fill="none" stroke="#dedede" stroke-width="1.5" stroke-linecap="round" stroke-linejoin="round"/><circle cx="4" cy="-3.5" r="1.6" fill="#dedede"/></g><g transform="translate(24 587)" ><path d="M-10 -6H-1M-5.5 -10.5V-1.5" stroke="#dedede" stroke-width="1.8" fill="none"/><path d="M1 6H10M5.5 1.5V10.5" stroke="#dedede" stroke-width="1.8" fill="none"/><path d="M-6 7L6 -7" fill="none" stroke="#dedede" stroke-width="1.5" stroke-linecap="round" stroke-linejoin="round"/><circle cx="-7.2" cy="8.2" r="2" fill="none" stroke="#dedede" stroke-width="1.5" stroke-linecap="round" stroke-linejoin="round"/><circle cx="7.2" cy="-8.2" r="2" fill="none" stroke="#dedede" stroke-width="1.5" stroke-linecap="round" stroke-linejoin="round"/></g><g transform="translate(24 623)" ><path d="M-10 4L4 -10L10 -4L-4 10Z" fill="none" stroke="#dedede" stroke-width="1.5" stroke-linecap="round" stroke-linejoin="round"/><path d="M-5.5 1.5L-3.5 3.5M-2.5 -1.5L-0.5 0.5M0.5 -4.5L2.5 -2.5M3.5 -7.5L5 -6" fill="none" stroke="#dedede" stroke-width="1.5" stroke-linecap="round" stroke-linejoin="round"/><path d="M6.5 12.5H12.5V6.5" fill="none" stroke="#c8c8c8" stroke-width="1.4"/></g><g transform="translate(24 660)" ><path d="M-9.5 9.5L-9 6L1 -4L4 -1L-6 9Z" fill="none" stroke="#dedede" stroke-width="1.5" stroke-linecap="round" stroke-linejoin="round"/><path d="M-0.5 -6.5L6.5 0.5" fill="none" stroke="#dedede" stroke-width="1.5" stroke-linecap="round" stroke-linejoin="round"/><path d="M2 -4.5L5 -8.5A2.6 2.6 0 0 1 8.8 -4.8L4.8 -1.8" fill="none" stroke="#dedede" stroke-width="1.5" stroke-linecap="round" stroke-linejoin="round"/><path d="M6.5 12.5H12.5V6.5" fill="none" stroke="#c8c8c8" stroke-width="1.4"/></g><g transform="translate(24 704)" ><path d="M-5.5 1V-6.2A1.6 1.6 0 0 1 -2.3 -6.2V-1M-2.3 -6.5V-8.6A1.6 1.6 0 0 1 0.9 -8.6V-1M0.9 -7.6A1.6 1.6 0 0 1 4.1 -7.6V-0.5M4.1 -5.4A1.6 1.6 0 0 1 7.3 -5.4V3C7.3 7.5 4.5 10 0.8 10C-2.5 10 -4 8.5 -5.6 6L-9.4 0.2A1.7 1.7 0 0 1 -6.6 -1.6L-5.5 0" fill="none" stroke="#dedede" stroke-width="1.5" stroke-linecap="round" stroke-linejoin="round"/></g><g transform="translate(24 739)" ><circle cx="3" cy="-3" r="7" fill="none" stroke="#dedede" stroke-width="1.5" stroke-linecap="round" stroke-linejoin="round"/><path d="M-2.2 2.2L-9.5 9.5" stroke="#dedede" stroke-width="4" stroke-linecap="round"/><path d="M-2.4 2.4L-9 9" stroke="#363636" stroke-width="1.4" stroke-linecap="round"/><path d="M0 -6.5A4.5 4.5 0 0 1 4 -7.6" fill="none" stroke="#dedede" stroke-width="1.5" stroke-linecap="round" stroke-linejoin="round"/></g><rect x="4" y="680" width="40" height="1" fill="#1e1e1e"/><rect x="5.5" y="761" width="36.5" height="15.5" rx="4" fill="#505050"/><circle cx="17" cy="768.8" r="1.7" fill="#eee"/><circle cx="24" cy="768.8" r="1.7" fill="#eee"/><circle cx="31" cy="768.8" r="1.7" fill="#eee"/><circle cx="24.3" cy="794" r="11.5" fill="none" stroke="#fff" stroke-width="4.2"/><circle cx="24.5" cy="809" r="14.5" fill="#e120a5" stroke="#2a2a2a" stroke-width="1"/><path d="M17.5 826Q24.5 831 31.5 826" fill="none" stroke="#bbb" stroke-width="1.2"/><path d="M16.5 824L17 827.5L20 826.5M32.5 824L32 827.5L29 826.5" fill="none" stroke="#bbb" stroke-width="1.1"/></svg>
<div id="status"></div><svg class="abs" style="left:0;top:1058px" width="1656" height="22" viewBox="0 1058 1656 22"><path d="M21.5 1063.5L13.5 1069L21.5 1074.5ZM12 1063.5V1074.5" fill="#5a5a5a" stroke="#5a5a5a" stroke-width="1.3"/><path d="M39.5 1063.5L31.5 1069L39.5 1074.5Z" fill="#5a5a5a"/><rect x="44.5" y="1059.5" width="99" height="19" rx="3" fill="#222"/><path d="M146 1063.5L155 1069L146 1074.5Z" fill="#d8d8d8"/><path d="M164 1063.5L172 1069L164 1074.5ZM173.5 1063.5V1074.5" fill="#5a5a5a" stroke="#5a5a5a" stroke-width="1.3"/><rect x="183" y="1063.5" width="10.5" height="11.5" rx="1.2" fill="none" stroke="#5a5a5a" stroke-width="1.2"/><rect x="185.5" y="1066" width="5.5" height="6.5" fill="#5a5a5a"/><rect x="221.5" y="1063" width="8.5" height="10" rx="1.2" fill="none" stroke="#bdbdbd" stroke-width="1.2"/><path d="M224 1075.5H232.5V1066" fill="none" stroke="#bdbdbd" stroke-width="1.2"/><rect x="242" y="1063" width="10.5" height="12" rx="1.2" fill="none" stroke="#bdbdbd" stroke-width="1.2"/><path d="M244.5 1066H250M244.5 1068.5H250M244.5 1071H250M244.5 1073H250" stroke="#bdbdbd" stroke-width="1"/><path d="M533.5 1071L537 1067.3L540.5 1071" fill="none" stroke="#e4e4e4" stroke-width="1.6"/></svg><div class="t" style="left:82px;top:1060px;font-size:10.5px;color:#f0f0f0;font-weight:bold;height:16px;line-height:16px;">1 of 1</div><div class="t" style="left:279px;top:1061px;font-size:11px;color:#c4c4c4;font-weight:normal;height:16px;line-height:16px;-webkit-text-stroke:0.3px;"><b style="color:#f4f4f4;-webkit-text-stroke:0">Drag</b> to marquee select. <b style="color:#f4f4f4;-webkit-text-stroke:0">Click</b> an object to select it.</div><div class="t" style="left:545px;top:1061px;font-size:11px;color:#c4c4c4;font-weight:normal;height:16px;line-height:16px;-webkit-text-stroke:0.3px;">during marquee select to toggle intersection behaviour.</div>
<div id="right"><div id="rin"><div class="tabbar" style="top:0px"><div class="grip"></div><div class="tab on" style="left:18px">Colour</div><div class="tab" style="left:68px">Swatches</div><div class="tab" style="left:127px">Stroke</div><div class="tab" style="left:171px">Appearance</div><div class="dd"><svg width="14" height="13" style="position:absolute;left:0;top:0"><path d="M3 3.6L7 9.6L11 3.6" fill="none" stroke="#eee" stroke-width="1.5"/></svg></div></div><div class="abs" style="left:59px;top:53.599999999999994px;width:146px;height:146px;border-radius:50%;background:conic-gradient(from 90deg,#ff0000,#ffff00 16.67%,#00ff00 33.33%,#00ffff 50%,#0000ff 66.67%,#ff00ff 83.33%,#ff0000);-webkit-mask:radial-gradient(circle,transparent 57.6px,#000 58.4px,#000 72.6px,transparent 73.4px);mask:radial-gradient(circle,transparent 57.6px,#000 58.4px,#000 72.6px,transparent 73.4px)"></div><svg class="abs" style="left:-2px;top:0" width="265" height="984" viewBox="1655 96 265 984"><defs><linearGradient id="twh" gradientUnits="userSpaceOnUse" x1="1800" y1="279.5" x2="1783.5" y2="194"><stop offset="0" stop-color="#fff"/><stop offset="1" stop-color="#fff" stop-opacity="0"/></linearGradient><linearGradient id="tbk" gradientUnits="userSpaceOnUse" x1="1734.2" y1="203.7" x2="1816.4" y2="232"><stop offset="0" stop-color="#000"/><stop offset=".45" stop-color="#000" stop-opacity=".82"/><stop offset=".8" stop-color="#000" stop-opacity=".4"/><stop offset="1" stop-color="#000" stop-opacity="0"/></linearGradient><pattern id="chk" width="8" height="8" patternUnits="userSpaceOnUse"><rect width="8" height="8" fill="#fff"/><rect width="4" height="4" fill="#bbb"/><rect x="4" y="4" width="4" height="4" fill="#bbb"/></pattern><linearGradient id="opg" x1="0" x2="1" y1="0" y2="0"><stop offset="0" stop-color="#3a3a3a" stop-opacity="0"/><stop offset=".85" stop-color="#3a3a3a" stop-opacity=".92"/><stop offset="1" stop-color="#3a3a3a" stop-opacity="1"/></linearGradient><pattern id="chk2" width="4" height="4" patternUnits="userSpaceOnUse"><rect width="4" height="4" fill="#444"/><rect width="2" height="2" fill="#eee"/><rect x="2" y="2" width="2" height="2" fill="#eee"/></pattern></defs><circle cx="1678" cy="145.5" r="9.6" fill="none" stroke="#fff" stroke-width="3.6"/><circle cx="1689.5" cy="155.5" r="13.2" fill="#e120a5" stroke="#333" stroke-width="1"/><circle cx="1669.6" cy="165.2" r="5.4" fill="#f2f2f2"/><path d="M1666 168.4L1673.2 162" stroke="#e02020" stroke-width="1.6"/><path d="M1694 133Q1702 134.5 1703.5 142" fill="none" stroke="#8a8a8a" stroke-width="1.1"/><path d="M1696.5 130.8L1693.6 133L1696.8 135.4M1701 140L1703.6 142.6L1705.6 139.6" fill="none" stroke="#8a8a8a" stroke-width="1.1"/><g transform="translate(1721 141) scale(1.05)"><path d="M-9.5 9.5L-9 6L1 -4L4 -1L-6 9Z" fill="none" stroke="#dedede" stroke-width="1.5" stroke-linecap="round" stroke-linejoin="round"/><path d="M-0.5 -6.5L6.5 0.5" fill="none" stroke="#dedede" stroke-width="1.5" stroke-linecap="round" stroke-linejoin="round"/><path d="M2 -4.5L5 -8.5A2.6 2.6 0 0 1 8.8 -4.8L4.8 -1.8" fill="none" stroke="#dedede" stroke-width="1.5" stroke-linecap="round" stroke-linejoin="round"/></g><circle cx="1739.3" cy="140.5" r="7.2" fill="#000"/><rect x="1877" y="150.2" width="17.3" height="17.2" fill="#000000"/><rect x="1895" y="150.2" width="17.3" height="17.2" fill="#ffffff"/><rect x="1877" y="168.1" width="17.3" height="17.2" fill="#f8f8f8"/><rect x="1895" y="168.1" width="17.3" height="17.2" fill="#e324a8"/><rect x="1877" y="186.0" width="17.3" height="17.2" fill="#ff480a"/><rect x="1895" y="186.0" width="17.3" height="17.2" fill="#ffc400"/><rect x="1877" y="203.89999999999998" width="17.3" height="17.2" fill="#ffb62e"/><rect x="1895" y="203.89999999999998" width="17.3" height="17.2" fill="#f00a14"/><rect x="1877" y="221.79999999999998" width="17.3" height="17.2" fill="#a0f832"/><rect x="1895" y="221.79999999999998" width="17.3" height="17.2" fill="#f0d818"/><rect x="1877" y="239.7" width="17.3" height="17.2" fill="#d8fc90"/><rect x="1895" y="239.7" width="17.3" height="17.2" fill="#eef8ea"/><path d="M1832.8 184.5L1734.2 203.7L1800 279.5Z" fill="#f410a8"/><path d="M1832.8 184.5L1734.2 203.7L1800 279.5Z" fill="url(#twh)" stroke="url(#twh)" stroke-width=".9"/><path d="M1832.8 184.5L1734.2 203.7L1800 279.5Z" fill="url(#tbk)" stroke="url(#tbk)" stroke-width=".9"/><circle cx="1838.2" cy="178.8" r="5.8" fill="#e81fa6" stroke="#fff" stroke-width="1.5"/><circle cx="1816.6" cy="198" r="5.3" fill="#e120a5" stroke="#fff" stroke-width="1.5"/><circle cx="1672.7" cy="321.6" r="6" fill="#e81fb8"/><rect x="1685" y="317" width="158" height="9" rx="4.5" fill="url(#chk2)"/><rect x="1685" y="317" width="158" height="9" rx="4.5" fill="url(#opg)"/><rect x="1685" y="317" width="30" height="9" rx="4.5" fill="#fff" opacity=".5"/><circle cx="1838.6" cy="321.3" r="4.6" fill="#1a1a1a" stroke="#fff" stroke-width="1.7"/><rect x="1852.5" y="312" width="43.5" height="19" rx="3" fill="#2a2a2a"/><rect x="1897.5" y="312" width="15" height="19" rx="3" fill="#2a2a2a"/><path d="M1901.8 319.9L1905 323.3L1908.2 319.9" fill="none" stroke="#e8e8e8" stroke-width="1.5"/><rect x="1865" y="286.5" width="49" height="16" rx="3" fill="#2a2a2a"/></svg><div class="t" style="left:8px;top:156px;font-size:11px;color:#e6e6e6;font-weight:normal;height:16px;line-height:16px;-webkit-text-stroke:0.3px;">H: 319</div><div class="t" style="left:8px;top:169px;font-size:11px;color:#e6e6e6;font-weight:normal;height:16px;line-height:16px;-webkit-text-stroke:0.3px;">S: 76</div><div class="t" style="left:8px;top:182px;font-size:11px;color:#e6e6e6;font-weight:normal;height:16px;line-height:16px;-webkit-text-stroke:0.3px;">L: 50</div><div class="t" style="left:8px;top:200px;font-size:11px;color:#e6e6e6;font-weight:normal;height:16px;line-height:16px;-webkit-text-stroke:0.3px;">Opacity</div><div class="t" style="left:195px;top:190.5px;font-size:11px;color:#e6e6e6;font-weight:normal;height:16px;line-height:16px;-webkit-text-stroke:0.3px;">#:</div><div class="t" style="left:209.70000000000005px;top:190.5px;font-size:11px;color:#f4f4f4;font-weight:normal;height:16px;line-height:16px;-webkit-text-stroke:0.3px;letter-spacing:-0.5px;">E120A5</div><div class="t" style="left:197px;top:217.5px;font-size:11px;color:#f4f4f4;font-weight:normal;height:16px;line-height:16px;-webkit-text-stroke:0.3px;">100 %</div><div class="abs" style="left:0;top:240px;width:263px;height:2px;background:#1e1e1e"></div><div class="tabbar" style="top:242px"><div class="grip"></div><div class="tab on" style="left:18px">Layers</div><div class="tab" style="left:68px">Path Brushes</div><div class="tab" style="left:144px">Quick FX</div><div class="tab" style="left:200px">Styles</div><div class="dd"><svg width="14" height="13" style="position:absolute;left:0;top:0"><path d="M3 3.6L7 9.6L11 3.6" fill="none" stroke="#eee" stroke-width="1.5"/></svg></div></div><div class="t" style="left:4px;top:279px;font-size:11px;color:#f0f0f0;font-weight:normal;height:16px;line-height:16px;-webkit-text-stroke:0.3px;">Opacity:</div><div class="t" style="left:50px;top:279px;font-size:11px;color:#8a8a8a;font-weight:normal;height:16px;line-height:16px;-webkit-text-stroke:0.3px;">100 %</div><div class="t" style="left:111px;top:279px;font-size:11px;color:#8a8a8a;font-weight:normal;height:16px;line-height:16px;-webkit-text-stroke:0.3px;">Normal</div><div class="abs" style="left:0;top:302.4px;width:263px;height:405.6px;background:#2b2b2b;overflow:hidden"><div class="row" style="top:1.6000000000000227px"><div class="bg" style="left:0;top:-1.6px;height:37.6px;width:263px;background:#1c4b95"></div><div class="abs" style="left:229px;top:0;width:2px;height:36px;background:#173e7e"></div><div class="nm" style="left:63px;color:#fff">Artboard1</div></div><div class="row" style="top:38.60000000000002px"><div class="bg" style="left:9px;width:220px"></div><div class="tag" style="background:#d274f2"></div><div class="nm" style="left:72px;color:#f2f2f2">Face (makeup)</div></div><div class="row" style="top:75.60000000000002px"><div class="bg" style="left:9px;width:220px"></div><div class="tag" style="background:#42d868"></div><div class="nm" style="left:72px;color:#f2f2f2">Stars</div></div><div class="row" style="top:112.60000000000002px"><div class="bg" style="left:9px;width:220px"></div><div class="tag" style="background:#ffb325"></div><div class="nm" style="left:72px;color:#f2f2f2">Flower head piece (front)</div></div><div class="row" style="top:149.60000000000002px"><div class="bg" style="left:9px;width:220px"></div><div class="tag" style="background:#ffb325"></div><div class="nm" style="left:72px;color:#f2f2f2">Flower cloth (front)</div></div><div class="row" style="top:186.60000000000002px"><div class="bg" style="left:9px;width:220px"></div><div class="tag" style="background:#1f9df7"></div><div class="nm" style="left:72px;color:#f2f2f2">Portrait</div></div><div class="row" style="top:223.60000000000002px"><div class="bg" style="left:17px;width:212px"></div><div class="tag" style="background:#1f9df7"></div><div class="nm" style="left:81px;color:#707070">Pixel</div></div><div class="row" style="top:260.6px"><div class="bg" style="left:17px;width:212px"></div><div class="tag" style="background:#1f9df7"></div><div class="nm" style="left:81px;color:#f2f2f2">Colour Balance Adjustmen</div></div><div class="row" style="top:297.6px"><div class="bg" style="left:17px;width:212px"></div><div class="tag" style="background:#1f9df7"></div><div class="nm" style="left:81px;color:#f2f2f2">Colour Balance Adjustmen</div></div><div class="row" style="top:334.6px"><div class="bg" style="left:17px;width:212px"></div><div class="tag" style="background:#1f9df7"></div><div class="nm" style="left:81px;color:#f2f2f2">Curves Adjustment</div></div><div class="row" style="top:371.6px"><div class="bg" style="left:17px;width:212px"></div><div class="tag" style="background:#1f9df7"></div><div class="nm" style="left:81px;color:#707070">Black-and-White Portrai...</div></div><svg class="abs" style="left:0;top:0.6px" width="263" height="405" viewBox="1657 399 263 405"><defs><radialGradient id="lfl" cx=".4" cy=".4" r=".7"><stop offset="0" stop-color="#ffa040"/><stop offset=".5" stop-color="#ff5a90"/><stop offset="1" stop-color="#ff30a0"/></radialGradient><linearGradient id="lab" x1="0" y1="0" x2="0" y2="1"><stop offset="0" stop-color="#ff0a78"/><stop offset=".45" stop-color="#d030e0"/><stop offset=".55" stop-color="#40a8f8"/><stop offset=".68" stop-color="#f8fce0"/><stop offset=".8" stop-color="#a0f030"/><stop offset="1" stop-color="#ffc800"/></linearGradient></defs><path d="M1659.5 408H1669.5M1659.5 412.5H1669.5M1662.2 405.5V415M1666.8 405.5V415" stroke="#9fb6dc" stroke-width="1" fill="none"/><path d="M1661.3 426.0L1664.3 429.2L1667.3 426.0" fill="none" stroke="#e8eefc" stroke-width="1.5"/><rect x="1673.5" y="403" width="36" height="30.5" fill="url(#lab)"/><circle cx="1692" cy="413" r="5.5" fill="#101014"/><circle cx="1687" cy="410" r="3.4" fill="#ff70a0"/><circle cx="1696.5" cy="408.5" r="2.4" fill="#ffa040"/><path d="M1680 433.5Q1683 420 1692 419Q1702 421 1704 433.5Z" fill="#ff4aa0"/><path d="M1683 433.5Q1686 424 1691 423L1693 433.5Z" fill="#ffa040"/><circle cx="1681" cy="413.5" r="2.3" fill="#fff"/><circle cx="1703" cy="409" r="1.6" fill="#fff"/><circle cx="1700.500" cy="414" r="1.1" fill="#fff"/><circle cx="1684.5" cy="426.5" r="1.5" fill="#fff"/><circle cx="1704.5" cy="423.500" r="1.2" fill="#fff"/><g opacity="1"><path d="M1898.3 417.5Q1903 411.5 1907.7 417.5Q1903 423.5 1898.3 417.5Z" fill="#fff"/><circle cx="1903" cy="417.5" r="1.7" fill="rgba(0,0,0,.6)"/></g><path d="M1671.0 452.3L1674.3999999999999 455.5L1671.0 458.7" fill="none" stroke="#f0f0f0" stroke-width="1.6"/><path d="M1671.0 489.3L1674.3999999999999 492.5L1671.0 495.7" fill="none" stroke="#f0f0f0" stroke-width="1.6"/><path d="M1671.0 526.3L1674.3999999999999 529.5L1671.0 532.7" fill="none" stroke="#f0f0f0" stroke-width="1.6"/><path d="M1671.0 563.3L1674.3999999999999 566.5L1671.0 569.7" fill="none" stroke="#f0f0f0" stroke-width="1.6"/><path d="M1669.3999999999999 601.9L1672.6 605.3000000000001L1675.8 601.9" fill="none" stroke="#f0f0f0" stroke-width="1.6"/><rect x="1681" y="437" width="38" height="36" fill="#2b2b2b"/><rect x="1681" y="474" width="38" height="36" fill="#2b2b2b"/><circle cx="1705.500" cy="450" r="3.2" fill="#e01818" opacity=".8"/><circle cx="1700" cy="460" r="2.4" fill="#c01020" opacity=".6"/><circle cx="1689.5" cy="460" r="2.8" fill="#ffb010"/><circle cx="1715" cy="457" r="2.4" fill="#d010e0"/><circle cx="1685.4" cy="480.5" r="3.2" fill="#fff"/><circle cx="1693.5" cy="477.5" r="1.2" fill="#fff"/><circle cx="1714" cy="477.5" r="2.2" fill="#fff"/><circle cx="1710.5" cy="482" r="1.3" fill="#fff"/><circle cx="1688.5" cy="492" r="1.8" fill="#fff"/><circle cx="1716" cy="490.5" r="1.2" fill="#fff"/><circle cx="1710" cy="497.5" r="2.1" fill="#fff"/><circle cx="1690.5" cy="506.5" r="1.7" fill="#fff"/><circle cx="1703.5" cy="506" r="1.1" fill="#fff"/><g transform="translate(1700 529)"><circle cx="-8" cy="-6" r="9" fill="url(#lfl)"/><circle cx="6" cy="-8" r="9" fill="url(#lfl)"/><circle cx="9" cy="4" r="9" fill="url(#lfl)"/><circle cx="-3" cy="8" r="10" fill="url(#lfl)"/><circle cx="-10" cy="4" r="8" fill="url(#lfl)"/><circle cx="0" cy="0" r="11" fill="url(#lfl)"/><circle cx="-5" cy="-7" r="5" fill="#ff9a38" opacity=".9"/><circle cx="7" cy="2" r="6" fill="#ff40b0" opacity=".7"/></g><g transform="translate(1700 566)"><circle cx="-8" cy="-6" r="9" fill="url(#lfl)"/><circle cx="6" cy="-8" r="9" fill="url(#lfl)"/><circle cx="9" cy="4" r="9" fill="url(#lfl)"/><circle cx="-3" cy="8" r="10" fill="url(#lfl)"/><circle cx="-10" cy="4" r="8" fill="url(#lfl)"/><circle cx="0" cy="0" r="11" fill="url(#lfl)"/><circle cx="-5" cy="-7" r="5" fill="#ff9a38" opacity=".9"/><circle cx="7" cy="2" r="6" fill="#ff40b0" opacity=".7"/></g><g transform="translate(1700 603)"><path d="M-4 -11L3 -12L5 -2L-2 0Z" fill="#101014"/><circle cx="-1" cy="-12" r="2.2" fill="#e01060"/><circle cx="0" cy="-1" r="2.2" fill="#ffb010"/><path d="M-9 10V4Q-4 1 0 3Q5 1 9 4V10Z" fill="#8fa6c8"/><path d="M-8 6H8M-7 8.500H7" stroke="#e8eef8" stroke-width="1.2"/></g><g opacity="0.55"><path d="M1898.3 455Q1903 449 1907.7 455Q1903 461 1898.3 455Z" fill="#fff"/><circle cx="1903" cy="455" r="1.7" fill="rgba(0,0,0,.6)"/></g><g opacity="0.35"><path d="M1898.3 492Q1903 486 1907.7 492Q1903 498 1898.3 492Z" fill="#fff"/><circle cx="1903" cy="492" r="1.7" fill="rgba(0,0,0,.6)"/></g><g opacity="0.35"><path d="M1898.3 529Q1903 523 1907.7 529Q1903 535 1898.3 529Z" fill="#fff"/><circle cx="1903" cy="529" r="1.7" fill="rgba(0,0,0,.6)"/></g><g opacity="0.35"><path d="M1898.3 566Q1903 560 1907.7 566Q1903 572 1898.3 566Z" fill="#fff"/><circle cx="1903" cy="566" r="1.7" fill="rgba(0,0,0,.6)"/></g><g opacity="1"><path d="M1898.3 603Q1903 597 1907.7 603Q1903 609 1898.3 603Z" fill="#fff"/><circle cx="1903" cy="603" r="1.7" fill="rgba(0,0,0,.6)"/></g><g opacity="1"><path d="M1898.3 640Q1903 634 1907.7 640Q1903 646 1898.3 640Z" fill="#fff"/><circle cx="1903" cy="640" r="1.7" fill="rgba(0,0,0,.6)"/></g><g opacity="1"><path d="M1898.3 677Q1903 671 1907.7 677Q1903 683 1898.3 677Z" fill="#fff"/><circle cx="1903" cy="677" r="1.7" fill="rgba(0,0,0,.6)"/></g><g opacity="1"><path d="M1898.3 714Q1903 708 1907.7 714Q1903 720 1898.3 714Z" fill="#fff"/><circle cx="1903" cy="714" r="1.7" fill="rgba(0,0,0,.6)"/></g><g opacity="1"><path d="M1898.3 751Q1903 745 1907.7 751Q1903 757 1898.3 751Z" fill="#fff"/><circle cx="1903" cy="751" r="1.7" fill="rgba(0,0,0,.6)"/></g><g opacity="1"><path d="M1898.3 788Q1903 782 1907.7 788Q1903 794 1898.3 788Z" fill="#fff"/><circle cx="1903" cy="788" r="1.7" fill="rgba(0,0,0,.6)"/></g><rect x="1666" y="622" width="8" height="182" fill="#323232"/><rect x="1691" y="622" width="36" height="36" fill="#2b2b2b"/><rect x="1678.5" y="635.5" width="1.6" height="1.6" fill="#c8c8c8"/><rect x="1681.7" y="635.5" width="1.6" height="1.6" fill="#c8c8c8"/><rect x="1684.9" y="635.5" width="1.6" height="1.6" fill="#c8c8c8"/><rect x="1680.1" y="637.1" width="1.6" height="1.6" fill="#c8c8c8"/><rect x="1683.3" y="637.1" width="1.6" height="1.6" fill="#c8c8c8"/><rect x="1678.5" y="638.7" width="1.6" height="1.6" fill="#c8c8c8"/><rect x="1681.7" y="638.7" width="1.6" height="1.6" fill="#c8c8c8"/><rect x="1684.9" y="638.7" width="1.6" height="1.6" fill="#c8c8c8"/><rect x="1680.1" y="640.3" width="1.6" height="1.6" fill="#c8c8c8"/><rect x="1683.3" y="640.3" width="1.6" height="1.6" fill="#c8c8c8"/><rect x="1678.5" y="641.9" width="1.6" height="1.6" fill="#c8c8c8"/><rect x="1681.7" y="641.9" width="1.6" height="1.6" fill="#c8c8c8"/><rect x="1684.9" y="641.9" width="1.6" height="1.6" fill="#c8c8c8"/><rect x="1680.1" y="643.5" width="1.6" height="1.6" fill="#c8c8c8"/><rect x="1683.3" y="643.5" width="1.6" height="1.6" fill="#c8c8c8"/><rect x="1855.5" y="635.5" width="9.5" height="9.5" rx="1" fill="none" stroke="#b4b4b4" stroke-width="1.1"/><path d="M1858 638.500H1862.500L1858.500 642.500H1862.800" stroke="#b4b4b4" stroke-width="1" fill="none"/><circle cx="1682" cy="677" r="3.3" fill="none" stroke="#cfcfcf" stroke-width="1"/><path d="M1682 673.7A3.3 3.3 0 0 1 1682 680.3Z" fill="#cfcfcf" transform="rotate(45 1682 677)"/><circle cx="1682" cy="714" r="3.3" fill="none" stroke="#cfcfcf" stroke-width="1"/><path d="M1682 710.7A3.3 3.3 0 0 1 1682 717.3Z" fill="#cfcfcf" transform="rotate(45 1682 714)"/><circle cx="1682" cy="751" r="3.3" fill="none" stroke="#cfcfcf" stroke-width="1"/><path d="M1682 747.7A3.3 3.3 0 0 1 1682 754.3Z" fill="#cfcfcf" transform="rotate(45 1682 751)"/><rect x="1691" y="659" width="36" height="36" fill="#2f2f2f"/><circle cx="1702" cy="670" r="2.9" fill="#f0f0f0"/><path d="M1706.500 670H1720" stroke="#dcdcdc" stroke-width="1.2"/><circle cx="1711" cy="670" r="1.4" fill="#fff"/><circle cx="1702" cy="677" r="2.9" fill="#f0f0f0"/><path d="M1706.500 677H1720" stroke="#dcdcdc" stroke-width="1.2"/><circle cx="1717" cy="677" r="1.4" fill="#fff"/><circle cx="1702" cy="684" r="2.9" fill="#f0f0f0"/><path d="M1706.500 684H1720" stroke="#dcdcdc" stroke-width="1.2"/><circle cx="1712" cy="684" r="1.4" fill="#fff"/><rect x="1691" y="696" width="36" height="36" fill="#2f2f2f"/><circle cx="1702" cy="707" r="2.9" fill="#f0f0f0"/><path d="M1706.500 707H1720" stroke="#dcdcdc" stroke-width="1.2"/><circle cx="1711" cy="707" r="1.4" fill="#fff"/><circle cx="1702" cy="714" r="2.9" fill="#f0f0f0"/><path d="M1706.500 714H1720" stroke="#dcdcdc" stroke-width="1.2"/><circle cx="1717" cy="714" r="1.4" fill="#fff"/><circle cx="1702" cy="721" r="2.9" fill="#f0f0f0"/><path d="M1706.500 721H1720" stroke="#dcdcdc" stroke-width="1.2"/><circle cx="1712" cy="721" r="1.4" fill="#fff"/><rect x="1691" y="733" width="36" height="36" fill="#2f2f2f"/><rect x="1699.500" y="741.500" width="19" height="19" rx="1.500" fill="none" stroke="#e0e0e0" stroke-width="1.2"/><path d="M1702.500 756.500C1705 756.500 1705.500 751 1708 751C1710 751 1710 753 1711.500 753C1713.500 753 1714.500 746.500 1716.500 745.500" fill="none" stroke="#e0e0e0" stroke-width="1.2"/><rect x="1678.500" y="775" width="7.500" height="9.500" rx="1" fill="none" stroke="#cfcfcf" stroke-width="1"/><rect x="1680.500" y="777" width="3.500" height="3" fill="#cfcfcf"/><path d="M1680.500 782H1684" stroke="#cfcfcf" stroke-width="1"/><path d="M1679.1 795.4L1682.3 798.8000000000001L1685.5 795.4" fill="none" stroke="#f0f0f0" stroke-width="1.6"/><rect x="1691" y="770" width="36" height="34" fill="#2f2f2f"/><g transform="translate(1708 790)"><path d="M-7 -14L5 -16L8 -2L-3 1Z" fill="#0c0c10"/><circle cx="-3" cy="-16" r="3" fill="#c01060"/><circle cx="-2" cy="-3" r="3" fill="#ffae10"/><path d="M-13 14V6Q-6 1 0 4Q7 1 13 6V14Z" fill="#9a9a9a"/><path d="M-11 8H11M-10 11H10" stroke="#d8d8d8" stroke-width="1.300"/><circle cx="3" cy="-10" r="1.600" fill="#888"/></g></svg></div><svg class="abs" style="left:0;top:270px" width="263" height="480" viewBox="1657 366 263 480"><path d="M1752.4 381.7L1755 384.5L1757.6 381.7" fill="none" stroke="#9a9a9a" stroke-width="1.3"/><path d="M1861.500 381L1864 378L1866.500 381M1861.500 385L1864 388L1866.500 385" fill="none" stroke="#9a9a9a" stroke-width="1.2"/><g transform="translate(1886 382.500)"><path d="M-1.10 -4.30L-1.02 -5.91L1.02 -5.91L1.10 -4.30L2.27 -3.82L3.46 -4.90L4.90 -3.46L3.82 -2.27L4.30 -1.10L5.91 -1.02L5.91 1.02L4.30 1.10L3.82 2.27L4.90 3.46L3.46 4.90L2.27 3.82L1.10 4.30L1.02 5.91L-1.02 5.91L-1.10 4.30L-2.27 3.82L-3.46 4.90L-4.90 3.46L-3.82 2.27L-4.30 1.10L-5.91 1.02L-5.91 -1.02L-4.30 -1.10L-3.82 -2.27L-4.90 -3.46L-3.46 -4.90L-2.27 -3.82ZM2.16 0A2.16 2.16 0 1 0 -2.16 0A2.16 2.16 0 1 0 2.16 0Z" fill="#f0f0f0" fill-rule="evenodd" stroke="#f0f0f0" stroke-width=".6" stroke-linejoin="round"/></g><rect x="1901" y="382" width="9" height="7.500" rx="1" fill="#a8a8a8"/><path d="M1903 382V379.500A2.600 2.600 0 0 1 1908.200 379" fill="none" stroke="#a8a8a8" stroke-width="1.400"/><path d="M1676 814.500H1664.500V828.500H1678V818" fill="none" stroke="#9a9a9a" stroke-width="1.200"/><path d="M1669.500 823.500L1670.500 820L1678.500 812L1681 814.500L1673 822.500Z" fill="none" stroke="#9a9a9a" stroke-width="1.100"/><rect x="1716" y="813" width="16" height="16" fill="#e0e0e0"/><path d="M1719 825V817H1723M1719 821H1722.500M1725 817L1730 825M1730 817L1725 825" fill="none" stroke="#333" stroke-width="1.500"/><rect x="1738" y="813" width="16" height="16" fill="#e0e0e0"/><circle cx="1746" cy="821" r="4.800" fill="#333"/><path d="M1761 813H1775V815.500L1770 821L1775 826.500V829H1761V826.500L1766 821L1761 815.500Z" fill="#e0e0e0"/><circle cx="1790" cy="821" r="7.300" fill="none" stroke="#e0e0e0" stroke-width="1.300"/><path d="M1790 813.700A7.300 7.300 0 0 1 1790 828.300Z" fill="#e0e0e0" transform="rotate(45 1790 821)"/><rect x="1830.600" y="813.600" width="14.800" height="14.800" fill="none" stroke="#e0e0e0" stroke-width="1.200"/><circle cx="1836" cy="819" r="3.600" fill="#e0e0e0"/><circle cx="1840" cy="823" r="3.600" fill="none" stroke="#e0e0e0" stroke-width="1.100"/><path d="M1852.600 828.400V814.600H1858L1860 817H1867.400V828.400Z" fill="none" stroke="#e0e0e0" stroke-width="1.200"/><rect x="1874.0" y="813.0" width="2.700" height="2.700" fill="#e0e0e0"/><rect x="1879.4" y="813.0" width="2.700" height="2.700" fill="#e0e0e0"/><rect x="1884.8" y="813.0" width="2.700" height="2.700" fill="#e0e0e0"/><rect x="1876.7" y="815.7" width="2.700" height="2.700" fill="#e0e0e0"/><rect x="1882.1" y="815.7" width="2.700" height="2.700" fill="#e0e0e0"/><rect x="1887.5" y="815.7" width="2.700" height="2.700" fill="#e0e0e0"/><rect x="1874.0" y="818.4" width="2.700" height="2.700" fill="#e0e0e0"/><rect x="1879.4" y="818.4" width="2.700" height="2.700" fill="#e0e0e0"/><rect x="1884.8" y="818.4" width="2.700" height="2.700" fill="#e0e0e0"/><rect x="1876.7" y="821.1" width="2.700" height="2.700" fill="#e0e0e0"/><rect x="1882.1" y="821.1" width="2.700" height="2.700" fill="#e0e0e0"/><rect x="1887.5" y="821.1" width="2.700" height="2.700" fill="#e0e0e0"/><rect x="1874.0" y="823.8" width="2.700" height="2.700" fill="#e0e0e0"/><rect x="1879.4" y="823.8" width="2.700" height="2.700" fill="#e0e0e0"/><rect x="1884.8" y="823.8" width="2.700" height="2.700" fill="#e0e0e0"/><rect x="1876.7" y="826.5" width="2.700" height="2.700" fill="#e0e0e0"/><rect x="1882.1" y="826.5" width="2.700" height="2.700" fill="#e0e0e0"/><rect x="1887.5" y="826.5" width="2.700" height="2.700" fill="#e0e0e0"/><path d="M1898 816.500H1910M1901.500 816.500V814H1906.500V816.500M1899.500 816.500L1900.300 829H1907.700L1908.500 816.500M1902.500 819.500V826M1905.500 819.500V826" fill="none" stroke="#e0e0e0" stroke-width="1.200"/></svg><div class="abs" style="left:0;top:740px;width:263px;height:2px;background:#1e1e1e"></div><div class="tabbar" style="top:742px"><div class="grip"></div><div class="tab" style="left:24px">Transform</div><div class="tab on" style="left:79px">Navigator</div><div class="tab" style="left:144px">History</div><div class="dd"><svg width="14" height="13" style="position:absolute;left:0;top:0"><path d="M3 3.6L7 9.6L11 3.6" fill="none" stroke="#eee" stroke-width="1.5"/></svg></div></div><svg class="abs" style="left:0;top:770px" width="263" height="214" viewBox="1657 866 263 214"><defs><linearGradient id="nvbg" gradientUnits="userSpaceOnUse" x1="0" y1="936" x2="0" y2="1053"><stop offset="0" stop-color="#ff0a78"/><stop offset=".2" stop-color="#e414b8"/><stop offset=".3" stop-color="#b040e8"/><stop offset=".36" stop-color="#28a4f8"/><stop offset=".44" stop-color="#f4f8e4"/><stop offset=".52" stop-color="#a4f430"/><stop offset=".62" stop-color="#c0e824"/><stop offset=".72" stop-color="#ffd010"/><stop offset="1" stop-color="#ffc400"/></linearGradient><clipPath id="nvclip"><rect x="1715" y="936" width="146" height="117"/></clipPath></defs><rect x="1666" y="877.500" width="14" height="15" rx="2" fill="#2c2c2c"/><path d="M1670 885H1676" stroke="#6a6a6a" stroke-width="1.300"/><rect x="1688" y="880" width="154" height="8.500" rx="4.250" fill="#282828"/><rect x="1688" y="880" width="31" height="8.500" rx="4.250" fill="#0a7cff"/><rect x="1714.500" y="878.500" width="5" height="12" rx="1.500" fill="#d4d4d4"/><rect x="1698.5" y="890.500" width="1" height="3" fill="#5e5e5e"/><rect x="1717" y="890.500" width="1" height="3" fill="#5e5e5e"/><rect x="1742" y="890.500" width="1" height="3" fill="#5e5e5e"/><rect x="1750" y="890.500" width="1" height="3" fill="#5e5e5e"/><rect x="1766" y="890.500" width="1" height="3" fill="#5e5e5e"/><rect x="1783" y="890.500" width="1" height="3" fill="#5e5e5e"/><rect x="1804" y="890.500" width="1" height="3" fill="#5e5e5e"/><rect x="1808.5" y="890.500" width="1" height="3" fill="#5e5e5e"/><rect x="1813" y="890.500" width="1" height="3" fill="#5e5e5e"/><rect x="1821" y="890.500" width="1" height="3" fill="#5e5e5e"/><rect x="1848" y="877.500" width="14" height="15" rx="2" fill="#2c2c2c"/><path d="M1851.500 885H1858.500M1855 881.500V888.500" stroke="#8a8a8a" stroke-width="1.300"/><rect x="1871" y="876" width="42" height="18" rx="3" fill="#2a2a2a"/><rect x="1657" y="903" width="263" height="23" rx="4" fill="#515151"/><path d="M1909.500 912L1912 909L1914.500 912M1909.500 916L1912 919L1914.500 916" fill="none" stroke="#e8e8e8" stroke-width="1.200"/><g clip-path="url(#nvclip)"><rect x="1715" y="936" width="146" height="117" fill="url(#nvbg)"/><use href="#artg" transform="translate(1725 939) scale(0.0791) translate(-48 -96)"/><circle cx="1760" cy="1030" r="22" fill="#ff4aa0"/><circle cx="1800" cy="1035" r="24" fill="#ff2a9c"/><circle cx="1775" cy="1045" r="20" fill="#ff5a80"/><circle cx="1830" cy="1040" r="16" fill="#ff3a90"/><circle cx="1745" cy="1045" r="14" fill="#ff8a40"/><circle cx="1790" cy="1020" r="14" fill="#ffa040"/><circle cx="1815" cy="1022" r="14" fill="#f030b0"/><circle cx="1762" cy="1044" r="5" fill="#fff"/><circle cx="1801" cy="1043.500" r="3.500" fill="#fff"/><circle cx="1821" cy="1019" r="5.500" fill="#fff"/><rect x="1725" y="939" width="127" height="76" fill="#2a3040" opacity=".22"/><rect x="1725.500" y="939.500" width="126" height="75" fill="none" stroke="#5a6ab0" stroke-width="1"/></g><rect x="1657" y="1057.500" width="263" height="1" fill="#222"/><path d="M1909.500 1065V1073M1906 1067L1913 1071M1913 1067L1906 1071" stroke="#bdbdbd" stroke-width="1.200"/></svg><div class="t" style="left:216px;top:781px;font-size:11px;color:#f4f4f4;font-weight:normal;height:16px;line-height:16px;-webkit-text-stroke:0.3px;">50 %</div><div class="t" style="left:3.400000000000091px;top:810.5px;font-size:11px;color:#f4f4f4;font-weight:normal;height:16px;line-height:16px;-webkit-text-stroke:0.3px;letter-spacing:-0.25px;">View Point 1</div><div class="t" style="left:5px;top:965.5px;font-size:11px;color:#f4f4f4;font-weight:normal;height:16px;line-height:16px;-webkit-text-stroke:0.3px;">Inioluwa Alabi (50.0%)</div></div></div>
<svg class="abs" style="left:0;top:0" width="12" height="12"><path d="M0 0H11A11 11 0 0 0 0 11Z" fill="#0a0a0a"/></svg>
<svg class="abs" style="left:1908px;top:0" width="12" height="12"><path d="M12 0H1A11 11 0 0 1 12 11Z" fill="#0a0a0a"/></svg>
</div></body></html>
